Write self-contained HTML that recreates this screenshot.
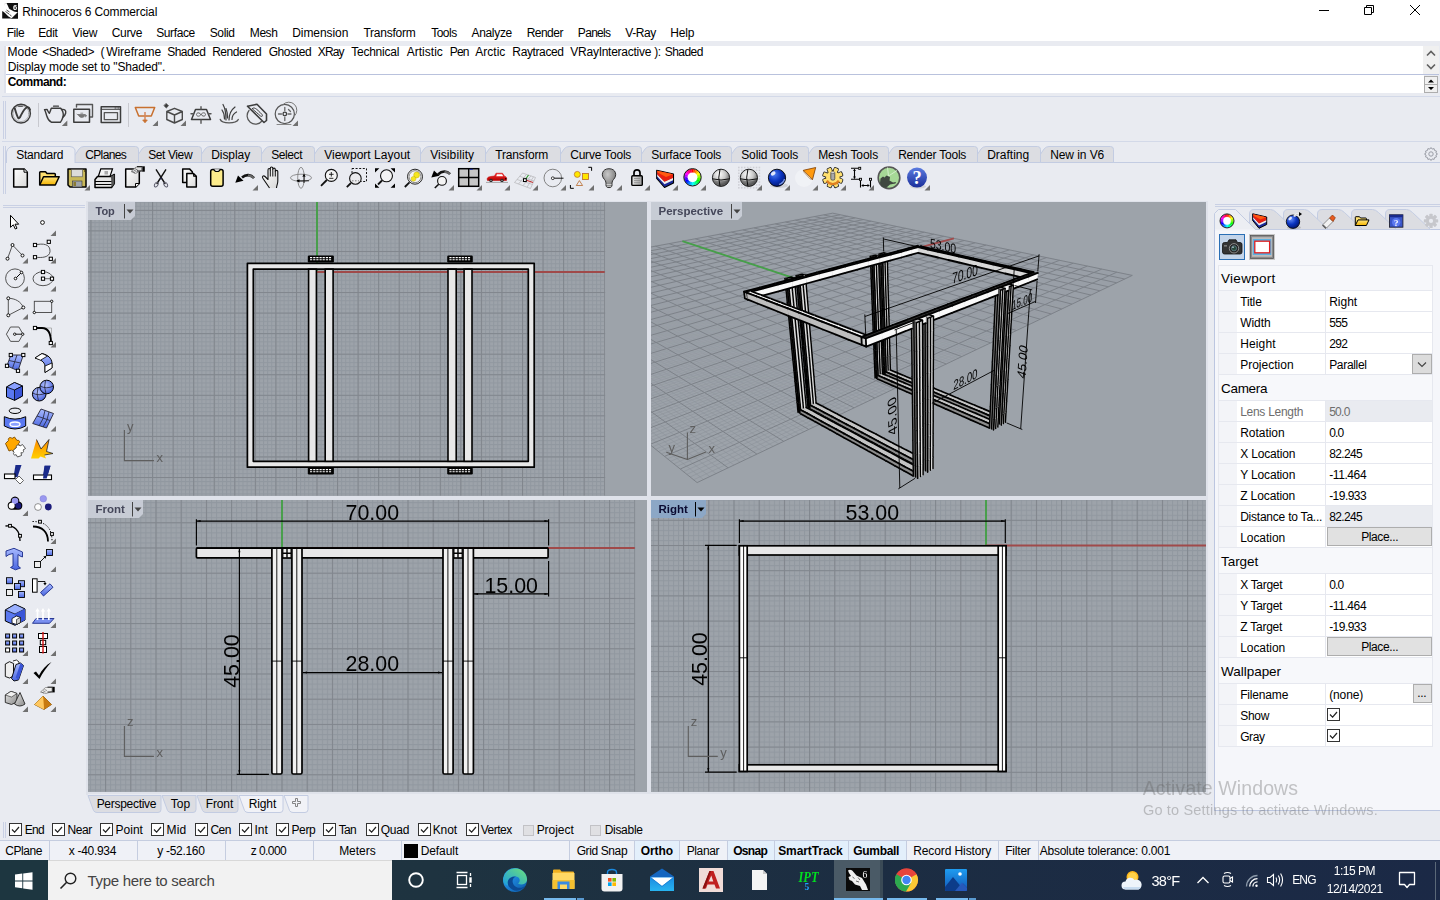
<!DOCTYPE html><html><head><meta charset="utf-8"><title>Rhinoceros 6</title><style>
*{box-sizing:border-box;margin:0;padding:0}
html,body{width:1440px;height:900px;overflow:hidden;background:#e9ebf1;font-family:"Liberation Sans",sans-serif;font-size:12px;color:#000}
.a{position:absolute;white-space:pre}
.t{position:absolute;white-space:pre;line-height:14px;height:14px}
svg{position:absolute;overflow:visible}
</style></head><body>
<div class="a" style="left:0;top:0;width:1440px;height:41px;background:#fff"></div>
<div class="a" style="left:22.16px;top:5.09px;font-size:12px;line-height:15px;height:15px;letter-spacing:-0.132px;">Rhinoceros 6 Commercial</div>
<div class="a" style="left:6.66px;top:26.09px;font-size:12px;line-height:15px;height:15px;letter-spacing:-0.459px;">File</div>
<div class="a" style="left:38.16px;top:26.09px;font-size:12px;line-height:15px;height:15px;letter-spacing:-0.294px;">Edit</div>
<div class="a" style="left:72.16px;top:26.09px;font-size:12px;line-height:15px;height:15px;letter-spacing:-0.198px;">View</div>
<div class="a" style="left:111.66px;top:26.09px;font-size:12px;line-height:15px;height:15px;letter-spacing:-0.302px;">Curve</div>
<div class="a" style="left:156.16px;top:26.09px;font-size:12px;line-height:15px;height:15px;letter-spacing:-0.379px;">Surface</div>
<div class="a" style="left:209.66px;top:26.09px;font-size:12px;line-height:15px;height:15px;letter-spacing:-0.337px;">Solid</div>
<div class="a" style="left:249.86px;top:26.09px;font-size:12px;line-height:15px;height:15px;letter-spacing:-0.460px;">Mesh</div>
<div class="a" style="left:292.16px;top:26.09px;font-size:12px;line-height:15px;height:15px;letter-spacing:-0.054px;">Dimension</div>
<div class="a" style="left:363.46px;top:26.09px;font-size:12px;line-height:15px;height:15px;letter-spacing:-0.247px;">Transform</div>
<div class="a" style="left:431.16px;top:26.09px;font-size:12px;line-height:15px;height:15px;letter-spacing:-0.502px;">Tools</div>
<div class="a" style="left:471.46px;top:26.09px;font-size:12px;line-height:15px;height:15px;letter-spacing:-0.313px;">Analyze</div>
<div class="a" style="left:526.66px;top:26.09px;font-size:12px;line-height:15px;height:15px;letter-spacing:-0.526px;">Render</div>
<div class="a" style="left:577.86px;top:26.09px;font-size:12px;line-height:15px;height:15px;letter-spacing:-0.698px;">Panels</div>
<div class="a" style="left:625.36px;top:26.09px;font-size:12px;line-height:15px;height:15px;letter-spacing:-0.436px;">V-Ray</div>
<div class="a" style="left:670.36px;top:26.09px;font-size:12px;line-height:15px;height:15px;letter-spacing:-0.220px;">Help</div>
<svg style="left:1300px;top:0" width="140" height="22"><g stroke="#000" stroke-width="1" fill="none"><path d="M19 10.5h10"/><path d="M64.5 7.5h7v7h-7z"/><path d="M66.5 7.5v-2h7v7h-2"/><path d="M110 5l10 10M120 5l-10 10"/></g></svg>
<div class="a" style="left:4px;top:46px;width:1419px;height:28px;background:#fff"></div>
<div class="a" style="left:4px;top:74px;width:1435px;height:1px;background:#b9c2dd"></div>
<div class="a" style="left:4px;top:75px;width:1420px;height:18px;background:#fff"></div>
<div class="a" style="left:4px;top:46px;width:2px;height:47px;background:#dfe2ec"></div>
<div class="a" style="left:1423px;top:46px;width:16px;height:28px;background:#f0f0f0"></div>
<div class="a" style="left:7.41px;top:44.79px;font-size:12px;line-height:15px;height:15px;letter-spacing:0.121px;">Mode</div>
<div class="a" style="left:42.16px;top:44.79px;font-size:12px;line-height:15px;height:15px;letter-spacing:-0.423px;">&lt;Shaded&gt;</div>
<div class="a" style="left:100.41px;top:44.79px;font-size:12px;line-height:15px;height:15px;">(</div>
<div class="a" style="left:106.16px;top:44.79px;font-size:12px;line-height:15px;height:15px;letter-spacing:-0.037px;">Wireframe</div>
<div class="a" style="left:167.16px;top:44.79px;font-size:12px;line-height:15px;height:15px;letter-spacing:-0.528px;">Shaded</div>
<div class="a" style="left:212.16px;top:44.79px;font-size:12px;line-height:15px;height:15px;letter-spacing:-0.463px;">Rendered</div>
<div class="a" style="left:268.66px;top:44.79px;font-size:12px;line-height:15px;height:15px;letter-spacing:-0.409px;">Ghosted</div>
<div class="a" style="left:317.86px;top:44.79px;font-size:12px;line-height:15px;height:15px;letter-spacing:-0.911px;">XRay</div>
<div class="a" style="left:351.16px;top:44.79px;font-size:12px;line-height:15px;height:15px;letter-spacing:-0.225px;">Technical</div>
<div class="a" style="left:406.66px;top:44.79px;font-size:12px;line-height:15px;height:15px;letter-spacing:0.025px;">Artistic</div>
<div class="a" style="left:449.66px;top:44.79px;font-size:12px;line-height:15px;height:15px;letter-spacing:-0.784px;">Pen</div>
<div class="a" style="left:475.36px;top:44.79px;font-size:12px;line-height:15px;height:15px;letter-spacing:0.000px;">Arctic</div>
<div class="a" style="left:512.36px;top:44.79px;font-size:12px;line-height:15px;height:15px;letter-spacing:-0.388px;">Raytraced</div>
<div class="a" style="left:570.36px;top:44.79px;font-size:12px;line-height:15px;height:15px;letter-spacing:-0.267px;">VRayInteractive</div>
<div class="a" style="left:654.16px;top:44.79px;font-size:12px;line-height:15px;height:15px;letter-spacing:-0.315px;">):</div>
<div class="a" style="left:664.66px;top:44.79px;font-size:12px;line-height:15px;height:15px;letter-spacing:-0.528px;">Shaded</div>
<div class="a" style="left:7.66px;top:59.79px;font-size:12px;line-height:15px;height:15px;letter-spacing:-0.153px;">Display mode set to "Shaded".</div>
<div class="a" style="left:7.66px;top:75.29px;font-size:12px;line-height:15px;height:15px;font-weight:bold;letter-spacing:-0.521px;">Command:</div>
<svg style="left:1423px;top:46px" width="17" height="48"><g fill="none" stroke="#606060" stroke-width="1.6"><path d="M4 9.5l4-4 4 4"/><path d="M4 18.5l4 4 4-4"/></g><rect x="1.5" y="30.5" width="13" height="8" fill="#f0f0f0" stroke="#adadad"/><rect x="1.5" y="38.5" width="13" height="8" fill="#f0f0f0" stroke="#adadad"/><path d="M5 36.5l3-3 3 3zM5 41l3 3 3-3z" fill="#000"/></svg>
<div class="a" style="left:2px;top:96px;width:1438px;height:1px;background:#d3d9e8"></div>
<div class="a" style="left:2px;top:141px;width:1438px;height:1px;background:#d3d9e8"></div>
<div class="a" style="left:3px;top:101px;width:1px;height:38px;background:#c9d0e4"></div>
<div class="a" style="left:5px;top:101px;width:1px;height:38px;background:#c9d0e4"></div>
<div class="a" style="left:3px;top:146px;width:1px;height:48px;background:#c9d0e4"></div>
<div class="a" style="left:5px;top:146px;width:1px;height:48px;background:#c9d0e4"></div>
<div class="a" style="left:38px;top:103px;width:1px;height:24px;background:#c8c9cf"></div>
<div class="a" style="left:128px;top:103px;width:1px;height:24px;background:#c8c9cf"></div>
<svg style="left:0;top:140px" width="1440" height="30"><path d="M6 22.5H1440" stroke="#c3cce2" fill="none"/><path d="M1035 22.5 L1044 9 Q1046 6.5 1049 6.5 H1110.5 Q1113.5 6.5 1113.5 9.5 V22.5Z" fill="#dcdde2" stroke="#c3cce2"/><path d="M972 22.5 L981 9 Q983 6.5 986 6.5 H1037.5 Q1040.5 6.5 1040.5 9.5 V22.5Z" fill="#dcdde2" stroke="#c3cce2"/><path d="M883 22.5 L892 9 Q894 6.5 897 6.5 H974.5 Q977.5 6.5 977.5 9.5 V22.5Z" fill="#dcdde2" stroke="#c3cce2"/><path d="M803 22.5 L812 9 Q814 6.5 817 6.5 H885.5 Q888.5 6.5 888.5 9.5 V22.5Z" fill="#dcdde2" stroke="#c3cce2"/><path d="M726 22.5 L735 9 Q737 6.5 740 6.5 H805.5 Q808.5 6.5 808.5 9.5 V22.5Z" fill="#dcdde2" stroke="#c3cce2"/><path d="M636 22.5 L645 9 Q647 6.5 650 6.5 H728.5 Q731.5 6.5 731.5 9.5 V22.5Z" fill="#dcdde2" stroke="#c3cce2"/><path d="M555 22.5 L564 9 Q566 6.5 569 6.5 H638.5 Q641.5 6.5 641.5 9.5 V22.5Z" fill="#dcdde2" stroke="#c3cce2"/><path d="M480 22.5 L489 9 Q491 6.5 494 6.5 H557.5 Q560.5 6.5 560.5 9.5 V22.5Z" fill="#dcdde2" stroke="#c3cce2"/><path d="M415 22.5 L424 9 Q426 6.5 429 6.5 H482.5 Q485.5 6.5 485.5 9.5 V22.5Z" fill="#dcdde2" stroke="#c3cce2"/><path d="M309 22.5 L318 9 Q320 6.5 323 6.5 H417.5 Q420.5 6.5 420.5 9.5 V22.5Z" fill="#dcdde2" stroke="#c3cce2"/><path d="M256 22.5 L265 9 Q267 6.5 270 6.5 H311.5 Q314.5 6.5 314.5 9.5 V22.5Z" fill="#dcdde2" stroke="#c3cce2"/><path d="M196 22.5 L205 9 Q207 6.5 210 6.5 H258.5 Q261.5 6.5 261.5 9.5 V22.5Z" fill="#dcdde2" stroke="#c3cce2"/><path d="M133 22.5 L142 9 Q144 6.5 147 6.5 H198.5 Q201.5 6.5 201.5 9.5 V22.5Z" fill="#dcdde2" stroke="#c3cce2"/><path d="M70 22.5 L79 9 Q81 6.5 84 6.5 H135.5 Q138.5 6.5 138.5 9.5 V22.5Z" fill="#dcdde2" stroke="#c3cce2"/><path d="M6.5 23 V12 Q8 6.5 13 6.5 H70 Q74 6.5 75 10 V22.5 H6.5" fill="#e9ebf1" stroke="#c3cce2"/><path d="M7 22.5H74.5" stroke="#e9ebf1" stroke-width="1.6"/></svg>
<div class="a" style="left:16.16px;top:147.59px;font-size:12px;line-height:15px;height:15px;letter-spacing:-0.212px;">Standard</div>
<div class="a" style="left:85.16px;top:147.59px;font-size:12px;line-height:15px;height:15px;letter-spacing:-0.622px;">CPlanes</div>
<div class="a" style="left:148.16px;top:147.59px;font-size:12px;line-height:15px;height:15px;letter-spacing:-0.392px;">Set View</div>
<div class="a" style="left:211.16px;top:147.59px;font-size:12px;line-height:15px;height:15px;letter-spacing:-0.049px;">Display</div>
<div class="a" style="left:271.16px;top:147.59px;font-size:12px;line-height:15px;height:15px;letter-spacing:-0.392px;">Select</div>
<div class="a" style="left:324.16px;top:147.59px;font-size:12px;line-height:15px;height:15px;letter-spacing:0.011px;">Viewport Layout</div>
<div class="a" style="left:430.16px;top:147.59px;font-size:12px;line-height:15px;height:15px;letter-spacing:0.087px;">Visibility</div>
<div class="a" style="left:495.16px;top:147.59px;font-size:12px;line-height:15px;height:15px;letter-spacing:-0.136px;">Transform</div>
<div class="a" style="left:570.16px;top:147.59px;font-size:12px;line-height:15px;height:15px;letter-spacing:-0.194px;">Curve Tools</div>
<div class="a" style="left:651.16px;top:147.59px;font-size:12px;line-height:15px;height:15px;letter-spacing:-0.191px;">Surface Tools</div>
<div class="a" style="left:741.16px;top:147.59px;font-size:12px;line-height:15px;height:15px;letter-spacing:-0.074px;">Solid Tools</div>
<div class="a" style="left:818.16px;top:147.59px;font-size:12px;line-height:15px;height:15px;letter-spacing:-0.047px;">Mesh Tools</div>
<div class="a" style="left:898.16px;top:147.59px;font-size:12px;line-height:15px;height:15px;letter-spacing:-0.207px;">Render Tools</div>
<div class="a" style="left:987.16px;top:147.59px;font-size:12px;line-height:15px;height:15px;letter-spacing:-0.002px;">Drafting</div>
<div class="a" style="left:1050.16px;top:147.59px;font-size:12px;line-height:15px;height:15px;letter-spacing:-0.077px;">New in V6</div>
<svg style="left:1423px;top:146px" width="16" height="16" viewBox="0 0 16 16"><g fill="none" stroke="#9a9da6" stroke-width="1"><circle cx="8" cy="8" r="2.2"/><path d="M8 1.5l1.2 1.6 1.9-.5.5 1.9 1.9.6-.6 1.8L14.5 8l-1.6 1.1.6 1.8-1.9.6-.5 1.9-1.9-.5L8 14.5l-1.2-1.6-1.9.5-.5-1.9-1.9-.6.6-1.8L1.500 8l1.600-1.100-.600-1.800 1.900-.6.500-1.900 1.900.5z"/></g></svg>
<div class="a" style="left:3px;top:205px;width:82px;height:1px;background:#c9d0e4"></div>
<div class="a" style="left:3px;top:207px;width:82px;height:1px;background:#c9d0e4"></div>
<div class="a" style="left:86px;top:201px;width:2px;height:594px;background:#dfe2ea"></div>
<div class="a" style="left:88px;top:201px;width:1120px;height:593px;background:#dfe2ea"></div>
<svg style="left:88px;top:202px;overflow:hidden;opacity:0.999;will-change:transform" width="559" height="294" viewBox="0 0 559 294"><defs><pattern id="gtm" width="4.11" height="4.11" patternUnits="userSpaceOnUse" x="229" y="70"><path d="M0 0.5H4.11M0.5 0V4.11" stroke="#9198a0" stroke-width="1" fill="none"/></pattern><pattern id="gtM" width="20.55" height="20.55" patternUnits="userSpaceOnUse" x="229" y="70"><path d="M0 0.5H20.55M0.5 0V20.55" stroke="#81868d" stroke-width="1.1" fill="none"/></pattern></defs><rect width="559" height="294" fill="#9da3aa"/><rect x="0" y="0" width="516.7" height="294" fill="url(#gtm)" transform="translate(-0.5,-0.5)"/><rect x="0" y="0" width="517.7" height="294" fill="url(#gtM)" transform="translate(-0.5,-0.5)"/><path d="M229 0V70" stroke="#46a049" stroke-width="1.9"/><path d="M229 70H516.7" stroke="#a04a4a" stroke-width="1.9"/><rect x="219.8" y="53.6" width="26.1" height="6.8" rx="1.2" fill="#000"/><path d="M222.0 55.6h2.2M225.2 55.6h2.2M228.3 55.6h2.2M231.5 55.6h2.2M234.6 55.6h2.2M237.8 55.6h2.2M240.9 55.6h2.2M222.0 57.8h2.2M225.2 57.8h2.2M228.3 57.8h2.2M231.5 57.8h2.2M234.6 57.8h2.2M237.8 57.8h2.2M240.9 57.8h2.2" stroke="#fff" stroke-width="1.1"/><rect x="219.8" y="265.6" width="26.1" height="6.8" rx="1.2" fill="#000"/><path d="M222.0 267.6h2.2M225.2 267.6h2.2M228.3 267.6h2.2M231.5 267.6h2.2M234.6 267.6h2.2M237.8 267.6h2.2M240.9 267.6h2.2M222.0 269.8h2.2M225.2 269.8h2.2M228.3 269.8h2.2M231.5 269.8h2.2M234.6 269.8h2.2M237.8 269.8h2.2M240.9 269.8h2.2" stroke="#fff" stroke-width="1.1"/><rect x="359.2" y="53.6" width="25.6" height="6.8" rx="1.2" fill="#000"/><path d="M361.4 55.6h2.2M364.5 55.6h2.2M367.6 55.6h2.2M370.7 55.6h2.2M373.7 55.6h2.2M376.8 55.6h2.2M379.9 55.6h2.2M361.4 57.8h2.2M364.5 57.8h2.2M367.6 57.8h2.2M370.7 57.8h2.2M373.7 57.8h2.2M376.8 57.8h2.2M379.9 57.8h2.2" stroke="#fff" stroke-width="1.1"/><rect x="359.2" y="265.6" width="25.6" height="6.8" rx="1.2" fill="#000"/><path d="M361.4 267.6h2.2M364.5 267.6h2.2M367.6 267.6h2.2M370.7 267.6h2.2M373.7 267.6h2.2M376.8 267.6h2.2M379.9 267.6h2.2M361.4 269.8h2.2M364.5 269.8h2.2M367.6 269.8h2.2M370.7 269.8h2.2M373.7 269.8h2.2M376.8 269.8h2.2M379.9 269.8h2.2" stroke="#fff" stroke-width="1.1"/><path fill-rule="evenodd" d="M159.4 61.30000000000001H446.20000000000005V265.2H159.4ZM165.3 67.20000000000002V259.3H440.30000000000007V67.20000000000002Z" fill="#e8e8e8" stroke="#000" stroke-width="1.7" stroke-linejoin="round"/><rect x="220.6" y="67.2" width="7.8" height="192.1" fill="#e8e8e8" stroke="#000" stroke-width="1.6"/><rect x="237.2" y="67.2" width="7.9" height="192.1" fill="#e8e8e8" stroke="#000" stroke-width="1.6"/><rect x="360.0" y="67.2" width="8.2" height="192.1" fill="#e8e8e8" stroke="#000" stroke-width="1.6"/><rect x="376.1" y="67.2" width="7.9" height="192.1" fill="#e8e8e8" stroke="#000" stroke-width="1.6"/><path d="M36.400000000000006 228.10000000000002V258.6H65.9" stroke="#5e5e5e" stroke-width="1.1" fill="none"/><text x="38.900000000000006" y="228.60000000000002" font-family="Liberation Sans" font-size="13" fill="#5e5e5e">y</text><text x="68.4" y="259.6" font-family="Liberation Sans" font-size="13" fill="#5e5e5e">x</text><path d="M0 0H47V14L43 18H0Z" fill="#c9cdd6" opacity="0.96"/><text x="7.5" y="13" font-family="Liberation Sans" font-weight="bold" font-size="11" fill="#45475a">Top</text><path d="M36.5 2V16.5" stroke="#444" stroke-width="1"/><path d="M38.5 7.5h7l-3.5 4z" fill="#444"/></svg>
<svg style="left:88px;top:500px;overflow:hidden;opacity:0.999;will-change:transform" width="559" height="292" viewBox="0 0 559 292"><defs><pattern id="gfm" width="5.04" height="5.04" patternUnits="userSpaceOnUse" x="194" y="48"><path d="M0 0.5H5.04M0.5 0V5.04" stroke="#9198a0" stroke-width="1" fill="none"/></pattern><pattern id="gfM" width="25.2" height="25.2" patternUnits="userSpaceOnUse" x="194" y="48"><path d="M0 0.5H25.2M0.5 0V25.2" stroke="#81868d" stroke-width="1.1" fill="none"/></pattern></defs><rect width="559" height="292" fill="#9da3aa"/><rect x="0" y="0" width="546.8" height="292" fill="url(#gfm)" transform="translate(-0.5,-0.5)"/><rect x="0" y="0" width="547.8" height="292" fill="url(#gfM)" transform="translate(-0.5,-0.5)"/><path d="M194 0V48" stroke="#46a049" stroke-width="1.9"/><path d="M194 48H546.8" stroke="#a04a4a" stroke-width="1.9"/><rect x="108.4" y="48.1" width="351.7" height="9.7" rx="1" fill="#e8e8e8" stroke="#000" stroke-width="1.7"/><path d="M183.9 48.1V272.5Q183.9 274.0 185.4 274.0H192.5Q194.0 274.0 194.0 272.5V48.1" fill="#f2f2f2" stroke="#000" stroke-width="1.7"/><path d="M188.8 48.1V274.0" stroke="#000" stroke-width="0.9"/><path d="M183.9 161.1H194.0" stroke="#000" stroke-width="0.9"/><path d="M203.9 48.1V272.5Q203.9 274.0 205.4 274.0H212.5Q214.0 274.0 214.0 272.5V48.1" fill="#f2f2f2" stroke="#000" stroke-width="1.7"/><path d="M208.8 48.1V274.0" stroke="#000" stroke-width="0.9"/><path d="M203.9 161.1H214.0" stroke="#000" stroke-width="0.9"/><path d="M355.0 48.1V272.5Q355.0 274.0 356.5 274.0H363.6Q365.1 274.0 365.1 272.5V48.1" fill="#f2f2f2" stroke="#000" stroke-width="1.7"/><path d="M359.9 48.1V274.0" stroke="#000" stroke-width="0.9"/><path d="M355.0 161.1H365.1" stroke="#000" stroke-width="0.9"/><path d="M375.0 48.1V272.5Q375.0 274.0 376.5 274.0H383.9Q385.4 274.0 385.4 272.5V48.1" fill="#f2f2f2" stroke="#000" stroke-width="1.7"/><path d="M380.0 48.1V274.0" stroke="#000" stroke-width="0.9"/><path d="M375.0 161.1H385.4" stroke="#000" stroke-width="0.9"/><rect x="194.8" y="48.1" width="8.3" height="9.7" fill="#f2f2f2" stroke="#000" stroke-width="1.2"/><path d="M199.0 48.1V57.8M194.8 53.3H203.1" stroke="#000" stroke-width="1.4"/><rect x="365.9" y="48.1" width="8.3" height="9.7" fill="#f2f2f2" stroke="#000" stroke-width="1.2"/><path d="M370.0 48.1V57.8M365.9 53.3H374.2" stroke="#000" stroke-width="1.4"/><path d="M108.4 48.1H460.1" stroke="#000" stroke-width="1.7"/><path d="M108.4 21.100000000000023H460.6M108.4 19.200000000000045V45.60000000000002M460.6 19.200000000000045V45.60000000000002" stroke="#000" stroke-width="1.15" fill="none"/><path d="M108.4 21.100000000000023L112.6 20.1L112.6 22.1Z" fill="#000"/><path d="M460.6 21.100000000000023L456.4 22.1L456.4 20.1Z" fill="#000"/><text x="284.3" y="20.200000000000045" font-family="Liberation Sans" font-size="21.4" text-anchor="middle" fill="#000">70.00</text><path d="M385.9 93.89999999999998H460.6M460.6 60.89999999999998V96.39999999999998" stroke="#000" stroke-width="1.15" fill="none"/><path d="M385.9 93.89999999999998L390.1 92.9L390.1 94.9Z" fill="#000"/><path d="M460.6 93.89999999999998L456.4 94.9L456.4 92.9Z" fill="#000"/><text x="423.2" y="92.60000000000002" font-family="Liberation Sans" font-size="21.4" text-anchor="middle" fill="#000">15.00</text><path d="M214.8 172.60000000000002H354.2" stroke="#000" stroke-width="1.15" fill="none"/><path d="M214.8 172.60000000000002L219.0 171.6L219.0 173.6Z" fill="#000"/><path d="M354.2 172.60000000000002L350.0 173.6L350.0 171.6Z" fill="#000"/><text x="284.3" y="171.39999999999998" font-family="Liberation Sans" font-size="21.4" text-anchor="middle" fill="#000">28.00</text><path d="M151.4 48V274.4M148.7 274.4H180.89999999999998" stroke="#000" stroke-width="1.15" fill="none"/><path d="M151.4 48L152.4 52.2L150.4 52.2Z" fill="#000"/><path d="M151.4 274.4L150.4 270.2L152.4 270.2Z" fill="#000"/><text x="150.6" y="161" font-family="Liberation Sans" font-size="21.4" text-anchor="middle" fill="#000" transform="rotate(-90 150.6 161)">45.00</text><path d="M36.400000000000006 225.89999999999998V256.4H65.9" stroke="#5e5e5e" stroke-width="1.1" fill="none"/><text x="38.900000000000006" y="226.39999999999998" font-family="Liberation Sans" font-size="13" fill="#5e5e5e">z</text><text x="68.4" y="257.4" font-family="Liberation Sans" font-size="13" fill="#5e5e5e">x</text><path d="M0 0H55V14L51 18H0Z" fill="#c9cdd6" opacity="0.96"/><text x="7.5" y="13" font-family="Liberation Sans" font-weight="bold" font-size="11.5" fill="#45475a">Front</text><path d="M44.5 2V16.5" stroke="#444" stroke-width="1"/><path d="M46.5 7.5h7l-3.5 4z" fill="#444"/></svg>
<svg style="left:651px;top:500px;overflow:hidden;opacity:0.999;will-change:transform" width="555" height="292" viewBox="0 0 555 292"><defs><pattern id="grm" width="5.04" height="5.04" patternUnits="userSpaceOnUse" x="335" y="45.5"><path d="M0 0.5H5.04M0.5 0V5.04" stroke="#9198a0" stroke-width="1" fill="none"/></pattern><pattern id="grM" width="25.2" height="25.2" patternUnits="userSpaceOnUse" x="335" y="45.5"><path d="M0 0.5H25.2M0.5 0V25.2" stroke="#81868d" stroke-width="1.1" fill="none"/></pattern></defs><rect width="555" height="292" fill="#9da3aa"/><rect x="0" y="0" width="555" height="292" fill="url(#grm)" transform="translate(-0.5,-0.5)"/><rect x="0" y="0" width="556" height="292" fill="url(#grM)" transform="translate(-0.5,-0.5)"/><path d="M335 0V45.5" stroke="#46a049" stroke-width="1.9"/><path d="M335 45.5H555" stroke="#a04a4a" stroke-width="1.9"/><rect x="88.4" y="45.8" width="266.6" height="9.2" fill="#e8e8e8" stroke="#000" stroke-width="1.7"/><rect x="88.4" y="264.8" width="266.6" height="6.6" fill="#e8e8e8" stroke="#000" stroke-width="1.7"/><rect x="88.4" y="45.8" width="7.8" height="225.6" fill="#fff" stroke="#000" stroke-width="1.7"/><path d="M92.6 45.8V271.4" stroke="#000" stroke-width="0.9"/><path d="M88.4 157.8h7.8" stroke="#000" stroke-width="0.9"/><rect x="347.2" y="45.8" width="7.8" height="225.6" fill="#fff" stroke="#000" stroke-width="1.7"/><path d="M351.4 45.8V271.4" stroke="#000" stroke-width="0.9"/><path d="M347.2 157.8h7.8" stroke="#000" stroke-width="0.9"/><path d="M88.39999999999998 21.100000000000023H354.29999999999995M88.39999999999998 19.200000000000045V43M354.29999999999995 19.200000000000045V43" stroke="#000" stroke-width="1.15" fill="none"/><path d="M88.39999999999998 21.100000000000023L92.6 20.1L92.6 22.1Z" fill="#000"/><path d="M354.29999999999995 21.100000000000023L350.1 22.1L350.1 20.1Z" fill="#000"/><text x="221.29999999999995" y="20.200000000000045" font-family="Liberation Sans" font-size="21.4" text-anchor="middle" fill="#000">53.00</text><path d="M57.299999999999955 45.299999999999955V272.1M54 45.299999999999955H85.70000000000005M54 272.1H85.70000000000005" stroke="#000" stroke-width="1.15" fill="none"/><path d="M57.299999999999955 45.299999999999955L58.3 49.5L56.3 49.5Z" fill="#000"/><path d="M57.299999999999955 272.1L56.3 267.9L58.3 267.9Z" fill="#000"/><text x="56.39999999999998" y="159" font-family="Liberation Sans" font-size="21.4" text-anchor="middle" fill="#000" transform="rotate(-90 56.39999999999998 159)">45.00</text><path d="M37.299999999999955 225.89999999999998V256.4H66.79999999999995" stroke="#5e5e5e" stroke-width="1.1" fill="none"/><text x="39.799999999999955" y="226.39999999999998" font-family="Liberation Sans" font-size="13" fill="#5e5e5e">z</text><text x="69.29999999999995" y="257.4" font-family="Liberation Sans" font-size="13" fill="#5e5e5e">y</text><path d="M0 0H55V14L51 18H0Z" fill="#8ba8c7" opacity="0.96"/><text x="7.5" y="13" font-family="Liberation Sans" font-weight="bold" font-size="11.5" fill="#0a0a30">Right</text><path d="M44.5 2V16.5" stroke="#000" stroke-width="1"/><path d="M46.5 7.5h7l-3.5 4z" fill="#000"/></svg>
<svg style="left:651px;top:202px;overflow:hidden;opacity:0.999;will-change:transform" width="555" height="294" viewBox="0 0 555 294"><rect width="555" height="294" fill="#9da3aa"/><defs><linearGradient id="pgA" gradientUnits="userSpaceOnUse" x1="0" y1="95" x2="0" y2="215"><stop offset="0" stop-color="#000"/><stop offset="1" stop-color="#fff"/></linearGradient><linearGradient id="pgB" gradientUnits="userSpaceOnUse" x1="0" y1="95" x2="0" y2="215"><stop offset="0" stop-color="#fff"/><stop offset="1" stop-color="#000"/></linearGradient><mask id="pmA" maskUnits="userSpaceOnUse" x="0" y="0" width="555" height="294"><rect width="555" height="294" fill="url(#pgA)"/></mask><mask id="pmB" maskUnits="userSpaceOnUse" x="0" y="0" width="555" height="294"><rect width="555" height="294" fill="url(#pgB)"/></mask></defs><g mask="url(#pmB)"><path d="M52.5 277.5L-196.0 81.5M42.6 277.8L478.2 72.8M58.8 274.5L-191.9 80.8M39.2 275.0L475.1 72.1M65.0 271.6L-187.8 80.0M35.9 272.3L472.0 71.5M71.1 268.7L-183.7 79.2M32.5 269.7L468.9 70.8M83.0 263.0L-175.6 77.7M26.0 264.4L462.8 69.6M88.9 260.2L-171.6 77.0M22.9 261.9L459.8 68.9M94.6 257.5L-167.6 76.2M19.7 259.3L456.8 68.3M100.3 254.8L-163.7 75.5M16.6 256.8L453.8 67.7M111.4 249.5L-155.9 74.1M10.5 251.9L447.9 66.5M116.8 246.9L-152.0 73.3M7.5 249.5L445.0 65.9M122.2 244.3L-148.2 72.6M4.6 247.2L442.1 65.3M127.5 241.8L-144.4 71.9M1.7 244.8L439.2 64.7M137.8 236.9L-136.9 70.5M-4.0 240.2L433.5 63.5M142.9 234.5L-133.2 69.8M-6.8 238.0L430.6 62.9M147.9 232.1L-129.5 69.1M-9.6 235.8L427.8 62.3M152.9 229.7L-125.8 68.5M-12.3 233.6L425.0 61.7M162.5 225.1L-118.6 67.1M-17.7 229.2L419.5 60.6M167.3 222.9L-115.0 66.4M-20.3 227.1L416.8 60.0M172.0 220.7L-111.4 65.8M-22.9 225.0L414.1 59.4M176.6 218.4L-107.9 65.1M-25.5 223.0L411.3 58.9M185.7 214.1L-100.9 63.8M-30.5 218.9L406.0 57.8M190.1 212.0L-97.5 63.2M-33.0 216.9L403.3 57.2M194.5 209.9L-94.0 62.5M-35.4 214.9L400.7 56.7M198.9 207.9L-90.6 61.9M-37.9 213.0L398.1 56.1M207.4 203.8L-83.9 60.7M-42.6 209.2L392.9 55.1M211.6 201.8L-80.5 60.0M-45.0 207.3L390.3 54.5M215.7 199.8L-77.2 59.4M-47.3 205.4L387.7 54.0M219.8 197.9L-73.9 58.8M-49.5 203.6L385.2 53.5M227.8 194.1L-67.4 57.6M-54.0 200.0L380.1 52.4M231.7 192.2L-64.2 57.0M-56.3 198.2L377.6 51.9M235.6 190.4L-60.9 56.4M-58.4 196.4L375.2 51.4M239.4 188.5L-57.8 55.8M-60.6 194.7L372.7 50.9M247.0 184.9L-51.5 54.6M-64.9 191.3L367.8 49.9M250.7 183.2L-48.3 54.0M-66.9 189.6L365.4 49.3M254.4 181.4L-45.2 53.5M-69.0 187.9L363.0 48.8M258.0 179.7L-42.1 52.9M-71.1 186.3L360.6 48.4M265.1 176.3L-36.0 51.8M-75.1 183.0L355.8 47.4M268.6 174.7L-33.0 51.2M-77.1 181.4L353.5 46.9M272.1 173.0L-30.0 50.6M-79.0 179.8L351.1 46.4M275.5 171.4L-27.0 50.1M-81.0 178.3L348.8 45.9M282.2 168.2L-21.1 49.0M-84.8 175.2L344.2 45.0M285.6 166.6L-18.2 48.4M-86.7 173.7L341.9 44.5M288.8 165.0L-15.3 47.9M-88.5 172.2L339.6 44.0M292.1 163.5L-12.4 47.4M-90.4 170.7L337.4 43.5M298.5 160.4L-6.7 46.3M-94.0 167.8L332.9 42.6M301.6 159.0L-3.9 45.8M-95.8 166.3L330.7 42.1M304.7 157.5L-1.1 45.2M-97.6 164.9L328.4 41.7M307.8 156.0L1.7 44.7M-99.3 163.5L326.2 41.2M313.8 153.1L7.3 43.7M-102.8 160.7L321.9 40.3M316.8 151.7L10.0 43.2M-104.5 159.4L319.7 39.9M319.7 150.3L12.8 42.7M-106.2 158.0L317.6 39.4M322.7 148.9L15.5 42.2M-107.8 156.7L315.4 39.0M328.4 146.2L20.8 41.2M-111.1 154.0L311.2 38.1M331.2 144.8L23.5 40.7M-112.8 152.7L309.1 37.7M334.0 143.5L26.1 40.2M-114.4 151.4L307.0 37.2M336.8 142.2L28.8 39.7M-116.0 150.1L304.9 36.8M342.3 139.6L34.0 38.7M-119.1 147.6L300.8 36.0M345.0 138.3L36.6 38.2M-120.6 146.4L298.8 35.5M347.6 137.0L39.1 37.8M-122.2 145.1L296.7 35.1M350.3 135.8L41.7 37.3M-123.7 143.9L294.7 34.7M355.5 133.3L46.7 36.4M-126.7 141.5L290.7 33.9M358.0 132.1L49.2 35.9M-128.2 140.3L288.7 33.4M360.6 130.9L51.7 35.4M-129.6 139.1L286.7 33.0M363.1 129.7L54.2 35.0M-131.1 137.9L284.8 32.6M368.0 127.3L59.1 34.1M-133.9 135.6L280.8 31.8M370.5 126.2L61.5 33.6M-135.4 134.5L278.9 31.4M372.9 125.0L64.0 33.1M-136.8 133.4L277.0 31.0M375.3 123.9L66.4 32.7M-138.2 132.3L275.1 30.6M380.0 121.6L71.1 31.8M-140.9 130.1L271.3 29.8M382.4 120.5L73.5 31.4M-142.2 129.0L269.4 29.4M384.7 119.4L75.8 30.9M-143.6 127.9L267.5 29.0M387.0 118.3L78.2 30.5M-144.9 126.8L265.6 28.6M391.5 116.2L82.8 29.6M-147.5 124.7L261.9 27.9M393.7 115.1L85.1 29.2M-148.8 123.7L260.1 27.5M395.9 114.1L87.4 28.8M-150.1 122.6L258.2 27.1M398.1 113.0L89.6 28.4M-151.4 121.6L256.4 26.7M402.4 111.0L94.1 27.5M-153.9 119.6L252.8 26.0M404.6 109.9L96.4 27.1M-155.1 118.6L251.0 25.6M406.7 108.9L98.6 26.7M-156.4 117.6L249.2 25.2M408.8 107.9L100.8 26.3M-157.6 116.6L247.5 24.9M412.9 106.0L105.2 25.5M-160.0 114.7L243.9 24.2M414.9 105.0L107.3 25.1M-161.2 113.7L242.2 23.8M417.0 104.0L109.5 24.7M-162.4 112.8L240.4 23.4M419.0 103.1L111.6 24.3M-163.5 111.8L238.7 23.1M422.9 101.2L115.9 23.5M-165.9 110.0L235.3 22.4M424.9 100.3L118.0 23.1M-167.0 109.0L233.6 22.0M426.8 99.3L120.1 22.7M-168.1 108.1L231.9 21.6M428.8 98.4L122.2 22.3M-169.3 107.2L230.2 21.3M432.6 96.6L126.3 21.5M-171.5 105.4L226.8 20.6M434.4 95.7L128.4 21.2M-172.6 104.5L225.2 20.3M436.3 94.8L130.4 20.8M-173.7 103.7L223.5 19.9M438.1 94.0L132.5 20.4M-174.8 102.8L221.9 19.6M441.8 92.2L136.5 19.7M-176.9 101.1L218.6 18.9M443.6 91.4L138.5 19.3M-178.0 100.2L217.0 18.6M445.4 90.5L140.5 18.9M-179.0 99.4L215.4 18.2M447.1 89.7L142.5 18.5M-180.1 98.5L213.8 17.9M450.6 88.0L146.4 17.8M-182.1 96.9L210.6 17.2M452.4 87.2L148.3 17.4M-183.1 96.1L209.0 16.9M454.1 86.4L150.3 17.1M-184.1 95.2L207.4 16.6M455.8 85.6L152.2 16.7M-185.1 94.4L205.8 16.2M459.2 84.0L156.0 16.0M-187.1 92.8L202.7 15.6M460.8 83.2L157.9 15.7M-188.1 92.1L201.2 15.3M462.5 82.4L159.8 15.3M-189.1 91.3L199.6 15.0M464.1 81.6L161.7 15.0M-190.0 90.5L198.1 14.6M467.3 80.1L165.4 14.3M-192.0 89.0L195.1 14.0M468.9 79.3L167.2 13.9M-192.9 88.2L193.5 13.7M470.5 78.5L169.1 13.6M-193.8 87.4L192.0 13.4M472.1 77.8L170.9 13.2M-194.8 86.7L190.5 13.1M475.2 76.3L174.5 12.6M-196.6 85.2L187.6 12.5M476.8 75.6L176.3 12.2M-197.5 84.5L186.1 12.1M478.3 74.8L178.1 11.9M-198.4 83.7L184.6 11.8M479.8 74.1L179.9 11.6M-199.3 83.0L183.2 11.5" stroke="#8b9199" stroke-width="2.4" fill="none" opacity="0.2"/></g><g mask="url(#pmA)"><path d="M52.5 277.5L-196.0 81.5M42.6 277.8L478.2 72.8M58.8 274.5L-191.9 80.8M39.2 275.0L475.1 72.1M65.0 271.6L-187.8 80.0M35.9 272.3L472.0 71.5M71.1 268.7L-183.7 79.2M32.5 269.7L468.9 70.8M83.0 263.0L-175.6 77.7M26.0 264.4L462.8 69.6M88.9 260.2L-171.6 77.0M22.9 261.9L459.8 68.9M94.6 257.5L-167.6 76.2M19.7 259.3L456.8 68.3M100.3 254.8L-163.7 75.5M16.6 256.8L453.8 67.7M111.4 249.5L-155.9 74.1M10.5 251.9L447.9 66.5M116.8 246.9L-152.0 73.3M7.5 249.5L445.0 65.9M122.2 244.3L-148.2 72.6M4.6 247.2L442.1 65.3M127.5 241.8L-144.4 71.9M1.7 244.8L439.2 64.7M137.8 236.9L-136.9 70.5M-4.0 240.2L433.5 63.5M142.9 234.5L-133.2 69.8M-6.8 238.0L430.6 62.9M147.9 232.1L-129.5 69.1M-9.6 235.8L427.8 62.3M152.9 229.7L-125.8 68.5M-12.3 233.6L425.0 61.7M162.5 225.1L-118.6 67.1M-17.7 229.2L419.5 60.6M167.3 222.9L-115.0 66.4M-20.3 227.1L416.8 60.0M172.0 220.7L-111.4 65.8M-22.9 225.0L414.1 59.4M176.6 218.4L-107.9 65.1M-25.5 223.0L411.3 58.9M185.7 214.1L-100.9 63.8M-30.5 218.9L406.0 57.8M190.1 212.0L-97.5 63.2M-33.0 216.9L403.3 57.2M194.5 209.9L-94.0 62.5M-35.4 214.9L400.7 56.7M198.9 207.9L-90.6 61.9M-37.9 213.0L398.1 56.1M207.4 203.8L-83.9 60.7M-42.6 209.2L392.9 55.1M211.6 201.8L-80.5 60.0M-45.0 207.3L390.3 54.5M215.7 199.8L-77.2 59.4M-47.3 205.4L387.7 54.0M219.8 197.9L-73.9 58.8M-49.5 203.6L385.2 53.5M227.8 194.1L-67.4 57.6M-54.0 200.0L380.1 52.4M231.7 192.2L-64.2 57.0M-56.3 198.2L377.6 51.9M235.6 190.4L-60.9 56.4M-58.4 196.4L375.2 51.4M239.4 188.5L-57.8 55.8M-60.6 194.7L372.7 50.9M247.0 184.9L-51.5 54.6M-64.9 191.3L367.8 49.9M250.7 183.2L-48.3 54.0M-66.9 189.6L365.4 49.3M254.4 181.4L-45.2 53.5M-69.0 187.9L363.0 48.8M258.0 179.7L-42.1 52.9M-71.1 186.3L360.6 48.4M265.1 176.3L-36.0 51.8M-75.1 183.0L355.8 47.4M268.6 174.7L-33.0 51.2M-77.1 181.4L353.5 46.9M272.1 173.0L-30.0 50.6M-79.0 179.8L351.1 46.4M275.5 171.4L-27.0 50.1M-81.0 178.3L348.8 45.9M282.2 168.2L-21.1 49.0M-84.8 175.2L344.2 45.0M285.6 166.6L-18.2 48.4M-86.7 173.7L341.9 44.5M288.8 165.0L-15.3 47.9M-88.5 172.2L339.6 44.0M292.1 163.5L-12.4 47.4M-90.4 170.7L337.4 43.5M298.5 160.4L-6.7 46.3M-94.0 167.8L332.9 42.6M301.6 159.0L-3.9 45.8M-95.8 166.3L330.7 42.1M304.7 157.5L-1.1 45.2M-97.6 164.9L328.4 41.7M307.8 156.0L1.7 44.7M-99.3 163.5L326.2 41.2M313.8 153.1L7.3 43.7M-102.8 160.7L321.9 40.3M316.8 151.7L10.0 43.2M-104.5 159.4L319.7 39.9M319.7 150.3L12.8 42.7M-106.2 158.0L317.6 39.4M322.7 148.9L15.5 42.2M-107.8 156.7L315.4 39.0M328.4 146.2L20.8 41.2M-111.1 154.0L311.2 38.1M331.2 144.8L23.5 40.7M-112.8 152.7L309.1 37.7M334.0 143.5L26.1 40.2M-114.4 151.4L307.0 37.2M336.8 142.2L28.8 39.7M-116.0 150.1L304.9 36.8M342.3 139.6L34.0 38.7M-119.1 147.6L300.8 36.0M345.0 138.3L36.6 38.2M-120.6 146.4L298.8 35.5M347.6 137.0L39.1 37.8M-122.2 145.1L296.7 35.1M350.3 135.8L41.7 37.3M-123.7 143.9L294.7 34.7M355.5 133.3L46.7 36.4M-126.7 141.5L290.7 33.9M358.0 132.1L49.2 35.9M-128.2 140.3L288.7 33.4M360.6 130.9L51.7 35.4M-129.6 139.1L286.7 33.0M363.1 129.7L54.2 35.0M-131.1 137.9L284.8 32.6M368.0 127.3L59.1 34.1M-133.9 135.6L280.8 31.8M370.5 126.2L61.5 33.6M-135.4 134.5L278.9 31.4M372.9 125.0L64.0 33.1M-136.8 133.4L277.0 31.0M375.3 123.9L66.4 32.7M-138.2 132.3L275.1 30.6M380.0 121.6L71.1 31.8M-140.9 130.1L271.3 29.8M382.4 120.5L73.5 31.4M-142.2 129.0L269.4 29.4M384.7 119.4L75.8 30.9M-143.6 127.9L267.5 29.0M387.0 118.3L78.2 30.5M-144.9 126.8L265.6 28.6M391.5 116.2L82.8 29.6M-147.5 124.7L261.9 27.9M393.7 115.1L85.1 29.2M-148.8 123.7L260.1 27.5M395.9 114.1L87.4 28.8M-150.1 122.6L258.2 27.1M398.1 113.0L89.6 28.4M-151.4 121.6L256.4 26.7M402.4 111.0L94.1 27.5M-153.9 119.6L252.8 26.0M404.6 109.9L96.4 27.1M-155.1 118.6L251.0 25.6M406.7 108.9L98.6 26.7M-156.4 117.6L249.2 25.2M408.8 107.9L100.8 26.3M-157.6 116.6L247.5 24.9M412.9 106.0L105.2 25.5M-160.0 114.7L243.9 24.2M414.9 105.0L107.3 25.1M-161.2 113.7L242.2 23.8M417.0 104.0L109.5 24.7M-162.4 112.8L240.4 23.4M419.0 103.1L111.6 24.3M-163.5 111.8L238.7 23.1M422.9 101.2L115.9 23.5M-165.9 110.0L235.3 22.4M424.9 100.3L118.0 23.1M-167.0 109.0L233.6 22.0M426.8 99.3L120.1 22.7M-168.1 108.1L231.9 21.6M428.8 98.4L122.2 22.3M-169.3 107.2L230.2 21.3M432.6 96.6L126.3 21.5M-171.5 105.4L226.8 20.6M434.4 95.7L128.4 21.2M-172.6 104.5L225.2 20.3M436.3 94.8L130.4 20.8M-173.7 103.7L223.5 19.9M438.1 94.0L132.5 20.4M-174.8 102.8L221.9 19.6M441.8 92.2L136.5 19.7M-176.9 101.1L218.6 18.9M443.6 91.4L138.5 19.3M-178.0 100.2L217.0 18.6M445.4 90.5L140.5 18.9M-179.0 99.4L215.4 18.2M447.1 89.7L142.5 18.5M-180.1 98.5L213.8 17.9M450.6 88.0L146.4 17.8M-182.1 96.9L210.6 17.2M452.4 87.2L148.3 17.4M-183.1 96.1L209.0 16.9M454.1 86.4L150.3 17.1M-184.1 95.2L207.4 16.6M455.8 85.6L152.2 16.7M-185.1 94.4L205.8 16.2M459.2 84.0L156.0 16.0M-187.1 92.8L202.7 15.6M460.8 83.2L157.9 15.7M-188.1 92.1L201.2 15.3M462.5 82.4L159.8 15.3M-189.1 91.3L199.6 15.0M464.1 81.6L161.7 15.0M-190.0 90.5L198.1 14.6M467.3 80.1L165.4 14.3M-192.0 89.0L195.1 14.0M468.9 79.3L167.2 13.9M-192.9 88.2L193.5 13.7M470.5 78.5L169.1 13.6M-193.8 87.4L192.0 13.4M472.1 77.8L170.9 13.2M-194.8 86.7L190.5 13.1M475.2 76.3L174.5 12.6M-196.6 85.2L187.6 12.5M476.8 75.6L176.3 12.2M-197.5 84.5L186.1 12.1M478.3 74.8L178.1 11.9M-198.4 83.7L184.6 11.8M479.8 74.1L179.9 11.6M-199.3 83.0L183.2 11.5" stroke="#8b9199" stroke-width="0.6" fill="none" opacity="0.85"/></g><path d="M46.1 280.6L-200.2 82.3M46.1 280.6L481.3 73.4M77.1 265.8L-179.6 78.5M29.3 267.0L465.8 70.2M105.9 252.1L-159.7 74.8M13.6 254.4L450.8 67.1M132.7 239.3L-140.6 71.2M-1.2 242.5L436.3 64.1M157.7 227.4L-122.2 67.8M-15.0 231.4L422.3 61.2M181.2 216.3L-104.4 64.5M-28.0 220.9L408.7 58.3M203.1 205.8L-87.2 61.3M-40.2 211.1L395.5 55.6M223.8 196.0L-70.6 58.2M-51.8 201.8L382.7 52.9M243.2 186.7L-54.6 55.2M-62.7 193.0L370.2 50.4M261.6 178.0L-39.1 52.3M-73.1 184.6L358.2 47.9M278.9 169.8L-24.1 49.5M-82.9 176.7L346.5 45.4M295.3 162.0L-9.6 46.8M-92.2 169.2L335.1 43.1M310.8 154.6L4.5 44.2M-101.1 162.1L324.1 40.8M325.6 147.6L18.2 41.7M-109.5 155.3L313.3 38.5M339.6 140.9L31.4 39.2M-117.5 148.9L302.9 36.4M352.9 134.5L44.2 36.8M-125.2 142.7L292.7 34.3M365.6 128.5L56.7 34.5M-132.5 136.8L282.8 32.2M377.7 122.7L68.7 32.3M-139.5 131.2L273.2 30.2M389.2 117.2L80.5 30.1M-146.2 125.8L263.8 28.3M400.3 112.0L91.9 27.9M-152.6 120.6L254.6 26.4M410.8 107.0L103.0 25.9M-158.8 115.6L245.7 24.5M421.0 102.1L113.8 23.9M-164.7 110.9L237.0 22.7M430.7 97.5L124.3 21.9M-170.4 106.3L228.5 21.0M440.0 93.1L134.5 20.0M-175.8 101.9L220.2 19.2M448.9 88.8L144.4 18.2M-181.1 97.7L212.2 17.6M457.5 84.8L154.1 16.4M-186.1 93.6L204.3 15.9M465.7 80.8L163.5 14.6M-191.0 89.7L196.6 14.3M473.7 77.0L172.7 12.9M-195.7 85.9L189.1 12.8M481.3 73.4L181.7 11.2M-200.2 82.3L181.7 11.2" stroke="#7d8289" stroke-width="1" fill="none"/><path d="M148.2 77.8L302.9 36.4" stroke="#a04a4a" stroke-width="1.8" fill="none"/><path d="M148.2 77.8L31.4 39.2" stroke="#46a049" stroke-width="1.8" fill="none"/><polygon points="235.1,173.7 239.5,171.7 239.2,162.5 234.9,164.4" fill="#dedede" stroke="#dedede" stroke-width="0.4"/><path d="M239.5 171.7L239.2 162.5M234.9 164.4L235.1 173.7M237.3 172.7L237.0 163.4" stroke="#000" stroke-width="1.45" fill="none" stroke-linecap="round" stroke-linejoin="round"/><polygon points="235.1,173.7 232.1,172.4 231.8,163.1 234.9,164.4" fill="#8c8c8c" stroke="#8c8c8c" stroke-width="0.4"/><path d="M232.1 172.4L231.8 163.1M234.9 164.4L235.1 173.7M233.6 173.0L233.3 163.7" stroke="#000" stroke-width="1.45" fill="none" stroke-linecap="round" stroke-linejoin="round"/><polygon points="241.9,172.9 246.3,170.9 239.4,168.0 235.0,170.0" fill="#c4c4c4" stroke="#c4c4c4" stroke-width="0.4"/><path d="M246.3 170.9L239.4 168.0M235.0 170.0L241.9 172.9" stroke="#000" stroke-width="1.7" fill="none" stroke-linecap="round" stroke-linejoin="round"/><polygon points="242.0,176.6 235.1,173.7 235.0,170.0 241.9,172.9" fill="#8c8c8c" stroke="#8c8c8c" stroke-width="0.4"/><path d="M242.0 176.6L235.1 173.7M235.0 170.0L241.9 172.9" stroke="#000" stroke-width="1.7" fill="none" stroke-linecap="round" stroke-linejoin="round"/><polygon points="234.9,164.4 239.2,162.5 239.0,153.1 234.6,154.9" fill="#dedede" stroke="#dedede" stroke-width="0.4"/><path d="M239.2 162.5L239.0 153.1M234.6 154.9L234.9 164.4M237.0 163.4L236.8 154.0" stroke="#000" stroke-width="1.45" fill="none" stroke-linecap="round" stroke-linejoin="round"/><polygon points="234.9,164.4 231.8,163.1 231.5,153.7 234.6,154.9" fill="#8c8c8c" stroke="#8c8c8c" stroke-width="0.4"/><path d="M231.8 163.1L231.5 153.7M234.6 154.9L234.9 164.4M233.3 163.7L233.0 154.3" stroke="#000" stroke-width="1.45" fill="none" stroke-linecap="round" stroke-linejoin="round"/><polygon points="227.1,177.3 231.6,175.3 231.2,165.9 226.8,167.9" fill="#dedede" stroke="#dedede" stroke-width="0.4"/><path d="M231.6 175.3L231.2 165.9M226.8 167.9L227.1 177.3M229.4 176.3L229.0 166.9" stroke="#000" stroke-width="1.45" fill="none" stroke-linecap="round" stroke-linejoin="round"/><polygon points="227.1,177.3 224.1,175.9 223.7,166.6 226.8,167.9" fill="#8c8c8c" stroke="#8c8c8c" stroke-width="0.4"/><path d="M224.1 175.9L223.7 166.6M226.8 167.9L227.1 177.3M225.6 176.6L225.2 167.2" stroke="#000" stroke-width="1.45" fill="none" stroke-linecap="round" stroke-linejoin="round"/><polygon points="234.6,154.9 239.0,153.1 238.7,143.5 234.3,145.3" fill="#dedede" stroke="#dedede" stroke-width="0.4"/><path d="M239.0 153.1L238.7 143.5M234.3 145.3L234.6 154.9M236.8 154.0L236.5 144.4" stroke="#000" stroke-width="1.45" fill="none" stroke-linecap="round" stroke-linejoin="round"/><polygon points="234.6,154.9 231.5,153.7 231.2,144.1 234.3,145.3" fill="#8c8c8c" stroke="#8c8c8c" stroke-width="0.4"/><path d="M231.5 153.7L231.2 144.1M234.3 145.3L234.6 154.9M233.0 154.3L232.7 144.7" stroke="#000" stroke-width="1.45" fill="none" stroke-linecap="round" stroke-linejoin="round"/><polygon points="249.0,175.9 253.3,173.8 246.3,170.9 241.9,172.9" fill="#c4c4c4" stroke="#c4c4c4" stroke-width="0.4"/><path d="M253.3 173.8L246.3 170.9M241.9 172.9L249.0 175.9" stroke="#000" stroke-width="1.7" fill="none" stroke-linecap="round" stroke-linejoin="round"/><polygon points="233.9,176.5 238.3,174.5 231.4,171.6 227.0,173.5" fill="#c4c4c4" stroke="#c4c4c4" stroke-width="0.4"/><path d="M238.3 174.5L231.4 171.6M227.0 173.5L233.9 176.5" stroke="#000" stroke-width="1.7" fill="none" stroke-linecap="round" stroke-linejoin="round"/><polygon points="249.1,179.6 242.0,176.6 241.9,172.9 249.0,175.9" fill="#8c8c8c" stroke="#8c8c8c" stroke-width="0.4"/><path d="M249.1 179.6L242.0 176.6M241.9 172.9L249.0 175.9" stroke="#000" stroke-width="1.7" fill="none" stroke-linecap="round" stroke-linejoin="round"/><polygon points="234.0,180.3 227.1,177.3 227.0,173.5 233.9,176.5" fill="#8c8c8c" stroke="#8c8c8c" stroke-width="0.4"/><path d="M234.0 180.3L227.1 177.3M227.0 173.5L233.9 176.5" stroke="#000" stroke-width="1.7" fill="none" stroke-linecap="round" stroke-linejoin="round"/><polygon points="226.8,167.9 231.2,165.9 230.9,156.4 226.4,158.3" fill="#dedede" stroke="#dedede" stroke-width="0.4"/><path d="M231.2 165.9L230.9 156.4M226.4 158.3L226.8 167.9M229.0 166.9L228.7 157.4" stroke="#000" stroke-width="1.45" fill="none" stroke-linecap="round" stroke-linejoin="round"/><polygon points="226.8,167.9 223.7,166.6 223.3,157.1 226.4,158.3" fill="#8c8c8c" stroke="#8c8c8c" stroke-width="0.4"/><path d="M223.7 166.6L223.3 157.1M226.4 158.3L226.8 167.9M225.2 167.2L224.9 157.7" stroke="#000" stroke-width="1.45" fill="none" stroke-linecap="round" stroke-linejoin="round"/><polygon points="234.3,145.3 238.7,143.5 238.4,133.9 234.0,135.6" fill="#dedede" stroke="#dedede" stroke-width="0.4"/><path d="M238.7 143.5L238.4 133.9M234.0 135.6L234.3 145.3M236.5 144.4L236.2 134.8" stroke="#000" stroke-width="1.45" fill="none" stroke-linecap="round" stroke-linejoin="round"/><polygon points="234.3,145.3 231.2,144.1 230.9,134.5 234.0,135.6" fill="#8c8c8c" stroke="#8c8c8c" stroke-width="0.4"/><path d="M231.2 144.1L230.9 134.5M234.0 135.6L234.3 145.3M232.7 144.7L232.4 135.1" stroke="#000" stroke-width="1.45" fill="none" stroke-linecap="round" stroke-linejoin="round"/><polygon points="256.2,178.9 260.5,176.8 253.3,173.8 249.0,175.9" fill="#c4c4c4" stroke="#c4c4c4" stroke-width="0.4"/><path d="M260.5 176.8L253.3 173.8M249.0 175.9L256.2 178.9" stroke="#000" stroke-width="1.7" fill="none" stroke-linecap="round" stroke-linejoin="round"/><polygon points="226.4,158.3 230.9,156.4 230.6,146.8 226.1,148.7" fill="#dedede" stroke="#dedede" stroke-width="0.4"/><path d="M230.9 156.4L230.6 146.8M226.1 148.7L226.4 158.3M228.7 157.4L228.3 147.7" stroke="#000" stroke-width="1.45" fill="none" stroke-linecap="round" stroke-linejoin="round"/><polygon points="226.4,158.3 223.3,157.1 223.0,147.4 226.1,148.7" fill="#8c8c8c" stroke="#8c8c8c" stroke-width="0.4"/><path d="M223.3 157.1L223.0 147.4M226.1 148.7L226.4 158.3M224.9 157.7L224.5 148.1" stroke="#000" stroke-width="1.45" fill="none" stroke-linecap="round" stroke-linejoin="round"/><polygon points="241.0,179.6 245.4,177.5 238.3,174.5 233.9,176.5" fill="#c4c4c4" stroke="#c4c4c4" stroke-width="0.4"/><path d="M245.4 177.5L238.3 174.5M233.9 176.5L241.0 179.6" stroke="#000" stroke-width="1.7" fill="none" stroke-linecap="round" stroke-linejoin="round"/><polygon points="256.2,182.7 249.1,179.6 249.0,175.9 256.2,178.9" fill="#8c8c8c" stroke="#8c8c8c" stroke-width="0.4"/><path d="M256.2 182.7L249.1 179.6M249.0 175.9L256.2 178.9" stroke="#000" stroke-width="1.7" fill="none" stroke-linecap="round" stroke-linejoin="round"/><polygon points="234.0,135.6 238.4,133.9 238.2,124.1 233.7,125.8" fill="#dedede" stroke="#dedede" stroke-width="0.4"/><path d="M238.4 133.9L238.2 124.1M233.7 125.8L234.0 135.6M236.2 134.8L235.9 125.0" stroke="#000" stroke-width="1.45" fill="none" stroke-linecap="round" stroke-linejoin="round"/><polygon points="241.1,183.4 234.0,180.3 233.9,176.5 241.0,179.6" fill="#8c8c8c" stroke="#8c8c8c" stroke-width="0.4"/><path d="M241.1 183.4L234.0 180.3M233.9 176.5L241.0 179.6" stroke="#000" stroke-width="1.7" fill="none" stroke-linecap="round" stroke-linejoin="round"/><polygon points="234.0,135.6 230.9,134.5 230.5,124.7 233.7,125.8" fill="#8c8c8c" stroke="#8c8c8c" stroke-width="0.4"/><path d="M230.9 134.5L230.5 124.7M233.7 125.8L234.0 135.6M232.4 135.1L232.1 125.2" stroke="#000" stroke-width="1.45" fill="none" stroke-linecap="round" stroke-linejoin="round"/><polygon points="260.3,47.0 270.1,44.4 267.0,43.7 257.2,46.3" fill="#1a1a1a" stroke="#1a1a1a" stroke-width="0.4"/><path d="M260.3 47.0L270.1 44.4M267.0 43.7L257.2 46.3" stroke="#000" stroke-width="1.8" fill="none" stroke-linecap="round" stroke-linejoin="round"/><polygon points="260.3,52.7 270.1,50.0 270.1,44.4 260.3,47.0" fill="#fafafa" stroke="#fafafa" stroke-width="0.4"/><path d="M260.3 52.7L270.1 50.0M270.1 44.4L260.3 47.0" stroke="#000" stroke-width="1.8" fill="none" stroke-linecap="round" stroke-linejoin="round"/><polygon points="226.1,148.7 230.6,146.8 230.3,137.1 225.7,138.9" fill="#dedede" stroke="#dedede" stroke-width="0.4"/><path d="M230.6 146.8L230.3 137.1M225.7 138.9L226.1 148.7M228.3 147.7L228.0 138.0" stroke="#000" stroke-width="1.45" fill="none" stroke-linecap="round" stroke-linejoin="round"/><polygon points="277.1,47.5 280.0,46.7 270.1,44.4 267.2,45.2" fill="#1a1a1a" stroke="#1a1a1a" stroke-width="0.4"/><path d="M280.0 46.7L270.1 44.4M267.2 45.2L277.1 47.5" stroke="#000" stroke-width="1.8" fill="none" stroke-linecap="round" stroke-linejoin="round"/><polygon points="226.1,148.7 223.0,147.4 222.6,137.7 225.7,138.9" fill="#8c8c8c" stroke="#8c8c8c" stroke-width="0.4"/><path d="M223.0 147.4L222.6 137.7M225.7 138.9L226.1 148.7M224.5 148.1L224.1 138.3" stroke="#000" stroke-width="1.45" fill="none" stroke-linecap="round" stroke-linejoin="round"/><polygon points="233.7,125.8 238.2,124.1 237.9,114.2 233.4,115.8" fill="#dedede" stroke="#dedede" stroke-width="0.4"/><path d="M238.2 124.1L237.9 114.2M233.4 115.8L233.7 125.8M235.9 125.0L235.6 115.0" stroke="#000" stroke-width="1.45" fill="none" stroke-linecap="round" stroke-linejoin="round"/><polygon points="277.1,53.1 267.2,50.8 267.2,45.2 277.1,47.5" fill="#d8d8d8" stroke="#d8d8d8" stroke-width="0.4"/><path d="M277.1 53.1L267.2 50.8M267.2 45.2L277.1 47.5" stroke="#000" stroke-width="1.8" fill="none" stroke-linecap="round" stroke-linejoin="round"/><polygon points="233.7,125.8 230.5,124.7 230.2,114.7 233.4,115.8" fill="#8c8c8c" stroke="#8c8c8c" stroke-width="0.4"/><path d="M230.5 124.7L230.2 114.7M233.4 115.8L233.7 125.8M232.1 125.2L231.8 115.3" stroke="#000" stroke-width="1.45" fill="none" stroke-linecap="round" stroke-linejoin="round"/><polygon points="263.5,182.0 267.9,179.9 260.5,176.8 256.2,178.9" fill="#c4c4c4" stroke="#c4c4c4" stroke-width="0.4"/><path d="M267.9 179.9L260.5 176.8M256.2 178.9L263.5 182.0" stroke="#000" stroke-width="1.7" fill="none" stroke-linecap="round" stroke-linejoin="round"/><polygon points="248.2,182.7 252.6,180.6 245.4,177.5 241.0,179.6" fill="#c4c4c4" stroke="#c4c4c4" stroke-width="0.4"/><path d="M252.6 180.6L245.4 177.5M241.0 179.6L248.2 182.7" stroke="#000" stroke-width="1.7" fill="none" stroke-linecap="round" stroke-linejoin="round"/><polygon points="263.6,185.8 256.2,182.7 256.2,178.9 263.5,182.0" fill="#8c8c8c" stroke="#8c8c8c" stroke-width="0.4"/><path d="M263.6 185.8L256.2 182.7M256.2 178.9L263.5 182.0" stroke="#000" stroke-width="1.7" fill="none" stroke-linecap="round" stroke-linejoin="round"/><polygon points="248.2,186.5 241.1,183.4 241.0,179.6 248.2,182.7" fill="#8c8c8c" stroke="#8c8c8c" stroke-width="0.4"/><path d="M248.2 186.5L241.1 183.4M241.0 179.6L248.2 182.7" stroke="#000" stroke-width="1.7" fill="none" stroke-linecap="round" stroke-linejoin="round"/><polygon points="225.7,138.9 230.3,137.1 229.9,127.2 225.3,128.9" fill="#dedede" stroke="#dedede" stroke-width="0.4"/><path d="M230.3 137.1L229.9 127.2M225.3 128.9L225.7 138.9M228.0 138.0L227.7 128.1" stroke="#000" stroke-width="1.45" fill="none" stroke-linecap="round" stroke-linejoin="round"/><polygon points="225.7,138.9 222.6,137.7 222.2,127.8 225.3,128.9" fill="#8c8c8c" stroke="#8c8c8c" stroke-width="0.4"/><path d="M222.6 137.7L222.2 127.8M225.3 128.9L225.7 138.9M224.1 138.3L223.8 128.4" stroke="#000" stroke-width="1.45" fill="none" stroke-linecap="round" stroke-linejoin="round"/><polygon points="233.4,115.8 237.9,114.2 237.6,104.1 233.0,105.7" fill="#dedede" stroke="#dedede" stroke-width="0.4"/><path d="M237.9 114.2L237.6 104.1M233.0 105.7L233.4 115.8M235.6 115.0L235.3 104.9" stroke="#000" stroke-width="1.45" fill="none" stroke-linecap="round" stroke-linejoin="round"/><polygon points="233.4,115.8 230.2,114.7 229.9,104.7 233.0,105.7" fill="#8c8c8c" stroke="#8c8c8c" stroke-width="0.4"/><path d="M230.2 114.7L229.9 104.7M233.0 105.7L233.4 115.8M231.8 115.3L231.5 105.2" stroke="#000" stroke-width="1.45" fill="none" stroke-linecap="round" stroke-linejoin="round"/><polygon points="250.1,49.8 260.3,47.0 257.2,46.3 247.0,49.0" fill="#1a1a1a" stroke="#1a1a1a" stroke-width="0.4"/><path d="M250.1 49.8L260.3 47.0M257.2 46.3L247.0 49.0" stroke="#000" stroke-width="1.8" fill="none" stroke-linecap="round" stroke-linejoin="round"/><polygon points="225.3,128.9 229.9,127.2 229.6,117.2 225.0,118.8" fill="#dedede" stroke="#dedede" stroke-width="0.4"/><path d="M229.9 127.2L229.6 117.2M225.0 118.8L225.3 128.9M227.7 128.1L227.3 118.0" stroke="#000" stroke-width="1.45" fill="none" stroke-linecap="round" stroke-linejoin="round"/><polygon points="233.0,105.7 237.6,104.1 237.3,93.9 232.7,95.4" fill="#dedede" stroke="#dedede" stroke-width="0.4"/><path d="M237.6 104.1L237.3 93.9M232.7 95.4L233.0 105.7M235.3 104.9L235.0 94.7" stroke="#000" stroke-width="1.45" fill="none" stroke-linecap="round" stroke-linejoin="round"/><polygon points="250.2,55.5 260.3,52.7 260.3,47.0 250.1,49.8" fill="#fafafa" stroke="#fafafa" stroke-width="0.4"/><path d="M250.2 55.5L260.3 52.7M260.3 47.0L250.1 49.8" stroke="#000" stroke-width="1.8" fill="none" stroke-linecap="round" stroke-linejoin="round"/><polygon points="271.0,185.2 275.4,183.0 267.9,179.9 263.5,182.0" fill="#c4c4c4" stroke="#c4c4c4" stroke-width="0.4"/><path d="M275.4 183.0L267.9 179.9M263.5 182.0L271.0 185.2" stroke="#000" stroke-width="1.7" fill="none" stroke-linecap="round" stroke-linejoin="round"/><polygon points="225.3,128.9 222.2,127.8 221.8,117.7 225.0,118.8" fill="#8c8c8c" stroke="#8c8c8c" stroke-width="0.4"/><path d="M222.2 127.8L221.8 117.7M225.0 118.8L225.3 128.9M223.8 128.4L223.4 118.3" stroke="#000" stroke-width="1.45" fill="none" stroke-linecap="round" stroke-linejoin="round"/><polygon points="233.0,105.7 229.9,104.7 229.5,94.4 232.7,95.4" fill="#8c8c8c" stroke="#8c8c8c" stroke-width="0.4"/><path d="M229.9 104.7L229.5 94.4M232.7 95.4L233.0 105.7M231.5 105.2L231.1 94.9" stroke="#000" stroke-width="1.45" fill="none" stroke-linecap="round" stroke-linejoin="round"/><polygon points="287.2,49.8 290.1,49.0 280.0,46.7 277.1,47.5" fill="#1a1a1a" stroke="#1a1a1a" stroke-width="0.4"/><path d="M290.1 49.0L280.0 46.7M277.1 47.5L287.2 49.8" stroke="#000" stroke-width="1.8" fill="none" stroke-linecap="round" stroke-linejoin="round"/><polygon points="255.5,185.9 260.0,183.7 252.6,180.6 248.2,182.7" fill="#c4c4c4" stroke="#c4c4c4" stroke-width="0.4"/><path d="M260.0 183.7L252.6 180.6M248.2 182.7L255.5 185.9" stroke="#000" stroke-width="1.7" fill="none" stroke-linecap="round" stroke-linejoin="round"/><polygon points="271.1,189.0 263.6,185.8 263.5,182.0 271.0,185.2" fill="#8c8c8c" stroke="#8c8c8c" stroke-width="0.4"/><path d="M271.1 189.0L263.6 185.8M263.5 182.0L271.0 185.2" stroke="#000" stroke-width="1.7" fill="none" stroke-linecap="round" stroke-linejoin="round"/><polygon points="287.2,55.5 277.1,53.1 277.1,47.5 287.2,49.8" fill="#d8d8d8" stroke="#d8d8d8" stroke-width="0.4"/><path d="M287.2 55.5L277.1 53.1M277.1 47.5L287.2 49.8" stroke="#000" stroke-width="1.8" fill="none" stroke-linecap="round" stroke-linejoin="round"/><polygon points="255.6,189.7 248.2,186.5 248.2,182.7 255.5,185.9" fill="#8c8c8c" stroke="#8c8c8c" stroke-width="0.4"/><path d="M255.6 189.7L248.2 186.5M248.2 182.7L255.5 185.9" stroke="#000" stroke-width="1.7" fill="none" stroke-linecap="round" stroke-linejoin="round"/><polygon points="232.7,95.4 237.3,93.9 237.0,83.6 232.4,85.0" fill="#dedede" stroke="#dedede" stroke-width="0.4"/><path d="M237.3 93.9L237.0 83.6M232.4 85.0L232.7 95.4M235.0 94.7L234.7 84.3" stroke="#000" stroke-width="1.45" fill="none" stroke-linecap="round" stroke-linejoin="round"/><polygon points="225.0,118.8 229.6,117.2 229.3,107.0 224.6,108.6" fill="#dedede" stroke="#dedede" stroke-width="0.4"/><path d="M229.6 117.2L229.3 107.0M224.6 108.6L225.0 118.8M227.3 118.0L226.9 107.8" stroke="#000" stroke-width="1.45" fill="none" stroke-linecap="round" stroke-linejoin="round"/><polygon points="232.7,95.4 229.5,94.4 229.2,84.1 232.4,85.0" fill="#8c8c8c" stroke="#8c8c8c" stroke-width="0.4"/><path d="M229.5 94.4L229.2 84.1M232.4 85.0L232.7 95.4M231.1 94.9L230.8 84.6" stroke="#000" stroke-width="1.45" fill="none" stroke-linecap="round" stroke-linejoin="round"/><polygon points="225.0,118.8 221.8,117.7 221.4,107.5 224.6,108.6" fill="#8c8c8c" stroke="#8c8c8c" stroke-width="0.4"/><path d="M221.8 117.7L221.4 107.5M224.6 108.6L225.0 118.8M223.4 118.3L223.0 108.1" stroke="#000" stroke-width="1.45" fill="none" stroke-linecap="round" stroke-linejoin="round"/><polygon points="278.7,188.4 283.0,186.2 275.4,183.0 271.0,185.2" fill="#c4c4c4" stroke="#c4c4c4" stroke-width="0.4"/><path d="M283.0 186.2L275.4 183.0M271.0 185.2L278.7 188.4" stroke="#000" stroke-width="1.7" fill="none" stroke-linecap="round" stroke-linejoin="round"/><polygon points="232.4,85.0 237.0,83.6 236.7,73.1 232.1,74.5" fill="#dedede" stroke="#dedede" stroke-width="0.4"/><path d="M237.0 83.6L236.7 73.1M232.1 74.5L232.4 85.0M234.7 84.3L234.4 73.8" stroke="#000" stroke-width="1.45" fill="none" stroke-linecap="round" stroke-linejoin="round"/><polygon points="232.4,85.0 229.2,84.1 228.8,73.6 232.1,74.5" fill="#8c8c8c" stroke="#8c8c8c" stroke-width="0.4"/><path d="M229.2 84.1L228.8 73.6M232.1 74.5L232.4 85.0M230.8 84.6L230.5 74.0" stroke="#000" stroke-width="1.45" fill="none" stroke-linecap="round" stroke-linejoin="round"/><polygon points="224.6,108.6 229.3,107.0 228.9,96.7 224.2,98.2" fill="#dedede" stroke="#dedede" stroke-width="0.4"/><path d="M229.3 107.0L228.9 96.7M224.2 98.2L224.6 108.6M226.9 107.8L226.6 97.5" stroke="#000" stroke-width="1.45" fill="none" stroke-linecap="round" stroke-linejoin="round"/><polygon points="278.7,192.3 271.1,189.0 271.0,185.2 278.7,188.4" fill="#8c8c8c" stroke="#8c8c8c" stroke-width="0.4"/><path d="M278.7 192.3L271.1 189.0M271.0 185.2L278.7 188.4" stroke="#000" stroke-width="1.7" fill="none" stroke-linecap="round" stroke-linejoin="round"/><polygon points="263.0,189.1 267.5,186.9 260.0,183.7 255.5,185.9" fill="#c4c4c4" stroke="#c4c4c4" stroke-width="0.4"/><path d="M267.5 186.9L260.0 183.7M255.5 185.9L263.0 189.1" stroke="#000" stroke-width="1.7" fill="none" stroke-linecap="round" stroke-linejoin="round"/><polygon points="224.6,108.6 221.4,107.5 221.0,97.2 224.2,98.2" fill="#8c8c8c" stroke="#8c8c8c" stroke-width="0.4"/><path d="M221.4 107.5L221.0 97.2M224.2 98.2L224.6 108.6M223.0 108.1L222.6 97.7" stroke="#000" stroke-width="1.45" fill="none" stroke-linecap="round" stroke-linejoin="round"/><polygon points="263.1,193.0 255.6,189.7 255.5,185.9 263.0,189.1" fill="#8c8c8c" stroke="#8c8c8c" stroke-width="0.4"/><path d="M263.1 193.0L255.6 189.7M255.5 185.9L263.0 189.1" stroke="#000" stroke-width="1.7" fill="none" stroke-linecap="round" stroke-linejoin="round"/><polygon points="239.6,52.6 250.1,49.8 247.0,49.0 236.5,51.8" fill="#1a1a1a" stroke="#1a1a1a" stroke-width="0.4"/><path d="M239.6 52.6L250.1 49.8M247.0 49.0L236.5 51.8" stroke="#000" stroke-width="1.8" fill="none" stroke-linecap="round" stroke-linejoin="round"/><polygon points="297.6,52.2 300.5,51.4 290.1,49.0 287.2,49.8" fill="#1a1a1a" stroke="#1a1a1a" stroke-width="0.4"/><path d="M300.5 51.4L290.1 49.0M287.2 49.8L297.6 52.2" stroke="#000" stroke-width="1.8" fill="none" stroke-linecap="round" stroke-linejoin="round"/><polygon points="232.1,74.5 236.7,73.1 236.5,62.4 231.8,63.8" fill="#dedede" stroke="#dedede" stroke-width="0.4"/><path d="M236.7 73.1L236.5 62.4M231.8 63.8L232.1 74.5M234.4 73.8L234.1 63.1" stroke="#000" stroke-width="1.45" fill="none" stroke-linecap="round" stroke-linejoin="round"/><polygon points="239.7,58.4 250.2,55.5 250.1,49.8 239.6,52.6" fill="#fafafa" stroke="#fafafa" stroke-width="0.4"/><path d="M239.7 58.4L250.2 55.5M250.1 49.8L239.6 52.6" stroke="#000" stroke-width="1.8" fill="none" stroke-linecap="round" stroke-linejoin="round"/><polygon points="297.5,58.0 287.2,55.5 287.2,49.8 297.6,52.2" fill="#d8d8d8" stroke="#d8d8d8" stroke-width="0.4"/><path d="M297.5 58.0L287.2 55.5M287.2 49.8L297.6 52.2" stroke="#000" stroke-width="1.8" fill="none" stroke-linecap="round" stroke-linejoin="round"/><polygon points="232.1,74.5 228.8,73.6 228.5,62.9 231.8,63.8" fill="#8c8c8c" stroke="#8c8c8c" stroke-width="0.4"/><path d="M228.8 73.6L228.5 62.9M231.8 63.8L232.1 74.5M230.5 74.0L230.1 63.3" stroke="#000" stroke-width="1.45" fill="none" stroke-linecap="round" stroke-linejoin="round"/><polygon points="224.2,98.2 228.9,96.7 228.6,86.2 223.8,87.7" fill="#dedede" stroke="#dedede" stroke-width="0.4"/><path d="M228.9 96.7L228.6 86.2M223.8 87.7L224.2 98.2M226.6 97.5L226.2 87.0" stroke="#000" stroke-width="1.45" fill="none" stroke-linecap="round" stroke-linejoin="round"/><polygon points="224.2,98.2 221.0,97.2 220.6,86.7 223.8,87.7" fill="#8c8c8c" stroke="#8c8c8c" stroke-width="0.4"/><path d="M221.0 97.2L220.6 86.7M223.8 87.7L224.2 98.2M222.6 97.7L222.2 87.2" stroke="#000" stroke-width="1.45" fill="none" stroke-linecap="round" stroke-linejoin="round"/><polygon points="286.5,191.7 290.8,189.5 283.0,186.2 278.7,188.4" fill="#c4c4c4" stroke="#c4c4c4" stroke-width="0.4"/><path d="M290.8 189.5L283.0 186.2M278.7 188.4L286.5 191.7" stroke="#000" stroke-width="1.7" fill="none" stroke-linecap="round" stroke-linejoin="round"/><polygon points="231.4,52.9 236.2,51.6 232.9,50.8 228.1,52.1" fill="#c4c4c4" stroke="#c4c4c4" stroke-width="0.4"/><path d="M231.4 52.9L236.2 51.6L232.9 50.8L228.1 52.1Z" stroke="#000" stroke-width="1.45" fill="none" stroke-linecap="round" stroke-linejoin="round"/><polygon points="231.8,63.8 236.5,62.4 236.2,51.6 231.4,52.9" fill="#dedede" stroke="#dedede" stroke-width="0.4"/><path d="M236.5 62.4L236.2 51.6M231.4 52.9L231.8 63.8M234.1 63.1L233.8 52.3" stroke="#000" stroke-width="1.45" fill="none" stroke-linecap="round" stroke-linejoin="round"/><polygon points="231.8,63.8 228.5,62.9 228.1,52.1 231.4,52.9" fill="#8c8c8c" stroke="#8c8c8c" stroke-width="0.4"/><path d="M228.5 62.9L228.1 52.1M231.4 52.9L231.8 63.8M230.1 63.3L229.8 52.5" stroke="#000" stroke-width="1.45" fill="none" stroke-linecap="round" stroke-linejoin="round"/><polygon points="286.5,195.6 278.7,192.3 278.7,188.4 286.5,191.7" fill="#8c8c8c" stroke="#8c8c8c" stroke-width="0.4"/><path d="M286.5 195.6L278.7 192.3M278.7 188.4L286.5 191.7" stroke="#000" stroke-width="1.7" fill="none" stroke-linecap="round" stroke-linejoin="round"/><polygon points="270.7,192.4 275.1,190.2 267.5,186.9 263.0,189.1" fill="#c4c4c4" stroke="#c4c4c4" stroke-width="0.4"/><path d="M275.1 190.2L267.5 186.9M263.0 189.1L270.7 192.4" stroke="#000" stroke-width="1.7" fill="none" stroke-linecap="round" stroke-linejoin="round"/><polygon points="223.8,87.7 228.6,86.2 228.2,75.6 223.4,77.0" fill="#dedede" stroke="#dedede" stroke-width="0.4"/><path d="M228.6 86.2L228.2 75.6M223.4 77.0L223.8 87.7M226.2 87.0L225.8 76.3" stroke="#000" stroke-width="1.45" fill="none" stroke-linecap="round" stroke-linejoin="round"/><polygon points="223.8,87.7 220.6,86.7 220.2,76.1 223.4,77.0" fill="#8c8c8c" stroke="#8c8c8c" stroke-width="0.4"/><path d="M220.6 86.7L220.2 76.1M223.4 77.0L223.8 87.7M222.2 87.2L221.8 76.6" stroke="#000" stroke-width="1.45" fill="none" stroke-linecap="round" stroke-linejoin="round"/><polygon points="270.7,196.4 263.1,193.0 263.0,189.1 270.7,192.4" fill="#8c8c8c" stroke="#8c8c8c" stroke-width="0.4"/><path d="M270.7 196.4L263.1 193.0M263.0 189.1L270.7 192.4" stroke="#000" stroke-width="1.7" fill="none" stroke-linecap="round" stroke-linejoin="round"/><polygon points="223.4,77.0 228.2,75.6 227.9,64.9 223.0,66.2" fill="#dedede" stroke="#dedede" stroke-width="0.4"/><path d="M228.2 75.6L227.9 64.9M223.0 66.2L223.4 77.0M225.8 76.3L225.5 65.5" stroke="#000" stroke-width="1.45" fill="none" stroke-linecap="round" stroke-linejoin="round"/><polygon points="308.3,54.7 311.2,53.8 300.5,51.4 297.6,52.2" fill="#1a1a1a" stroke="#1a1a1a" stroke-width="0.4"/><path d="M311.2 53.8L300.5 51.4M297.6 52.2L308.3 54.7" stroke="#000" stroke-width="1.8" fill="none" stroke-linecap="round" stroke-linejoin="round"/><polygon points="223.4,77.0 220.2,76.1 219.8,65.3 223.0,66.2" fill="#8c8c8c" stroke="#8c8c8c" stroke-width="0.4"/><path d="M220.2 76.1L219.8 65.3M223.0 66.2L223.4 77.0M221.8 76.6L221.4 65.8" stroke="#000" stroke-width="1.45" fill="none" stroke-linecap="round" stroke-linejoin="round"/><polygon points="294.5,195.1 298.8,192.8 290.8,189.5 286.5,191.7" fill="#c4c4c4" stroke="#c4c4c4" stroke-width="0.4"/><path d="M298.8 192.8L290.8 189.5M286.5 191.7L294.5 195.1" stroke="#000" stroke-width="1.7" fill="none" stroke-linecap="round" stroke-linejoin="round"/><polygon points="308.2,60.5 297.5,58.0 297.6,52.2 308.3,54.7" fill="#d8d8d8" stroke="#d8d8d8" stroke-width="0.4"/><path d="M308.2 60.5L297.5 58.0M297.6 52.2L308.3 54.7" stroke="#000" stroke-width="1.8" fill="none" stroke-linecap="round" stroke-linejoin="round"/><polygon points="228.7,55.4 239.6,52.6 236.5,51.8 225.6,54.6" fill="#1a1a1a" stroke="#1a1a1a" stroke-width="0.4"/><path d="M228.7 55.4L239.6 52.6M236.5 51.8L225.6 54.6" stroke="#000" stroke-width="1.8" fill="none" stroke-linecap="round" stroke-linejoin="round"/><polygon points="228.9,61.3 239.7,58.4 239.6,52.6 228.7,55.4" fill="#fafafa" stroke="#fafafa" stroke-width="0.4"/><path d="M228.9 61.3L239.7 58.4M239.6 52.6L228.7 55.4" stroke="#000" stroke-width="1.8" fill="none" stroke-linecap="round" stroke-linejoin="round"/><polygon points="294.5,199.0 286.5,195.6 286.5,191.7 294.5,195.1" fill="#8c8c8c" stroke="#8c8c8c" stroke-width="0.4"/><path d="M294.5 199.0L286.5 195.6M286.5 191.7L294.5 195.1" stroke="#000" stroke-width="1.7" fill="none" stroke-linecap="round" stroke-linejoin="round"/><polygon points="278.5,195.8 283.0,193.6 275.1,190.2 270.7,192.4" fill="#c4c4c4" stroke="#c4c4c4" stroke-width="0.4"/><path d="M283.0 193.6L275.1 190.2M270.7 192.4L278.5 195.8" stroke="#000" stroke-width="1.7" fill="none" stroke-linecap="round" stroke-linejoin="round"/><polygon points="222.6,55.2 227.5,53.9 224.2,53.1 219.3,54.4" fill="#c4c4c4" stroke="#c4c4c4" stroke-width="0.4"/><path d="M222.6 55.2L227.5 53.9L224.2 53.1L219.3 54.4Z" stroke="#000" stroke-width="1.45" fill="none" stroke-linecap="round" stroke-linejoin="round"/><polygon points="223.0,66.2 227.9,64.9 227.5,53.9 222.6,55.2" fill="#dedede" stroke="#dedede" stroke-width="0.4"/><path d="M227.9 64.9L227.5 53.9M222.6 55.2L223.0 66.2M225.5 65.5L225.1 54.6" stroke="#000" stroke-width="1.45" fill="none" stroke-linecap="round" stroke-linejoin="round"/><polygon points="223.0,66.2 219.8,65.3 219.3,54.4 222.6,55.2" fill="#8c8c8c" stroke="#8c8c8c" stroke-width="0.4"/><path d="M219.8 65.3L219.3 54.4M222.6 55.2L223.0 66.2M221.4 65.8L221.0 54.8" stroke="#000" stroke-width="1.45" fill="none" stroke-linecap="round" stroke-linejoin="round"/><polygon points="278.5,199.8 270.7,196.4 270.7,192.4 278.5,195.8" fill="#8c8c8c" stroke="#8c8c8c" stroke-width="0.4"/><path d="M278.5 199.8L270.7 196.4M270.7 192.4L278.5 195.8" stroke="#000" stroke-width="1.7" fill="none" stroke-linecap="round" stroke-linejoin="round"/><polygon points="302.7,198.5 306.9,196.2 298.8,192.8 294.5,195.1" fill="#c4c4c4" stroke="#c4c4c4" stroke-width="0.4"/><path d="M306.9 196.2L298.8 192.8M294.5 195.1L302.7 198.5" stroke="#000" stroke-width="1.7" fill="none" stroke-linecap="round" stroke-linejoin="round"/><polygon points="302.6,202.5 294.5,199.0 294.5,195.1 302.7,198.5" fill="#8c8c8c" stroke="#8c8c8c" stroke-width="0.4"/><path d="M302.6 202.5L294.5 199.0M294.5 195.1L302.7 198.5" stroke="#000" stroke-width="1.7" fill="none" stroke-linecap="round" stroke-linejoin="round"/><polygon points="319.4,57.2 322.3,56.3 311.2,53.8 308.3,54.7" fill="#1a1a1a" stroke="#1a1a1a" stroke-width="0.4"/><path d="M322.3 56.3L311.2 53.8M308.3 54.7L319.4 57.2" stroke="#000" stroke-width="1.8" fill="none" stroke-linecap="round" stroke-linejoin="round"/><polygon points="286.6,199.3 291.0,197.0 283.0,193.6 278.5,195.8" fill="#c4c4c4" stroke="#c4c4c4" stroke-width="0.4"/><path d="M291.0 197.0L283.0 193.6M278.5 195.8L286.6 199.3" stroke="#000" stroke-width="1.7" fill="none" stroke-linecap="round" stroke-linejoin="round"/><polygon points="160.0,207.5 157.0,205.9 156.1,195.8 159.2,197.3" fill="#8c8c8c" stroke="#8c8c8c" stroke-width="0.4"/><path d="M157.0 205.9L156.1 195.8M159.2 197.3L160.0 207.5M158.5 206.7L157.6 196.5" stroke="#000" stroke-width="1.45" fill="none" stroke-linecap="round" stroke-linejoin="round"/><polygon points="160.0,207.5 165.4,205.0 164.6,195.0 159.2,197.3" fill="#dedede" stroke="#dedede" stroke-width="0.4"/><path d="M165.4 205.0L164.6 195.0M159.2 197.3L160.0 207.5M162.7 206.3L161.9 196.1" stroke="#000" stroke-width="1.45" fill="none" stroke-linecap="round" stroke-linejoin="round"/><polygon points="319.2,63.1 308.2,60.5 308.3,54.7 319.4,57.2" fill="#d8d8d8" stroke="#d8d8d8" stroke-width="0.4"/><path d="M319.2 63.1L308.2 60.5M308.3 54.7L319.4 57.2" stroke="#000" stroke-width="1.8" fill="none" stroke-linecap="round" stroke-linejoin="round"/><polygon points="286.5,203.3 278.5,199.8 278.5,195.8 286.6,199.3" fill="#8c8c8c" stroke="#8c8c8c" stroke-width="0.4"/><path d="M286.5 203.3L278.5 199.8M278.5 195.8L286.6 199.3" stroke="#000" stroke-width="1.7" fill="none" stroke-linecap="round" stroke-linejoin="round"/><polygon points="217.5,58.4 228.7,55.4 225.6,54.6 214.4,57.6" fill="#1a1a1a" stroke="#1a1a1a" stroke-width="0.4"/><path d="M217.5 58.4L228.7 55.4M225.6 54.6L214.4 57.6" stroke="#000" stroke-width="1.8" fill="none" stroke-linecap="round" stroke-linejoin="round"/><polygon points="217.7,64.4 228.9,61.3 228.7,55.4 217.5,58.4" fill="#fafafa" stroke="#fafafa" stroke-width="0.4"/><path d="M217.7 64.4L228.9 61.3M228.7 55.4L217.5 58.4" stroke="#000" stroke-width="1.8" fill="none" stroke-linecap="round" stroke-linejoin="round"/><polygon points="166.6,207.1 172.0,204.6 165.1,201.0 159.7,203.4" fill="#c4c4c4" stroke="#c4c4c4" stroke-width="0.4"/><path d="M172.0 204.6L165.1 201.0M159.7 203.4L166.6 207.1" stroke="#000" stroke-width="1.7" fill="none" stroke-linecap="round" stroke-linejoin="round"/><polygon points="311.0,202.1 315.3,199.7 306.9,196.2 302.7,198.5" fill="#c4c4c4" stroke="#c4c4c4" stroke-width="0.4"/><path d="M315.3 199.7L306.9 196.2M302.7 198.5L311.0 202.1" stroke="#000" stroke-width="1.7" fill="none" stroke-linecap="round" stroke-linejoin="round"/><polygon points="166.9,211.1 160.0,207.5 159.7,203.4 166.6,207.1" fill="#8c8c8c" stroke="#8c8c8c" stroke-width="0.4"/><path d="M166.9 211.1L160.0 207.5M159.7 203.4L166.6 207.1" stroke="#000" stroke-width="1.7" fill="none" stroke-linecap="round" stroke-linejoin="round"/><polygon points="310.9,206.1 302.6,202.5 302.7,198.5 311.0,202.1" fill="#8c8c8c" stroke="#8c8c8c" stroke-width="0.4"/><path d="M310.9 206.1L302.6 202.5M302.7 198.5L311.0 202.1" stroke="#000" stroke-width="1.7" fill="none" stroke-linecap="round" stroke-linejoin="round"/><polygon points="159.2,197.3 156.1,195.8 155.2,185.5 158.2,187.0" fill="#8c8c8c" stroke="#8c8c8c" stroke-width="0.4"/><path d="M156.1 195.8L155.2 185.5M158.2 187.0L159.2 197.3M157.6 196.5L156.7 186.3" stroke="#000" stroke-width="1.45" fill="none" stroke-linecap="round" stroke-linejoin="round"/><polygon points="159.2,197.3 164.6,195.0 163.7,184.7 158.2,187.0" fill="#dedede" stroke="#dedede" stroke-width="0.4"/><path d="M164.6 195.0L163.7 184.7M158.2 187.0L159.2 197.3M161.9 196.1L161.0 185.9" stroke="#000" stroke-width="1.45" fill="none" stroke-linecap="round" stroke-linejoin="round"/><polygon points="294.7,202.8 299.1,200.5 291.0,197.0 286.6,199.3" fill="#c4c4c4" stroke="#c4c4c4" stroke-width="0.4"/><path d="M299.1 200.5L291.0 197.0M286.6 199.3L294.7 202.8" stroke="#000" stroke-width="1.7" fill="none" stroke-linecap="round" stroke-linejoin="round"/><polygon points="150.1,212.0 147.0,210.3 146.1,200.1 149.1,201.7" fill="#8c8c8c" stroke="#8c8c8c" stroke-width="0.4"/><path d="M147.0 210.3L146.1 200.1M149.1 201.7L150.1 212.0M148.5 211.1L147.6 200.9" stroke="#000" stroke-width="1.45" fill="none" stroke-linecap="round" stroke-linejoin="round"/><polygon points="150.1,212.0 155.6,209.5 154.7,199.3 149.1,201.7" fill="#dedede" stroke="#dedede" stroke-width="0.4"/><path d="M155.6 209.5L154.7 199.3M149.1 201.7L150.1 212.0M152.8 210.7L151.9 200.5" stroke="#000" stroke-width="1.45" fill="none" stroke-linecap="round" stroke-linejoin="round"/><polygon points="294.7,206.9 286.5,203.3 286.6,199.3 294.7,202.8" fill="#8c8c8c" stroke="#8c8c8c" stroke-width="0.4"/><path d="M294.7 206.9L286.5 203.3M286.6 199.3L294.7 202.8" stroke="#000" stroke-width="1.7" fill="none" stroke-linecap="round" stroke-linejoin="round"/><polygon points="330.7,59.8 333.6,58.9 322.3,56.3 319.4,57.2" fill="#1a1a1a" stroke="#1a1a1a" stroke-width="0.4"/><path d="M333.6 58.9L322.3 56.3M319.4 57.2L330.7 59.8" stroke="#000" stroke-width="1.8" fill="none" stroke-linecap="round" stroke-linejoin="round"/><polygon points="330.5,65.8 319.2,63.1 319.4,57.2 330.7,59.8" fill="#d8d8d8" stroke="#d8d8d8" stroke-width="0.4"/><path d="M330.5 65.8L319.2 63.1M319.4 57.2L330.7 59.8" stroke="#000" stroke-width="1.8" fill="none" stroke-linecap="round" stroke-linejoin="round"/><polygon points="156.5,211.6 162.1,209.1 155.2,205.4 149.7,207.9" fill="#c4c4c4" stroke="#c4c4c4" stroke-width="0.4"/><path d="M162.1 209.1L155.2 205.4M149.7 207.9L156.5 211.6" stroke="#000" stroke-width="1.7" fill="none" stroke-linecap="round" stroke-linejoin="round"/><polygon points="319.6,205.7 323.8,203.2 315.3,199.7 311.0,202.1" fill="#c4c4c4" stroke="#c4c4c4" stroke-width="0.4"/><path d="M323.8 203.2L315.3 199.7M311.0 202.1L319.6 205.7" stroke="#000" stroke-width="1.7" fill="none" stroke-linecap="round" stroke-linejoin="round"/><polygon points="156.9,215.7 150.1,212.0 149.7,207.9 156.5,211.6" fill="#8c8c8c" stroke="#8c8c8c" stroke-width="0.4"/><path d="M156.9 215.7L150.1 212.0M149.7 207.9L156.5 211.6" stroke="#000" stroke-width="1.7" fill="none" stroke-linecap="round" stroke-linejoin="round"/><polygon points="158.2,187.0 155.2,185.5 154.3,175.1 157.3,176.6" fill="#8c8c8c" stroke="#8c8c8c" stroke-width="0.4"/><path d="M155.2 185.5L154.3 175.1M157.3 176.6L158.2 187.0M156.7 186.3L155.8 175.8" stroke="#000" stroke-width="1.45" fill="none" stroke-linecap="round" stroke-linejoin="round"/><polygon points="158.2,187.0 163.7,184.7 162.9,174.3 157.3,176.6" fill="#dedede" stroke="#dedede" stroke-width="0.4"/><path d="M163.7 184.7L162.9 174.3M157.3 176.6L158.2 187.0M161.0 185.9L160.1 175.5" stroke="#000" stroke-width="1.45" fill="none" stroke-linecap="round" stroke-linejoin="round"/><polygon points="319.4,209.7 310.9,206.1 311.0,202.1 319.6,205.7" fill="#8c8c8c" stroke="#8c8c8c" stroke-width="0.4"/><path d="M319.4 209.7L310.9 206.1M311.0 202.1L319.6 205.7" stroke="#000" stroke-width="1.7" fill="none" stroke-linecap="round" stroke-linejoin="round"/><polygon points="173.6,210.8 179.0,208.3 172.0,204.6 166.6,207.1" fill="#c4c4c4" stroke="#c4c4c4" stroke-width="0.4"/><path d="M179.0 208.3L172.0 204.6M166.6 207.1L173.6 210.8" stroke="#000" stroke-width="1.7" fill="none" stroke-linecap="round" stroke-linejoin="round"/><polygon points="205.9,61.5 217.5,58.4 214.4,57.6 202.7,60.7" fill="#1a1a1a" stroke="#1a1a1a" stroke-width="0.4"/><path d="M205.9 61.5L217.5 58.4M214.4 57.6L202.7 60.7" stroke="#000" stroke-width="1.8" fill="none" stroke-linecap="round" stroke-linejoin="round"/><polygon points="149.1,201.7 146.1,200.1 145.0,189.7 148.1,191.3" fill="#8c8c8c" stroke="#8c8c8c" stroke-width="0.4"/><path d="M146.1 200.1L145.0 189.7M148.1 191.3L149.1 201.7M147.6 200.9L146.6 190.5" stroke="#000" stroke-width="1.45" fill="none" stroke-linecap="round" stroke-linejoin="round"/><polygon points="149.1,201.7 154.7,199.3 153.7,189.0 148.1,191.3" fill="#dedede" stroke="#dedede" stroke-width="0.4"/><path d="M154.7 199.3L153.7 189.0M148.1 191.3L149.1 201.7M151.9 200.5L150.9 190.1" stroke="#000" stroke-width="1.45" fill="none" stroke-linecap="round" stroke-linejoin="round"/><polygon points="173.9,214.9 166.9,211.1 166.6,207.1 173.6,210.8" fill="#8c8c8c" stroke="#8c8c8c" stroke-width="0.4"/><path d="M173.9 214.9L166.9 211.1M166.6 207.1L173.6 210.8" stroke="#000" stroke-width="1.7" fill="none" stroke-linecap="round" stroke-linejoin="round"/><polygon points="303.1,206.5 307.5,204.0 299.1,200.5 294.7,202.8" fill="#c4c4c4" stroke="#c4c4c4" stroke-width="0.4"/><path d="M307.5 204.0L299.1 200.5M294.7 202.8L303.1 206.5" stroke="#000" stroke-width="1.7" fill="none" stroke-linecap="round" stroke-linejoin="round"/><polygon points="206.2,67.6 217.7,64.4 217.5,58.4 205.9,61.5" fill="#fafafa" stroke="#fafafa" stroke-width="0.4"/><path d="M206.2 67.6L217.7 64.4M217.5 58.4L205.9 61.5" stroke="#000" stroke-width="1.8" fill="none" stroke-linecap="round" stroke-linejoin="round"/><polygon points="303.0,210.5 294.7,206.9 294.7,202.8 303.1,206.5" fill="#8c8c8c" stroke="#8c8c8c" stroke-width="0.4"/><path d="M303.0 210.5L294.7 206.9M294.7 202.8L303.1 206.5" stroke="#000" stroke-width="1.7" fill="none" stroke-linecap="round" stroke-linejoin="round"/><polygon points="157.3,176.6 154.3,175.1 153.3,164.5 156.4,166.0" fill="#8c8c8c" stroke="#8c8c8c" stroke-width="0.4"/><path d="M154.3 175.1L153.3 164.5M156.4 166.0L157.3 176.6M155.8 175.8L154.9 165.2" stroke="#000" stroke-width="1.45" fill="none" stroke-linecap="round" stroke-linejoin="round"/><polygon points="157.3,176.6 162.9,174.3 162.0,163.8 156.4,166.0" fill="#dedede" stroke="#dedede" stroke-width="0.4"/><path d="M162.9 174.3L162.0 163.8M156.4 166.0L157.3 176.6M160.1 175.5L159.2 164.9" stroke="#000" stroke-width="1.45" fill="none" stroke-linecap="round" stroke-linejoin="round"/><polygon points="328.3,209.3 332.5,206.9 323.8,203.2 319.6,205.7" fill="#c4c4c4" stroke="#c4c4c4" stroke-width="0.4"/><path d="M332.5 206.9L323.8 203.2M319.6 205.7L328.3 209.3" stroke="#000" stroke-width="1.7" fill="none" stroke-linecap="round" stroke-linejoin="round"/><polygon points="342.4,62.5 345.3,61.6 333.6,58.9 330.7,59.8" fill="#1a1a1a" stroke="#1a1a1a" stroke-width="0.4"/><path d="M345.3 61.6L333.6 58.9M330.7 59.8L342.4 62.5" stroke="#000" stroke-width="1.8" fill="none" stroke-linecap="round" stroke-linejoin="round"/><polygon points="148.1,191.3 145.0,189.7 144.0,179.2 147.1,180.8" fill="#8c8c8c" stroke="#8c8c8c" stroke-width="0.4"/><path d="M145.0 189.7L144.0 179.2M147.1 180.8L148.1 191.3M146.6 190.5L145.5 180.0" stroke="#000" stroke-width="1.45" fill="none" stroke-linecap="round" stroke-linejoin="round"/><polygon points="328.1,213.4 319.4,209.7 319.6,205.7 328.3,209.3" fill="#8c8c8c" stroke="#8c8c8c" stroke-width="0.4"/><path d="M328.1 213.4L319.4 209.7M319.6 205.7L328.3 209.3" stroke="#000" stroke-width="1.7" fill="none" stroke-linecap="round" stroke-linejoin="round"/><polygon points="148.1,191.3 153.7,189.0 152.8,178.5 147.1,180.8" fill="#dedede" stroke="#dedede" stroke-width="0.4"/><path d="M153.7 189.0L152.8 178.5M147.1 180.8L148.1 191.3M150.9 190.1L149.9 179.6" stroke="#000" stroke-width="1.45" fill="none" stroke-linecap="round" stroke-linejoin="round"/><polygon points="342.2,68.6 330.5,65.8 330.7,59.8 342.4,62.5" fill="#d8d8d8" stroke="#d8d8d8" stroke-width="0.4"/><path d="M342.2 68.6L330.5 65.8M330.7 59.8L342.4 62.5" stroke="#000" stroke-width="1.8" fill="none" stroke-linecap="round" stroke-linejoin="round"/><polygon points="163.5,215.4 169.1,212.9 162.1,209.1 156.5,211.6" fill="#c4c4c4" stroke="#c4c4c4" stroke-width="0.4"/><path d="M169.1 212.9L162.1 209.1M156.5 211.6L163.5 215.4" stroke="#000" stroke-width="1.7" fill="none" stroke-linecap="round" stroke-linejoin="round"/><polygon points="311.7,210.2 316.0,207.7 307.5,204.0 303.1,206.5" fill="#c4c4c4" stroke="#c4c4c4" stroke-width="0.4"/><path d="M316.0 207.7L307.5 204.0M303.1 206.5L311.7 210.2" stroke="#000" stroke-width="1.7" fill="none" stroke-linecap="round" stroke-linejoin="round"/><polygon points="163.9,219.6 156.9,215.7 156.5,211.6 163.5,215.4" fill="#8c8c8c" stroke="#8c8c8c" stroke-width="0.4"/><path d="M163.9 219.6L156.9 215.7M156.5 211.6L163.5 215.4" stroke="#000" stroke-width="1.7" fill="none" stroke-linecap="round" stroke-linejoin="round"/><polygon points="180.8,214.6 186.2,212.0 179.0,208.3 173.6,210.8" fill="#c4c4c4" stroke="#c4c4c4" stroke-width="0.4"/><path d="M186.2 212.0L179.0 208.3M173.6 210.8L180.8 214.6" stroke="#000" stroke-width="1.7" fill="none" stroke-linecap="round" stroke-linejoin="round"/><polygon points="311.6,214.3 303.0,210.5 303.1,206.5 311.7,210.2" fill="#8c8c8c" stroke="#8c8c8c" stroke-width="0.4"/><path d="M311.6 214.3L303.0 210.5M303.1 206.5L311.7 210.2" stroke="#000" stroke-width="1.7" fill="none" stroke-linecap="round" stroke-linejoin="round"/><polygon points="181.1,218.7 173.9,214.9 173.6,210.8 180.8,214.6" fill="#8c8c8c" stroke="#8c8c8c" stroke-width="0.4"/><path d="M181.1 218.7L173.9 214.9M173.6 210.8L180.8 214.6" stroke="#000" stroke-width="1.7" fill="none" stroke-linecap="round" stroke-linejoin="round"/><polygon points="156.4,166.0 153.3,164.5 152.3,153.8 155.5,155.2" fill="#8c8c8c" stroke="#8c8c8c" stroke-width="0.4"/><path d="M153.3 164.5L152.3 153.8M155.5 155.2L156.4 166.0M154.9 165.2L153.9 154.5" stroke="#000" stroke-width="1.45" fill="none" stroke-linecap="round" stroke-linejoin="round"/><polygon points="156.4,166.0 162.0,163.8 161.1,153.1 155.5,155.2" fill="#dedede" stroke="#dedede" stroke-width="0.4"/><path d="M162.0 163.8L161.1 153.1M155.5 155.2L156.4 166.0M159.2 164.9L158.3 154.1" stroke="#000" stroke-width="1.45" fill="none" stroke-linecap="round" stroke-linejoin="round"/><polygon points="193.8,64.7 205.9,61.5 202.7,60.7 190.7,63.8" fill="#1a1a1a" stroke="#1a1a1a" stroke-width="0.4"/><path d="M193.8 64.7L205.9 61.5M202.7 60.7L190.7 63.8" stroke="#000" stroke-width="1.8" fill="none" stroke-linecap="round" stroke-linejoin="round"/><polygon points="337.2,213.1 341.4,210.6 332.5,206.9 328.3,209.3" fill="#c4c4c4" stroke="#c4c4c4" stroke-width="0.4"/><path d="M341.4 210.6L332.5 206.9M328.3 209.3L337.2 213.1" stroke="#000" stroke-width="1.7" fill="none" stroke-linecap="round" stroke-linejoin="round"/><polygon points="147.1,180.8 144.0,179.2 143.0,168.5 146.0,170.0" fill="#8c8c8c" stroke="#8c8c8c" stroke-width="0.4"/><path d="M144.0 179.2L143.0 168.5M146.0 170.0L147.1 180.8M145.5 180.0L144.5 169.3" stroke="#000" stroke-width="1.45" fill="none" stroke-linecap="round" stroke-linejoin="round"/><polygon points="194.2,70.9 206.2,67.6 205.9,61.5 193.8,64.7" fill="#fafafa" stroke="#fafafa" stroke-width="0.4"/><path d="M194.2 70.9L206.2 67.6M205.9 61.5L193.8 64.7" stroke="#000" stroke-width="1.8" fill="none" stroke-linecap="round" stroke-linejoin="round"/><polygon points="147.1,180.8 152.8,178.5 151.8,167.8 146.0,170.0" fill="#dedede" stroke="#dedede" stroke-width="0.4"/><path d="M152.8 178.5L151.8 167.8M146.0 170.0L147.1 180.8M149.9 179.6L148.9 168.9" stroke="#000" stroke-width="1.45" fill="none" stroke-linecap="round" stroke-linejoin="round"/><polygon points="337.0,217.2 328.1,213.4 328.3,209.3 337.2,213.1" fill="#8c8c8c" stroke="#8c8c8c" stroke-width="0.4"/><path d="M337.0 217.2L328.1 213.4M328.3 209.3L337.2 213.1" stroke="#000" stroke-width="1.7" fill="none" stroke-linecap="round" stroke-linejoin="round"/><polygon points="320.4,214.0 324.8,211.4 316.0,207.7 311.7,210.2" fill="#c4c4c4" stroke="#c4c4c4" stroke-width="0.4"/><path d="M324.8 211.4L316.0 207.7M311.7 210.2L320.4 214.0" stroke="#000" stroke-width="1.7" fill="none" stroke-linecap="round" stroke-linejoin="round"/><polygon points="354.5,65.3 357.3,64.3 345.3,61.6 342.4,62.5" fill="#1a1a1a" stroke="#1a1a1a" stroke-width="0.4"/><path d="M357.3 64.3L345.3 61.6M342.4 62.5L354.5 65.3" stroke="#000" stroke-width="1.8" fill="none" stroke-linecap="round" stroke-linejoin="round"/><polygon points="155.5,155.2 152.3,153.8 151.4,142.9 154.5,144.3" fill="#8c8c8c" stroke="#8c8c8c" stroke-width="0.4"/><path d="M152.3 153.8L151.4 142.9M154.5 144.3L155.5 155.2M153.9 154.5L152.9 143.6" stroke="#000" stroke-width="1.45" fill="none" stroke-linecap="round" stroke-linejoin="round"/><polygon points="155.5,155.2 161.1,153.1 160.2,142.2 154.5,144.3" fill="#dedede" stroke="#dedede" stroke-width="0.4"/><path d="M161.1 153.1L160.2 142.2M154.5 144.3L155.5 155.2M158.3 154.1L157.3 143.2" stroke="#000" stroke-width="1.45" fill="none" stroke-linecap="round" stroke-linejoin="round"/><polygon points="320.3,218.1 311.6,214.3 311.7,210.2 320.4,214.0" fill="#8c8c8c" stroke="#8c8c8c" stroke-width="0.4"/><path d="M320.3 218.1L311.6 214.3M311.7 210.2L320.4 214.0" stroke="#000" stroke-width="1.7" fill="none" stroke-linecap="round" stroke-linejoin="round"/><polygon points="354.2,71.5 342.2,68.6 342.4,62.5 354.5,65.3" fill="#d8d8d8" stroke="#d8d8d8" stroke-width="0.4"/><path d="M354.2 71.5L342.2 68.6M342.4 62.5L354.5 65.3" stroke="#000" stroke-width="1.8" fill="none" stroke-linecap="round" stroke-linejoin="round"/><polygon points="170.7,219.4 176.3,216.7 169.1,212.9 163.5,215.4" fill="#c4c4c4" stroke="#c4c4c4" stroke-width="0.4"/><path d="M176.3 216.7L169.1 212.9M163.5 215.4L170.7 219.4" stroke="#000" stroke-width="1.7" fill="none" stroke-linecap="round" stroke-linejoin="round"/><polygon points="171.0,223.5 163.9,219.6 163.5,215.4 170.7,219.4" fill="#8c8c8c" stroke="#8c8c8c" stroke-width="0.4"/><path d="M171.0 223.5L163.9 219.6M163.5 215.4L170.7 219.4" stroke="#000" stroke-width="1.7" fill="none" stroke-linecap="round" stroke-linejoin="round"/><polygon points="188.1,218.5 193.6,215.9 186.2,212.0 180.8,214.6" fill="#c4c4c4" stroke="#c4c4c4" stroke-width="0.4"/><path d="M193.6 215.9L186.2 212.0M180.8 214.6L188.1 218.5" stroke="#000" stroke-width="1.7" fill="none" stroke-linecap="round" stroke-linejoin="round"/><polygon points="146.0,170.0 143.0,168.5 141.9,157.7 145.0,159.1" fill="#8c8c8c" stroke="#8c8c8c" stroke-width="0.4"/><path d="M143.0 168.5L141.9 157.7M145.0 159.1L146.0 170.0M144.5 169.3L143.5 158.4" stroke="#000" stroke-width="1.45" fill="none" stroke-linecap="round" stroke-linejoin="round"/><polygon points="146.0,170.0 151.8,167.8 150.8,157.0 145.0,159.1" fill="#dedede" stroke="#dedede" stroke-width="0.4"/><path d="M151.8 167.8L150.8 157.0M145.0 159.1L146.0 170.0M148.9 168.9L147.9 158.0" stroke="#000" stroke-width="1.45" fill="none" stroke-linecap="round" stroke-linejoin="round"/><polygon points="346.3,217.0 350.5,214.4 341.4,210.6 337.2,213.1" fill="#c4c4c4" stroke="#c4c4c4" stroke-width="0.4"/><path d="M350.5 214.4L341.4 210.6M337.2 213.1L346.3 217.0" stroke="#000" stroke-width="1.7" fill="none" stroke-linecap="round" stroke-linejoin="round"/><polygon points="188.4,222.7 181.1,218.7 180.8,214.6 188.1,218.5" fill="#8c8c8c" stroke="#8c8c8c" stroke-width="0.4"/><path d="M188.4 222.7L181.1 218.7M180.8 214.6L188.1 218.5" stroke="#000" stroke-width="1.7" fill="none" stroke-linecap="round" stroke-linejoin="round"/><polygon points="346.1,221.1 337.0,217.2 337.2,213.1 346.3,217.0" fill="#8c8c8c" stroke="#8c8c8c" stroke-width="0.4"/><path d="M346.1 221.1L337.0 217.2M337.2 213.1L346.3 217.0" stroke="#000" stroke-width="1.7" fill="none" stroke-linecap="round" stroke-linejoin="round"/><polygon points="154.5,144.3 151.4,142.9 150.4,131.8 153.5,133.1" fill="#8c8c8c" stroke="#8c8c8c" stroke-width="0.4"/><path d="M151.4 142.9L150.4 131.8M153.5 133.1L154.5 144.3M152.9 143.6L151.9 132.5" stroke="#000" stroke-width="1.45" fill="none" stroke-linecap="round" stroke-linejoin="round"/><polygon points="154.5,144.3 160.2,142.2 159.2,131.2 153.5,133.1" fill="#dedede" stroke="#dedede" stroke-width="0.4"/><path d="M160.2 142.2L159.2 131.2M153.5 133.1L154.5 144.3M157.3 143.2L156.4 132.1" stroke="#000" stroke-width="1.45" fill="none" stroke-linecap="round" stroke-linejoin="round"/><polygon points="329.4,217.8 333.7,215.2 324.8,211.4 320.4,214.0" fill="#c4c4c4" stroke="#c4c4c4" stroke-width="0.4"/><path d="M333.7 215.2L324.8 211.4M320.4 214.0L329.4 217.8" stroke="#000" stroke-width="1.7" fill="none" stroke-linecap="round" stroke-linejoin="round"/><polygon points="181.4,68.1 193.8,64.7 190.7,63.8 178.3,67.1" fill="#1a1a1a" stroke="#1a1a1a" stroke-width="0.4"/><path d="M181.4 68.1L193.8 64.7M190.7 63.8L178.3 67.1" stroke="#000" stroke-width="1.8" fill="none" stroke-linecap="round" stroke-linejoin="round"/><polygon points="329.2,222.0 320.3,218.1 320.4,214.0 329.4,217.8" fill="#8c8c8c" stroke="#8c8c8c" stroke-width="0.4"/><path d="M329.2 222.0L320.3 218.1M320.4 214.0L329.4 217.8" stroke="#000" stroke-width="1.7" fill="none" stroke-linecap="round" stroke-linejoin="round"/><polygon points="181.8,74.3 194.2,70.9 193.8,64.7 181.4,68.1" fill="#fafafa" stroke="#fafafa" stroke-width="0.4"/><path d="M181.8 74.3L194.2 70.9M193.8 64.7L181.4 68.1" stroke="#000" stroke-width="1.8" fill="none" stroke-linecap="round" stroke-linejoin="round"/><polygon points="145.0,159.1 141.9,157.7 140.8,146.7 144.0,148.1" fill="#8c8c8c" stroke="#8c8c8c" stroke-width="0.4"/><path d="M141.9 157.7L140.8 146.7M144.0 148.1L145.0 159.1M143.5 158.4L142.4 147.4" stroke="#000" stroke-width="1.45" fill="none" stroke-linecap="round" stroke-linejoin="round"/><polygon points="145.0,159.1 150.8,157.0 149.8,146.0 144.0,148.1" fill="#dedede" stroke="#dedede" stroke-width="0.4"/><path d="M150.8 157.0L149.8 146.0M144.0 148.1L145.0 159.1M147.9 158.0L146.9 147.0" stroke="#000" stroke-width="1.45" fill="none" stroke-linecap="round" stroke-linejoin="round"/><polygon points="366.9,68.1 369.7,67.1 357.3,64.3 354.5,65.3" fill="#1a1a1a" stroke="#1a1a1a" stroke-width="0.4"/><path d="M369.7 67.1L357.3 64.3M354.5 65.3L366.9 68.1" stroke="#000" stroke-width="1.8" fill="none" stroke-linecap="round" stroke-linejoin="round"/><polygon points="350.3,222.9 354.4,220.3 355.0,209.8 350.8,212.4" fill="#dedede" stroke="#dedede" stroke-width="0.4"/><path d="M354.4 220.3L355.0 209.8M350.8 212.4L350.3 222.9M352.4 221.6L352.9 211.1" stroke="#000" stroke-width="1.45" fill="none" stroke-linecap="round" stroke-linejoin="round"/><polygon points="178.0,223.4 183.6,220.7 176.3,216.7 170.7,219.4" fill="#c4c4c4" stroke="#c4c4c4" stroke-width="0.4"/><path d="M183.6 220.7L176.3 216.7M170.7 219.4L178.0 223.4" stroke="#000" stroke-width="1.7" fill="none" stroke-linecap="round" stroke-linejoin="round"/><polygon points="366.5,74.4 354.2,71.5 354.5,65.3 366.9,68.1" fill="#d8d8d8" stroke="#d8d8d8" stroke-width="0.4"/><path d="M366.5 74.4L354.2 71.5M354.5 65.3L366.9 68.1" stroke="#000" stroke-width="1.8" fill="none" stroke-linecap="round" stroke-linejoin="round"/><polygon points="178.4,227.6 171.0,223.5 170.7,219.4 178.0,223.4" fill="#8c8c8c" stroke="#8c8c8c" stroke-width="0.4"/><path d="M178.4 227.6L171.0 223.5M170.7 219.4L178.0 223.4" stroke="#000" stroke-width="1.7" fill="none" stroke-linecap="round" stroke-linejoin="round"/><polygon points="153.5,133.1 150.4,131.8 149.4,120.6 152.5,121.8" fill="#8c8c8c" stroke="#8c8c8c" stroke-width="0.4"/><path d="M150.4 131.8L149.4 120.6M152.5 121.8L153.5 133.1M151.9 132.5L150.9 121.2" stroke="#000" stroke-width="1.45" fill="none" stroke-linecap="round" stroke-linejoin="round"/><polygon points="153.5,133.1 159.2,131.2 158.3,119.9 152.5,121.8" fill="#dedede" stroke="#dedede" stroke-width="0.4"/><path d="M159.2 131.2L158.3 119.9M152.5 121.8L153.5 133.1M156.4 132.1L155.4 120.9" stroke="#000" stroke-width="1.45" fill="none" stroke-linecap="round" stroke-linejoin="round"/><polygon points="350.3,222.9 346.1,221.1 346.7,210.7 350.8,212.4" fill="#8c8c8c" stroke="#8c8c8c" stroke-width="0.4"/><path d="M346.1 221.1L346.7 210.7M350.8 212.4L350.3 222.9M348.2 222.0L348.7 211.5" stroke="#000" stroke-width="1.45" fill="none" stroke-linecap="round" stroke-linejoin="round"/><polygon points="195.7,222.5 201.1,219.8 193.6,215.9 188.1,218.5" fill="#c4c4c4" stroke="#c4c4c4" stroke-width="0.4"/><path d="M201.1 219.8L193.6 215.9M188.1 218.5L195.7 222.5" stroke="#000" stroke-width="1.7" fill="none" stroke-linecap="round" stroke-linejoin="round"/><polygon points="195.9,226.7 188.4,222.7 188.1,218.5 195.7,222.5" fill="#8c8c8c" stroke="#8c8c8c" stroke-width="0.4"/><path d="M195.9 226.7L188.4 222.7M188.1 218.5L195.7 222.5" stroke="#000" stroke-width="1.7" fill="none" stroke-linecap="round" stroke-linejoin="round"/><polygon points="338.6,221.8 342.9,219.1 333.7,215.2 329.4,217.8" fill="#c4c4c4" stroke="#c4c4c4" stroke-width="0.4"/><path d="M342.9 219.1L333.7 215.2M329.4 217.8L338.6 221.8" stroke="#000" stroke-width="1.7" fill="none" stroke-linecap="round" stroke-linejoin="round"/><polygon points="144.0,148.1 140.8,146.7 139.7,135.4 142.9,136.8" fill="#8c8c8c" stroke="#8c8c8c" stroke-width="0.4"/><path d="M140.8 146.7L139.7 135.4M142.9 136.8L144.0 148.1M142.4 147.4L141.3 136.1" stroke="#000" stroke-width="1.45" fill="none" stroke-linecap="round" stroke-linejoin="round"/><polygon points="144.0,148.1 149.8,146.0 148.8,134.8 142.9,136.8" fill="#dedede" stroke="#dedede" stroke-width="0.4"/><path d="M149.8 146.0L148.8 134.8M142.9 136.8L144.0 148.1M146.9 147.0L145.8 135.8" stroke="#000" stroke-width="1.45" fill="none" stroke-linecap="round" stroke-linejoin="round"/><polygon points="338.4,226.0 329.2,222.0 329.4,217.8 338.6,221.8" fill="#8c8c8c" stroke="#8c8c8c" stroke-width="0.4"/><path d="M338.4 226.0L329.2 222.0M329.4 217.8L338.6 221.8" stroke="#000" stroke-width="1.7" fill="none" stroke-linecap="round" stroke-linejoin="round"/><polygon points="152.5,121.8 149.4,120.6 148.3,109.1 151.5,110.4" fill="#8c8c8c" stroke="#8c8c8c" stroke-width="0.4"/><path d="M149.4 120.6L148.3 109.1M151.5 110.4L152.5 121.8M150.9 121.2L149.9 109.7" stroke="#000" stroke-width="1.45" fill="none" stroke-linecap="round" stroke-linejoin="round"/><polygon points="152.5,121.8 158.3,119.9 157.4,108.5 151.5,110.4" fill="#dedede" stroke="#dedede" stroke-width="0.4"/><path d="M158.3 119.9L157.4 108.5M151.5 110.4L152.5 121.8M155.4 120.9L154.5 109.4" stroke="#000" stroke-width="1.45" fill="none" stroke-linecap="round" stroke-linejoin="round"/><polygon points="350.8,212.4 355.0,209.8 355.6,199.2 351.4,201.8" fill="#dedede" stroke="#dedede" stroke-width="0.4"/><path d="M355.0 209.8L355.6 199.2M351.4 201.8L350.8 212.4M352.9 211.1L353.5 200.5" stroke="#000" stroke-width="1.45" fill="none" stroke-linecap="round" stroke-linejoin="round"/><polygon points="350.8,212.4 346.7,210.7 347.2,200.1 351.4,201.8" fill="#8c8c8c" stroke="#8c8c8c" stroke-width="0.4"/><path d="M346.7 210.7L347.2 200.1M351.4 201.8L350.8 212.4M348.7 211.5L349.3 200.9" stroke="#000" stroke-width="1.45" fill="none" stroke-linecap="round" stroke-linejoin="round"/><polygon points="168.4,71.5 181.4,68.1 178.3,67.1 165.3,70.5" fill="#1a1a1a" stroke="#1a1a1a" stroke-width="0.4"/><path d="M168.4 71.5L181.4 68.1M178.3 67.1L165.3 70.5" stroke="#000" stroke-width="1.8" fill="none" stroke-linecap="round" stroke-linejoin="round"/><polygon points="379.7,71.1 382.5,70.1 369.7,67.1 366.9,68.1" fill="#1a1a1a" stroke="#1a1a1a" stroke-width="0.4"/><path d="M382.5 70.1L369.7 67.1M366.9 68.1L379.7 71.1" stroke="#000" stroke-width="1.8" fill="none" stroke-linecap="round" stroke-linejoin="round"/><polygon points="142.9,136.8 139.7,135.4 138.6,124.1 141.8,125.4" fill="#8c8c8c" stroke="#8c8c8c" stroke-width="0.4"/><path d="M139.7 135.4L138.6 124.1M141.8 125.4L142.9 136.8M141.3 136.1L140.2 124.7" stroke="#000" stroke-width="1.45" fill="none" stroke-linecap="round" stroke-linejoin="round"/><polygon points="142.9,136.8 148.8,134.8 147.7,123.4 141.8,125.4" fill="#dedede" stroke="#dedede" stroke-width="0.4"/><path d="M148.8 134.8L147.7 123.4M141.8 125.4L142.9 136.8M145.8 135.8L144.8 124.4" stroke="#000" stroke-width="1.45" fill="none" stroke-linecap="round" stroke-linejoin="round"/><polygon points="168.9,77.9 181.8,74.3 181.4,68.1 168.4,71.5" fill="#fafafa" stroke="#fafafa" stroke-width="0.4"/><path d="M168.9 77.9L181.8 74.3M181.4 68.1L168.4 71.5" stroke="#000" stroke-width="1.8" fill="none" stroke-linecap="round" stroke-linejoin="round"/><polygon points="185.6,227.5 191.1,224.7 183.6,220.7 178.0,223.4" fill="#c4c4c4" stroke="#c4c4c4" stroke-width="0.4"/><path d="M191.1 224.7L183.6 220.7M178.0 223.4L185.6 227.5" stroke="#000" stroke-width="1.7" fill="none" stroke-linecap="round" stroke-linejoin="round"/><polygon points="379.3,77.4 366.5,74.4 366.9,68.1 379.7,71.1" fill="#d8d8d8" stroke="#d8d8d8" stroke-width="0.4"/><path d="M379.3 77.4L366.5 74.4M366.9 68.1L379.7 71.1" stroke="#000" stroke-width="1.8" fill="none" stroke-linecap="round" stroke-linejoin="round"/><polygon points="185.9,231.7 178.4,227.6 178.0,223.4 185.6,227.5" fill="#8c8c8c" stroke="#8c8c8c" stroke-width="0.4"/><path d="M185.9 231.7L178.4 227.6M178.0 223.4L185.6 227.5" stroke="#000" stroke-width="1.7" fill="none" stroke-linecap="round" stroke-linejoin="round"/><polygon points="203.4,226.5 208.8,223.8 201.1,219.8 195.7,222.5" fill="#c4c4c4" stroke="#c4c4c4" stroke-width="0.4"/><path d="M208.8 223.8L201.1 219.8M195.7 222.5L203.4 226.5" stroke="#000" stroke-width="1.7" fill="none" stroke-linecap="round" stroke-linejoin="round"/><polygon points="342.5,227.8 346.8,225.1 347.4,214.6 343.1,217.2" fill="#dedede" stroke="#dedede" stroke-width="0.4"/><path d="M346.8 225.1L347.4 214.6M343.1 217.2L342.5 227.8M344.7 226.5L345.2 215.9" stroke="#000" stroke-width="1.45" fill="none" stroke-linecap="round" stroke-linejoin="round"/><polygon points="151.5,110.4 148.3,109.1 147.3,97.5 150.5,98.7" fill="#8c8c8c" stroke="#8c8c8c" stroke-width="0.4"/><path d="M148.3 109.1L147.3 97.5M150.5 98.7L151.5 110.4M149.9 109.7L148.9 98.1" stroke="#000" stroke-width="1.45" fill="none" stroke-linecap="round" stroke-linejoin="round"/><polygon points="151.5,110.4 157.4,108.5 156.4,96.9 150.5,98.7" fill="#dedede" stroke="#dedede" stroke-width="0.4"/><path d="M157.4 108.5L156.4 96.9M150.5 98.7L151.5 110.4M154.5 109.4L153.5 97.8" stroke="#000" stroke-width="1.45" fill="none" stroke-linecap="round" stroke-linejoin="round"/><polygon points="203.6,230.8 195.9,226.7 195.7,222.5 203.4,226.5" fill="#8c8c8c" stroke="#8c8c8c" stroke-width="0.4"/><path d="M203.6 230.8L195.9 226.7M195.7 222.5L203.4 226.5" stroke="#000" stroke-width="1.7" fill="none" stroke-linecap="round" stroke-linejoin="round"/><polygon points="342.5,227.8 338.4,226.0 338.9,215.5 343.1,217.2" fill="#8c8c8c" stroke="#8c8c8c" stroke-width="0.4"/><path d="M338.4 226.0L338.9 215.5M343.1 217.2L342.5 227.8M340.5 226.9L341.0 216.3" stroke="#000" stroke-width="1.45" fill="none" stroke-linecap="round" stroke-linejoin="round"/><polygon points="351.4,201.8 355.6,199.2 356.3,188.5 352.0,190.9" fill="#dedede" stroke="#dedede" stroke-width="0.4"/><path d="M355.6 199.2L356.3 188.5M352.0 190.9L351.4 201.8M353.5 200.5L354.2 189.7" stroke="#000" stroke-width="1.45" fill="none" stroke-linecap="round" stroke-linejoin="round"/><polygon points="141.8,125.4 138.6,124.1 137.5,112.5 140.7,113.8" fill="#8c8c8c" stroke="#8c8c8c" stroke-width="0.4"/><path d="M138.6 124.1L137.5 112.5M140.7 113.8L141.8 125.4M140.2 124.7L139.1 113.1" stroke="#000" stroke-width="1.45" fill="none" stroke-linecap="round" stroke-linejoin="round"/><polygon points="141.8,125.4 147.7,123.4 146.7,111.9 140.7,113.8" fill="#dedede" stroke="#dedede" stroke-width="0.4"/><path d="M147.7 123.4L146.7 111.9M140.7 113.8L141.8 125.4M144.8 124.4L143.7 112.8" stroke="#000" stroke-width="1.45" fill="none" stroke-linecap="round" stroke-linejoin="round"/><polygon points="351.4,201.8 347.2,200.1 347.8,189.3 352.0,190.9" fill="#8c8c8c" stroke="#8c8c8c" stroke-width="0.4"/><path d="M347.2 200.1L347.8 189.3M352.0 190.9L351.4 201.8M349.3 200.9L349.9 190.1" stroke="#000" stroke-width="1.45" fill="none" stroke-linecap="round" stroke-linejoin="round"/><polygon points="150.5,98.7 147.3,97.5 146.2,85.7 149.5,86.8" fill="#8c8c8c" stroke="#8c8c8c" stroke-width="0.4"/><path d="M147.3 97.5L146.2 85.7M149.5 86.8L150.5 98.7M148.9 98.1L147.8 86.3" stroke="#000" stroke-width="1.45" fill="none" stroke-linecap="round" stroke-linejoin="round"/><polygon points="150.5,98.7 156.4,96.9 155.4,85.2 149.5,86.8" fill="#dedede" stroke="#dedede" stroke-width="0.4"/><path d="M156.4 96.9L155.4 85.2M149.5 86.8L150.5 98.7M153.5 97.8L152.4 86.0" stroke="#000" stroke-width="1.45" fill="none" stroke-linecap="round" stroke-linejoin="round"/><polygon points="343.1,217.2 347.4,214.6 347.9,203.9 343.6,206.5" fill="#dedede" stroke="#dedede" stroke-width="0.4"/><path d="M347.4 214.6L347.9 203.9M343.6 206.5L343.1 217.2M345.2 215.9L345.8 205.1" stroke="#000" stroke-width="1.45" fill="none" stroke-linecap="round" stroke-linejoin="round"/><polygon points="193.3,231.7 198.9,228.8 191.1,224.7 185.6,227.5" fill="#c4c4c4" stroke="#c4c4c4" stroke-width="0.4"/><path d="M198.9 228.8L191.1 224.7M185.6 227.5L193.3 231.7" stroke="#000" stroke-width="1.7" fill="none" stroke-linecap="round" stroke-linejoin="round"/><polygon points="140.7,113.8 137.5,112.5 136.3,100.7 139.5,101.9" fill="#8c8c8c" stroke="#8c8c8c" stroke-width="0.4"/><path d="M137.5 112.5L136.3 100.7M139.5 101.9L140.7 113.8M139.1 113.1L137.9 101.3" stroke="#000" stroke-width="1.45" fill="none" stroke-linecap="round" stroke-linejoin="round"/><polygon points="343.1,217.2 338.9,215.5 339.4,204.7 343.6,206.5" fill="#8c8c8c" stroke="#8c8c8c" stroke-width="0.4"/><path d="M338.9 215.5L339.4 204.7M343.6 206.5L343.1 217.2M341.0 216.3L341.5 205.6" stroke="#000" stroke-width="1.45" fill="none" stroke-linecap="round" stroke-linejoin="round"/><polygon points="140.7,113.8 146.7,111.9 145.6,100.1 139.5,101.9" fill="#dedede" stroke="#dedede" stroke-width="0.4"/><path d="M146.7 111.9L145.6 100.1M139.5 101.9L140.7 113.8M143.7 112.8L142.6 101.0" stroke="#000" stroke-width="1.45" fill="none" stroke-linecap="round" stroke-linejoin="round"/><polygon points="155.0,75.1 168.4,71.5 165.3,70.5 152.0,74.1" fill="#1a1a1a" stroke="#1a1a1a" stroke-width="0.4"/><path d="M155.0 75.1L168.4 71.5M165.3 70.5L152.0 74.1" stroke="#000" stroke-width="1.8" fill="none" stroke-linecap="round" stroke-linejoin="round"/><polygon points="193.5,236.0 185.9,231.7 185.6,227.5 193.3,231.7" fill="#8c8c8c" stroke="#8c8c8c" stroke-width="0.4"/><path d="M193.5 236.0L185.9 231.7M185.6 227.5L193.3 231.7" stroke="#000" stroke-width="1.7" fill="none" stroke-linecap="round" stroke-linejoin="round"/><polygon points="211.3,230.7 216.7,227.9 208.8,223.8 203.4,226.5" fill="#c4c4c4" stroke="#c4c4c4" stroke-width="0.4"/><path d="M216.7 227.9L208.8 223.8M203.4 226.5L211.3 230.7" stroke="#000" stroke-width="1.7" fill="none" stroke-linecap="round" stroke-linejoin="round"/><polygon points="148.4,74.8 154.4,73.2 151.1,72.2 145.2,73.7" fill="#c4c4c4" stroke="#c4c4c4" stroke-width="0.4"/><path d="M148.4 74.8L154.4 73.2L151.1 72.2L145.2 73.7Z" stroke="#000" stroke-width="1.45" fill="none" stroke-linecap="round" stroke-linejoin="round"/><polygon points="149.5,86.8 146.2,85.7 145.2,73.7 148.4,74.8" fill="#8c8c8c" stroke="#8c8c8c" stroke-width="0.4"/><path d="M146.2 85.7L145.2 73.7M148.4 74.8L149.5 86.8M147.8 86.3L146.8 74.2" stroke="#000" stroke-width="1.45" fill="none" stroke-linecap="round" stroke-linejoin="round"/><polygon points="149.5,86.8 155.4,85.2 154.4,73.2 148.4,74.8" fill="#dedede" stroke="#dedede" stroke-width="0.4"/><path d="M155.4 85.2L154.4 73.2M148.4 74.8L149.5 86.8M152.4 86.0L151.4 74.0" stroke="#000" stroke-width="1.45" fill="none" stroke-linecap="round" stroke-linejoin="round"/><polygon points="352.0,190.9 356.3,188.5 356.9,177.5 352.6,179.9" fill="#dedede" stroke="#dedede" stroke-width="0.4"/><path d="M356.3 188.5L356.9 177.5M352.6 179.9L352.0 190.9M354.2 189.7L354.8 178.7" stroke="#000" stroke-width="1.45" fill="none" stroke-linecap="round" stroke-linejoin="round"/><polygon points="377.4,74.6 386.7,71.0 382.5,70.1 373.2,73.6" fill="#2a2a2a" stroke="#2a2a2a" stroke-width="0.4"/><path d="M377.4 74.6L386.7 71.0M382.5 70.1L373.2 73.6" stroke="#000" stroke-width="1.8" fill="none" stroke-linecap="round" stroke-linejoin="round"/><polygon points="211.5,235.0 203.6,230.8 203.4,226.5 211.3,230.7" fill="#8c8c8c" stroke="#8c8c8c" stroke-width="0.4"/><path d="M211.5 235.0L203.6 230.8M203.4 226.5L211.3 230.7" stroke="#000" stroke-width="1.7" fill="none" stroke-linecap="round" stroke-linejoin="round"/><polygon points="155.6,81.5 168.9,77.9 168.4,71.5 155.0,75.1" fill="#fafafa" stroke="#fafafa" stroke-width="0.4"/><path d="M155.6 81.5L168.9 77.9M168.4 71.5L155.0 75.1" stroke="#000" stroke-width="1.8" fill="none" stroke-linecap="round" stroke-linejoin="round"/><polygon points="376.9,81.0 386.2,77.3 386.7,71.0 377.4,74.6" fill="#fafafa" stroke="#fafafa" stroke-width="0.4"/><path d="M376.9 81.0L386.2 77.3M386.7 71.0L377.4 74.6" stroke="#000" stroke-width="1.8" fill="none" stroke-linecap="round" stroke-linejoin="round"/><polygon points="352.0,190.9 347.8,189.3 348.3,178.3 352.6,179.9" fill="#8c8c8c" stroke="#8c8c8c" stroke-width="0.4"/><path d="M347.8 189.3L348.3 178.3M352.6 179.9L352.0 190.9M349.9 190.1L350.5 179.1" stroke="#000" stroke-width="1.45" fill="none" stroke-linecap="round" stroke-linejoin="round"/><polygon points="139.5,101.9 136.3,100.7 135.2,88.8 138.4,89.9" fill="#8c8c8c" stroke="#8c8c8c" stroke-width="0.4"/><path d="M136.3 100.7L135.2 88.8M138.4 89.9L139.5 101.9M137.9 101.3L136.8 89.4" stroke="#000" stroke-width="1.45" fill="none" stroke-linecap="round" stroke-linejoin="round"/><polygon points="139.5,101.9 145.6,100.1 144.5,88.2 138.4,89.9" fill="#dedede" stroke="#dedede" stroke-width="0.4"/><path d="M145.6 100.1L144.5 88.2M138.4 89.9L139.5 101.9M142.6 101.0L141.5 89.1" stroke="#000" stroke-width="1.45" fill="none" stroke-linecap="round" stroke-linejoin="round"/><polygon points="343.6,206.5 347.9,203.9 348.5,193.0 344.1,195.5" fill="#dedede" stroke="#dedede" stroke-width="0.4"/><path d="M347.9 203.9L348.5 193.0M344.1 195.5L343.6 206.5M345.8 205.1L346.3 194.2" stroke="#000" stroke-width="1.45" fill="none" stroke-linecap="round" stroke-linejoin="round"/><polygon points="343.6,206.5 339.4,204.7 339.9,193.8 344.1,195.5" fill="#8c8c8c" stroke="#8c8c8c" stroke-width="0.4"/><path d="M339.4 204.7L339.9 193.8M344.1 195.5L343.6 206.5M341.5 205.6L342.0 194.7" stroke="#000" stroke-width="1.45" fill="none" stroke-linecap="round" stroke-linejoin="round"/><polygon points="352.6,179.9 356.9,177.5 357.5,166.4 353.2,168.7" fill="#dedede" stroke="#dedede" stroke-width="0.4"/><path d="M356.9 177.5L357.5 166.4M353.2 168.7L352.6 179.9M354.8 178.7L355.4 167.5" stroke="#000" stroke-width="1.45" fill="none" stroke-linecap="round" stroke-linejoin="round"/><polygon points="201.1,236.0 206.7,233.1 198.9,228.8 193.3,231.7" fill="#c4c4c4" stroke="#c4c4c4" stroke-width="0.4"/><path d="M206.7 233.1L198.9 228.8M193.3 231.7L201.1 236.0" stroke="#000" stroke-width="1.7" fill="none" stroke-linecap="round" stroke-linejoin="round"/><polygon points="137.2,77.7 143.4,76.1 140.2,75.0 134.0,76.6" fill="#c4c4c4" stroke="#c4c4c4" stroke-width="0.4"/><path d="M137.2 77.7L143.4 76.1L140.2 75.0L134.0 76.6Z" stroke="#000" stroke-width="1.45" fill="none" stroke-linecap="round" stroke-linejoin="round"/><polygon points="352.6,179.9 348.3,178.3 348.9,167.2 353.2,168.7" fill="#8c8c8c" stroke="#8c8c8c" stroke-width="0.4"/><path d="M348.3 178.3L348.9 167.2M353.2 168.7L352.6 179.9M350.5 179.1L351.1 167.9" stroke="#000" stroke-width="1.45" fill="none" stroke-linecap="round" stroke-linejoin="round"/><polygon points="138.4,89.9 135.2,88.8 134.0,76.6 137.2,77.7" fill="#8c8c8c" stroke="#8c8c8c" stroke-width="0.4"/><path d="M135.2 88.8L134.0 76.6M137.2 77.7L138.4 89.9M136.8 89.4L135.6 77.2" stroke="#000" stroke-width="1.45" fill="none" stroke-linecap="round" stroke-linejoin="round"/><polygon points="138.4,89.9 144.5,88.2 143.4,76.1 137.2,77.7" fill="#dedede" stroke="#dedede" stroke-width="0.4"/><path d="M144.5 88.2L143.4 76.1M137.2 77.7L138.4 89.9M141.5 89.1L140.3 76.9" stroke="#000" stroke-width="1.45" fill="none" stroke-linecap="round" stroke-linejoin="round"/><polygon points="219.3,235.0 224.8,232.1 216.7,227.9 211.3,230.7" fill="#c4c4c4" stroke="#c4c4c4" stroke-width="0.4"/><path d="M224.8 232.1L216.7 227.9M211.3 230.7L219.3 235.0" stroke="#000" stroke-width="1.7" fill="none" stroke-linecap="round" stroke-linejoin="round"/><polygon points="201.4,240.3 193.5,236.0 193.3,231.7 201.1,236.0" fill="#8c8c8c" stroke="#8c8c8c" stroke-width="0.4"/><path d="M201.4 240.3L193.5 236.0M193.3 231.7L201.1 236.0" stroke="#000" stroke-width="1.7" fill="none" stroke-linecap="round" stroke-linejoin="round"/><polygon points="219.5,239.3 211.5,235.0 211.3,230.7 219.3,235.0" fill="#8c8c8c" stroke="#8c8c8c" stroke-width="0.4"/><path d="M219.5 239.3L211.5 235.0M211.3 230.7L219.3 235.0" stroke="#000" stroke-width="1.7" fill="none" stroke-linecap="round" stroke-linejoin="round"/><polygon points="141.1,78.8 155.0,75.1 152.0,74.1 138.1,77.7" fill="#1a1a1a" stroke="#1a1a1a" stroke-width="0.4"/><path d="M141.1 78.8L155.0 75.1M152.0 74.1L138.1 77.7" stroke="#000" stroke-width="1.8" fill="none" stroke-linecap="round" stroke-linejoin="round"/><polygon points="141.7,85.3 155.6,81.5 155.0,75.1 141.1,78.8" fill="#fafafa" stroke="#fafafa" stroke-width="0.4"/><path d="M141.7 85.3L155.6 81.5M155.0 75.1L141.1 78.8" stroke="#000" stroke-width="1.8" fill="none" stroke-linecap="round" stroke-linejoin="round"/><polygon points="344.1,195.5 348.5,193.0 349.1,181.9 344.7,184.4" fill="#dedede" stroke="#dedede" stroke-width="0.4"/><path d="M348.5 193.0L349.1 181.9M344.7 184.4L344.1 195.5M346.3 194.2L346.9 183.1" stroke="#000" stroke-width="1.45" fill="none" stroke-linecap="round" stroke-linejoin="round"/><polygon points="353.2,168.7 357.5,166.4 358.2,155.1 353.9,157.3" fill="#dedede" stroke="#dedede" stroke-width="0.4"/><path d="M357.5 166.4L358.2 155.1M353.9 157.3L353.2 168.7M355.4 167.5L356.0 156.2" stroke="#000" stroke-width="1.45" fill="none" stroke-linecap="round" stroke-linejoin="round"/><polygon points="344.1,195.5 339.9,193.8 340.4,182.7 344.7,184.4" fill="#8c8c8c" stroke="#8c8c8c" stroke-width="0.4"/><path d="M339.9 193.8L340.4 182.7M344.7 184.4L344.1 195.5M342.0 194.7L342.5 183.5" stroke="#000" stroke-width="1.45" fill="none" stroke-linecap="round" stroke-linejoin="round"/><polygon points="353.2,168.7 348.9,167.2 349.5,155.8 353.9,157.3" fill="#8c8c8c" stroke="#8c8c8c" stroke-width="0.4"/><path d="M348.9 167.2L349.5 155.8M353.9 157.3L353.2 168.7M351.1 167.9L351.7 156.6" stroke="#000" stroke-width="1.45" fill="none" stroke-linecap="round" stroke-linejoin="round"/><polygon points="367.7,78.2 377.4,74.6 373.2,73.6 363.5,77.2" fill="#2a2a2a" stroke="#2a2a2a" stroke-width="0.4"/><path d="M367.7 78.2L377.4 74.6M373.2 73.6L363.5 77.2" stroke="#000" stroke-width="1.8" fill="none" stroke-linecap="round" stroke-linejoin="round"/><polygon points="367.3,84.8 376.9,81.0 377.4,74.6 367.7,78.2" fill="#fafafa" stroke="#fafafa" stroke-width="0.4"/><path d="M367.3 84.8L376.9 81.0M377.4 74.6L367.7 78.2" stroke="#000" stroke-width="1.8" fill="none" stroke-linecap="round" stroke-linejoin="round"/><polygon points="209.2,240.4 214.8,237.4 206.7,233.1 201.1,236.0" fill="#c4c4c4" stroke="#c4c4c4" stroke-width="0.4"/><path d="M214.8 237.4L206.7 233.1M201.1 236.0L209.2 240.4" stroke="#000" stroke-width="1.7" fill="none" stroke-linecap="round" stroke-linejoin="round"/><polygon points="227.6,239.4 233.1,236.4 224.8,232.1 219.3,235.0" fill="#c4c4c4" stroke="#c4c4c4" stroke-width="0.4"/><path d="M233.1 236.4L224.8 232.1M219.3 235.0L227.6 239.4" stroke="#000" stroke-width="1.7" fill="none" stroke-linecap="round" stroke-linejoin="round"/><polygon points="209.5,244.7 201.4,240.3 201.1,236.0 209.2,240.4" fill="#8c8c8c" stroke="#8c8c8c" stroke-width="0.4"/><path d="M209.5 244.7L201.4 240.3M201.1 236.0L209.2 240.4" stroke="#000" stroke-width="1.7" fill="none" stroke-linecap="round" stroke-linejoin="round"/><polygon points="344.7,184.4 349.1,181.9 349.7,170.6 345.2,173.0" fill="#dedede" stroke="#dedede" stroke-width="0.4"/><path d="M349.1 181.9L349.7 170.6M345.2 173.0L344.7 184.4M346.9 183.1L347.5 171.8" stroke="#000" stroke-width="1.45" fill="none" stroke-linecap="round" stroke-linejoin="round"/><polygon points="227.8,243.8 219.5,239.3 219.3,235.0 227.6,239.4" fill="#8c8c8c" stroke="#8c8c8c" stroke-width="0.4"/><path d="M227.8 243.8L219.5 239.3M219.3 235.0L227.6 239.4" stroke="#000" stroke-width="1.7" fill="none" stroke-linecap="round" stroke-linejoin="round"/><polygon points="353.9,157.3 358.2,155.1 358.9,143.6 354.5,145.8" fill="#dedede" stroke="#dedede" stroke-width="0.4"/><path d="M358.2 155.1L358.9 143.6M354.5 145.8L353.9 157.3M356.0 156.2L356.7 144.7" stroke="#000" stroke-width="1.45" fill="none" stroke-linecap="round" stroke-linejoin="round"/><polygon points="344.7,184.4 340.4,182.7 340.9,171.4 345.2,173.0" fill="#8c8c8c" stroke="#8c8c8c" stroke-width="0.4"/><path d="M340.4 182.7L340.9 171.4M345.2 173.0L344.7 184.4M342.5 183.5L343.1 172.2" stroke="#000" stroke-width="1.45" fill="none" stroke-linecap="round" stroke-linejoin="round"/><polygon points="353.9,157.3 349.5,155.8 350.1,144.3 354.5,145.8" fill="#8c8c8c" stroke="#8c8c8c" stroke-width="0.4"/><path d="M349.5 155.8L350.1 144.3M354.5 145.8L353.9 157.3M351.7 156.6L352.3 145.0" stroke="#000" stroke-width="1.45" fill="none" stroke-linecap="round" stroke-linejoin="round"/><polygon points="126.7,82.6 141.1,78.8 138.1,77.7 123.6,81.6" fill="#1a1a1a" stroke="#1a1a1a" stroke-width="0.4"/><path d="M126.7 82.6L141.1 78.8M138.1 77.7L123.6 81.6" stroke="#000" stroke-width="1.8" fill="none" stroke-linecap="round" stroke-linejoin="round"/><polygon points="127.4,89.3 141.7,85.3 141.1,78.8 126.7,82.6" fill="#fafafa" stroke="#fafafa" stroke-width="0.4"/><path d="M127.4 89.3L141.7 85.3M141.1 78.8L126.7 82.6" stroke="#000" stroke-width="1.8" fill="none" stroke-linecap="round" stroke-linejoin="round"/><polygon points="345.2,173.0 349.7,170.6 350.3,159.2 345.8,161.5" fill="#dedede" stroke="#dedede" stroke-width="0.4"/><path d="M349.7 170.6L350.3 159.2M345.8 161.5L345.2 173.0M347.5 171.8L348.0 160.4" stroke="#000" stroke-width="1.45" fill="none" stroke-linecap="round" stroke-linejoin="round"/><polygon points="354.5,145.8 358.9,143.6 359.5,131.9 355.2,134.0" fill="#dedede" stroke="#dedede" stroke-width="0.4"/><path d="M358.9 143.6L359.5 131.9M355.2 134.0L354.5 145.8M356.7 144.7L357.4 133.0" stroke="#000" stroke-width="1.45" fill="none" stroke-linecap="round" stroke-linejoin="round"/><polygon points="345.2,173.0 340.9,171.4 341.4,160.0 345.8,161.5" fill="#8c8c8c" stroke="#8c8c8c" stroke-width="0.4"/><path d="M340.9 171.4L341.4 160.0M345.8 161.5L345.2 173.0M343.1 172.2L343.6 160.8" stroke="#000" stroke-width="1.45" fill="none" stroke-linecap="round" stroke-linejoin="round"/><polygon points="236.1,243.9 241.6,240.9 233.1,236.4 227.6,239.4" fill="#c4c4c4" stroke="#c4c4c4" stroke-width="0.4"/><path d="M241.6 240.9L233.1 236.4M227.6 239.4L236.1 243.9" stroke="#000" stroke-width="1.7" fill="none" stroke-linecap="round" stroke-linejoin="round"/><polygon points="217.5,244.9 223.1,241.8 214.8,237.4 209.2,240.4" fill="#c4c4c4" stroke="#c4c4c4" stroke-width="0.4"/><path d="M223.1 241.8L214.8 237.4M209.2 240.4L217.5 244.9" stroke="#000" stroke-width="1.7" fill="none" stroke-linecap="round" stroke-linejoin="round"/><polygon points="354.5,145.8 350.1,144.3 350.7,132.6 355.2,134.0" fill="#8c8c8c" stroke="#8c8c8c" stroke-width="0.4"/><path d="M350.1 144.3L350.7 132.6M355.2 134.0L354.5 145.8M352.3 145.0L352.9 133.3" stroke="#000" stroke-width="1.45" fill="none" stroke-linecap="round" stroke-linejoin="round"/><polygon points="217.7,249.3 209.5,244.7 209.2,240.4 217.5,244.9" fill="#8c8c8c" stroke="#8c8c8c" stroke-width="0.4"/><path d="M217.7 249.3L209.5 244.7M209.2 240.4L217.5 244.9" stroke="#000" stroke-width="1.7" fill="none" stroke-linecap="round" stroke-linejoin="round"/><polygon points="236.3,248.3 227.8,243.8 227.6,239.4 236.1,243.9" fill="#8c8c8c" stroke="#8c8c8c" stroke-width="0.4"/><path d="M236.3 248.3L227.8 243.8M227.6 239.4L236.1 243.9" stroke="#000" stroke-width="1.7" fill="none" stroke-linecap="round" stroke-linejoin="round"/><polygon points="355.2,134.0 359.5,131.9 360.2,120.0 355.8,122.1" fill="#dedede" stroke="#dedede" stroke-width="0.4"/><path d="M359.5 131.9L360.2 120.0M355.8 122.1L355.2 134.0M357.4 133.0L358.0 121.0" stroke="#000" stroke-width="1.45" fill="none" stroke-linecap="round" stroke-linejoin="round"/><polygon points="345.8,161.5 350.3,159.2 350.9,147.6 346.4,149.8" fill="#dedede" stroke="#dedede" stroke-width="0.4"/><path d="M350.3 159.2L350.9 147.6M346.4 149.8L345.8 161.5M348.0 160.4L348.6 148.7" stroke="#000" stroke-width="1.45" fill="none" stroke-linecap="round" stroke-linejoin="round"/><polygon points="111.7,86.6 126.7,82.6 123.6,81.6 108.6,85.5" fill="#1a1a1a" stroke="#1a1a1a" stroke-width="0.4"/><path d="M111.7 86.6L126.7 82.6M123.6 81.6L108.6 85.5" stroke="#000" stroke-width="1.8" fill="none" stroke-linecap="round" stroke-linejoin="round"/><polygon points="357.7,82.1 367.7,78.2 363.5,77.2 353.4,81.0" fill="#2a2a2a" stroke="#2a2a2a" stroke-width="0.4"/><path d="M357.7 82.1L367.7 78.2M363.5 77.2L353.4 81.0" stroke="#000" stroke-width="1.8" fill="none" stroke-linecap="round" stroke-linejoin="round"/><polygon points="355.2,134.0 350.7,132.6 351.3,120.7 355.8,122.1" fill="#8c8c8c" stroke="#8c8c8c" stroke-width="0.4"/><path d="M350.7 132.6L351.3 120.7M355.8 122.1L355.2 134.0M352.9 133.3L353.6 121.4" stroke="#000" stroke-width="1.45" fill="none" stroke-linecap="round" stroke-linejoin="round"/><polygon points="357.3,88.7 367.3,84.8 367.7,78.2 357.7,82.1" fill="#fafafa" stroke="#fafafa" stroke-width="0.4"/><path d="M357.3 88.7L367.3 84.8M367.7 78.2L357.7 82.1" stroke="#000" stroke-width="1.8" fill="none" stroke-linecap="round" stroke-linejoin="round"/><polygon points="112.4,93.4 127.4,89.3 126.7,82.6 111.7,86.6" fill="#fafafa" stroke="#fafafa" stroke-width="0.4"/><path d="M112.4 93.4L127.4 89.3M126.7 82.6L111.7 86.6" stroke="#000" stroke-width="1.8" fill="none" stroke-linecap="round" stroke-linejoin="round"/><polygon points="345.8,161.5 341.4,160.0 342.0,148.3 346.4,149.8" fill="#8c8c8c" stroke="#8c8c8c" stroke-width="0.4"/><path d="M341.4 160.0L342.0 148.3M346.4 149.8L345.8 161.5M343.6 160.8L344.2 149.1" stroke="#000" stroke-width="1.45" fill="none" stroke-linecap="round" stroke-linejoin="round"/><polygon points="244.8,248.5 250.3,245.4 241.6,240.9 236.1,243.9" fill="#c4c4c4" stroke="#c4c4c4" stroke-width="0.4"/><path d="M250.3 245.4L241.6 240.9M236.1 243.9L244.8 248.5" stroke="#000" stroke-width="1.7" fill="none" stroke-linecap="round" stroke-linejoin="round"/><polygon points="226.0,249.5 231.6,246.4 223.1,241.8 217.5,244.9" fill="#c4c4c4" stroke="#c4c4c4" stroke-width="0.4"/><path d="M231.6 246.4L223.1 241.8M217.5 244.9L226.0 249.5" stroke="#000" stroke-width="1.7" fill="none" stroke-linecap="round" stroke-linejoin="round"/><polygon points="355.8,122.1 360.2,120.0 360.9,108.0 356.5,109.9" fill="#dedede" stroke="#dedede" stroke-width="0.4"/><path d="M360.2 120.0L360.9 108.0M356.5 109.9L355.8 122.1M358.0 121.0L358.7 108.9" stroke="#000" stroke-width="1.45" fill="none" stroke-linecap="round" stroke-linejoin="round"/><polygon points="244.9,252.9 236.3,248.3 236.1,243.9 244.8,248.5" fill="#8c8c8c" stroke="#8c8c8c" stroke-width="0.4"/><path d="M244.9 252.9L236.3 248.3M236.1 243.9L244.8 248.5" stroke="#000" stroke-width="1.7" fill="none" stroke-linecap="round" stroke-linejoin="round"/><polygon points="226.2,254.0 217.7,249.3 217.5,244.9 226.0,249.5" fill="#8c8c8c" stroke="#8c8c8c" stroke-width="0.4"/><path d="M226.2 254.0L217.7 249.3M217.5 244.9L226.0 249.5" stroke="#000" stroke-width="1.7" fill="none" stroke-linecap="round" stroke-linejoin="round"/><polygon points="346.4,149.8 350.9,147.6 351.5,135.8 347.0,137.9" fill="#dedede" stroke="#dedede" stroke-width="0.4"/><path d="M350.9 147.6L351.5 135.8M347.0 137.9L346.4 149.8M348.6 148.7L349.2 136.8" stroke="#000" stroke-width="1.45" fill="none" stroke-linecap="round" stroke-linejoin="round"/><polygon points="355.8,122.1 351.3,120.7 352.0,108.6 356.5,109.9" fill="#8c8c8c" stroke="#8c8c8c" stroke-width="0.4"/><path d="M351.3 120.7L352.0 108.6M356.5 109.9L355.8 122.1M353.6 121.4L354.2 109.2" stroke="#000" stroke-width="1.45" fill="none" stroke-linecap="round" stroke-linejoin="round"/><polygon points="346.4,149.8 342.0,148.3 342.5,136.5 347.0,137.9" fill="#8c8c8c" stroke="#8c8c8c" stroke-width="0.4"/><path d="M342.0 148.3L342.5 136.5M347.0 137.9L346.4 149.8M344.2 149.1L344.7 137.2" stroke="#000" stroke-width="1.45" fill="none" stroke-linecap="round" stroke-linejoin="round"/><polygon points="356.5,109.9 360.9,108.0 361.7,95.7 357.2,97.5" fill="#dedede" stroke="#dedede" stroke-width="0.4"/><path d="M360.9 108.0L361.7 95.7M357.2 97.5L356.5 109.9M358.7 108.9L359.4 96.6" stroke="#000" stroke-width="1.45" fill="none" stroke-linecap="round" stroke-linejoin="round"/><polygon points="96.1,90.8 111.7,86.6 108.6,85.5 93.0,89.6" fill="#1a1a1a" stroke="#1a1a1a" stroke-width="0.4"/><path d="M96.1 90.8L111.7 86.6M108.6 85.5L93.0 89.6" stroke="#000" stroke-width="1.8" fill="none" stroke-linecap="round" stroke-linejoin="round"/><polygon points="96.9,97.7 112.4,93.4 111.7,86.6 96.1,90.8" fill="#fafafa" stroke="#fafafa" stroke-width="0.4"/><path d="M96.9 97.7L112.4 93.4M111.7 86.6L96.1 90.8" stroke="#000" stroke-width="1.8" fill="none" stroke-linecap="round" stroke-linejoin="round"/><polygon points="356.5,109.9 352.0,108.6 352.6,96.3 357.2,97.5" fill="#8c8c8c" stroke="#8c8c8c" stroke-width="0.4"/><path d="M352.0 108.6L352.6 96.3M357.2 97.5L356.5 109.9M354.2 109.2L354.9 96.9" stroke="#000" stroke-width="1.45" fill="none" stroke-linecap="round" stroke-linejoin="round"/><polygon points="347.0,137.9 351.5,135.8 352.1,123.7 347.6,125.8" fill="#dedede" stroke="#dedede" stroke-width="0.4"/><path d="M351.5 135.8L352.1 123.7M347.6 125.8L347.0 137.9M349.2 136.8L349.9 124.8" stroke="#000" stroke-width="1.45" fill="none" stroke-linecap="round" stroke-linejoin="round"/><polygon points="253.8,253.2 259.2,250.0 250.3,245.4 244.8,248.5" fill="#c4c4c4" stroke="#c4c4c4" stroke-width="0.4"/><path d="M259.2 250.0L250.3 245.4M244.8 248.5L253.8 253.2" stroke="#000" stroke-width="1.7" fill="none" stroke-linecap="round" stroke-linejoin="round"/><polygon points="347.0,137.9 342.5,136.5 343.1,124.4 347.6,125.8" fill="#8c8c8c" stroke="#8c8c8c" stroke-width="0.4"/><path d="M342.5 136.5L343.1 124.4M347.6 125.8L347.0 137.9M344.7 137.2L345.3 125.1" stroke="#000" stroke-width="1.45" fill="none" stroke-linecap="round" stroke-linejoin="round"/><polygon points="234.7,254.3 240.3,251.1 231.6,246.4 226.0,249.5" fill="#c4c4c4" stroke="#c4c4c4" stroke-width="0.4"/><path d="M240.3 251.1L231.6 246.4M226.0 249.5L234.7 254.3" stroke="#000" stroke-width="1.7" fill="none" stroke-linecap="round" stroke-linejoin="round"/><polygon points="96.9,97.7 93.9,96.5 93.0,89.6 96.1,90.8" fill="#d0d0d0" stroke="#d0d0d0" stroke-width="0.4"/><path d="M96.9 97.7L93.9 96.5L93.0 89.6L96.1 90.8Z" stroke="#000" stroke-width="1.8" fill="none" stroke-linecap="round" stroke-linejoin="round"/><polygon points="253.8,257.7 244.9,252.9 244.8,248.5 253.8,253.2" fill="#8c8c8c" stroke="#8c8c8c" stroke-width="0.4"/><path d="M253.8 257.7L244.9 252.9M244.8 248.5L253.8 253.2" stroke="#000" stroke-width="1.7" fill="none" stroke-linecap="round" stroke-linejoin="round"/><polygon points="234.9,258.8 226.2,254.0 226.0,249.5 234.7,254.3" fill="#8c8c8c" stroke="#8c8c8c" stroke-width="0.4"/><path d="M234.9 258.8L226.2 254.0M226.0 249.5L234.7 254.3" stroke="#000" stroke-width="1.7" fill="none" stroke-linecap="round" stroke-linejoin="round"/><polygon points="357.2,97.5 361.7,95.7 362.4,83.2 357.9,84.9" fill="#dedede" stroke="#dedede" stroke-width="0.4"/><path d="M361.7 95.7L362.4 83.2M357.9 84.9L357.2 97.5M359.4 96.6L360.1 84.0" stroke="#000" stroke-width="1.45" fill="none" stroke-linecap="round" stroke-linejoin="round"/><polygon points="357.9,84.9 362.4,83.2 357.8,82.0 353.2,83.8" fill="#c4c4c4" stroke="#c4c4c4" stroke-width="0.4"/><path d="M357.9 84.9L362.4 83.2L357.8 82.0L353.2 83.8Z" stroke="#000" stroke-width="1.45" fill="none" stroke-linecap="round" stroke-linejoin="round"/><polygon points="347.2,86.0 357.7,82.1 353.4,81.0 343.0,84.9" fill="#2a2a2a" stroke="#2a2a2a" stroke-width="0.4"/><path d="M347.2 86.0L357.7 82.1M353.4 81.0L343.0 84.9" stroke="#000" stroke-width="1.8" fill="none" stroke-linecap="round" stroke-linejoin="round"/><polygon points="357.2,97.5 352.6,96.3 353.2,83.8 357.9,84.9" fill="#8c8c8c" stroke="#8c8c8c" stroke-width="0.4"/><path d="M352.6 96.3L353.2 83.8M357.9 84.9L357.2 97.5M354.9 96.9L355.5 84.3" stroke="#000" stroke-width="1.45" fill="none" stroke-linecap="round" stroke-linejoin="round"/><polygon points="346.9,92.8 357.3,88.7 357.7,82.1 347.2,86.0" fill="#fafafa" stroke="#fafafa" stroke-width="0.4"/><path d="M346.9 92.8L357.3 88.7M357.7 82.1L347.2 86.0" stroke="#000" stroke-width="1.8" fill="none" stroke-linecap="round" stroke-linejoin="round"/><polygon points="347.6,125.8 352.1,123.7 352.8,111.5 348.2,113.5" fill="#dedede" stroke="#dedede" stroke-width="0.4"/><path d="M352.1 123.7L352.8 111.5M348.2 113.5L347.6 125.8M349.9 124.8L350.5 112.5" stroke="#000" stroke-width="1.45" fill="none" stroke-linecap="round" stroke-linejoin="round"/><polygon points="347.6,125.8 343.1,124.4 343.6,112.2 348.2,113.5" fill="#8c8c8c" stroke="#8c8c8c" stroke-width="0.4"/><path d="M343.1 124.4L343.6 112.2M348.2 113.5L347.6 125.8M345.3 125.1L345.9 112.8" stroke="#000" stroke-width="1.45" fill="none" stroke-linecap="round" stroke-linejoin="round"/><polygon points="262.9,258.1 268.3,254.8 259.2,250.0 253.8,253.2" fill="#c4c4c4" stroke="#c4c4c4" stroke-width="0.4"/><path d="M268.3 254.8L259.2 250.0M253.8 253.2L262.9 258.1" stroke="#000" stroke-width="1.7" fill="none" stroke-linecap="round" stroke-linejoin="round"/><polygon points="243.7,259.2 249.3,255.9 240.3,251.1 234.7,254.3" fill="#c4c4c4" stroke="#c4c4c4" stroke-width="0.4"/><path d="M249.3 255.9L240.3 251.1M234.7 254.3L243.7 259.2" stroke="#000" stroke-width="1.7" fill="none" stroke-linecap="round" stroke-linejoin="round"/><polygon points="263.0,262.6 253.8,257.7 253.8,253.2 262.9,258.1" fill="#8c8c8c" stroke="#8c8c8c" stroke-width="0.4"/><path d="M263.0 262.6L253.8 257.7M253.8 253.2L262.9 258.1" stroke="#000" stroke-width="1.7" fill="none" stroke-linecap="round" stroke-linejoin="round"/><polygon points="348.2,113.5 352.8,111.5 353.4,99.0 348.8,100.9" fill="#dedede" stroke="#dedede" stroke-width="0.4"/><path d="M352.8 111.5L353.4 99.0M348.8 100.9L348.2 113.5M350.5 112.5L351.1 100.0" stroke="#000" stroke-width="1.45" fill="none" stroke-linecap="round" stroke-linejoin="round"/><polygon points="243.8,263.7 234.9,258.8 234.7,254.3 243.7,259.2" fill="#8c8c8c" stroke="#8c8c8c" stroke-width="0.4"/><path d="M243.8 263.7L234.9 258.8M234.7 254.3L243.7 259.2" stroke="#000" stroke-width="1.7" fill="none" stroke-linecap="round" stroke-linejoin="round"/><polygon points="105.7,94.5 110.5,93.2 100.8,89.5 96.1,90.8" fill="#f4f4f4" stroke="#f4f4f4" stroke-width="0.4"/><path d="M110.5 93.2L100.8 89.5M96.1 90.8L105.7 94.5" stroke="#000" stroke-width="1.8" fill="none" stroke-linecap="round" stroke-linejoin="round"/><polygon points="348.2,113.5 343.6,112.2 344.2,99.7 348.8,100.9" fill="#8c8c8c" stroke="#8c8c8c" stroke-width="0.4"/><path d="M343.6 112.2L344.2 99.7M348.8 100.9L348.2 113.5M345.9 112.8L346.5 100.3" stroke="#000" stroke-width="1.45" fill="none" stroke-linecap="round" stroke-linejoin="round"/><polygon points="106.5,101.5 96.9,97.7 96.1,90.8 105.7,94.5" fill="#bebebe" stroke="#bebebe" stroke-width="0.4"/><path d="M106.5 101.5L96.9 97.7M96.1 90.8L105.7 94.5" stroke="#000" stroke-width="1.8" fill="none" stroke-linecap="round" stroke-linejoin="round"/><polygon points="348.8,100.9 353.4,99.0 354.1,86.4 349.4,88.2" fill="#dedede" stroke="#dedede" stroke-width="0.4"/><path d="M353.4 99.0L354.1 86.4M349.4 88.2L348.8 100.9M351.1 100.0L351.8 87.3" stroke="#000" stroke-width="1.45" fill="none" stroke-linecap="round" stroke-linejoin="round"/><polygon points="349.4,88.2 354.1,86.4 349.5,85.2 344.8,87.0" fill="#c4c4c4" stroke="#c4c4c4" stroke-width="0.4"/><path d="M349.4 88.2L354.1 86.4L349.5 85.2L344.8 87.0Z" stroke="#000" stroke-width="1.45" fill="none" stroke-linecap="round" stroke-linejoin="round"/><polygon points="348.8,100.9 344.2,99.7 344.8,87.0 349.4,88.2" fill="#8c8c8c" stroke="#8c8c8c" stroke-width="0.4"/><path d="M344.2 99.7L344.8 87.0M349.4 88.2L348.8 100.9M346.5 100.3L347.1 87.6" stroke="#000" stroke-width="1.45" fill="none" stroke-linecap="round" stroke-linejoin="round"/><polygon points="272.3,263.0 277.7,259.7 268.3,254.8 262.9,258.1" fill="#c4c4c4" stroke="#c4c4c4" stroke-width="0.4"/><path d="M277.7 259.7L268.3 254.8M262.9 258.1L272.3 263.0" stroke="#000" stroke-width="1.7" fill="none" stroke-linecap="round" stroke-linejoin="round"/><polygon points="272.3,267.6 263.0,262.6 262.9,258.1 272.3,263.0" fill="#8c8c8c" stroke="#8c8c8c" stroke-width="0.4"/><path d="M272.3 267.6L263.0 262.6M262.9 258.1L272.3 263.0" stroke="#000" stroke-width="1.7" fill="none" stroke-linecap="round" stroke-linejoin="round"/><polygon points="252.8,264.2 258.4,260.8 249.3,255.9 243.7,259.2" fill="#c4c4c4" stroke="#c4c4c4" stroke-width="0.4"/><path d="M258.4 260.8L249.3 255.9M243.7 259.2L252.8 264.2" stroke="#000" stroke-width="1.7" fill="none" stroke-linecap="round" stroke-linejoin="round"/><polygon points="252.9,268.7 243.8,263.7 243.7,259.2 252.8,264.2" fill="#8c8c8c" stroke="#8c8c8c" stroke-width="0.4"/><path d="M252.9 268.7L243.8 263.7M243.7 259.2L252.8 264.2" stroke="#000" stroke-width="1.7" fill="none" stroke-linecap="round" stroke-linejoin="round"/><polygon points="336.4,90.2 347.2,86.0 343.0,84.9 332.1,89.0" fill="#2a2a2a" stroke="#2a2a2a" stroke-width="0.4"/><path d="M336.4 90.2L347.2 86.0M343.0 84.9L332.1 89.0" stroke="#000" stroke-width="1.8" fill="none" stroke-linecap="round" stroke-linejoin="round"/><polygon points="336.1,97.1 346.9,92.8 347.2,86.0 336.4,90.2" fill="#fafafa" stroke="#fafafa" stroke-width="0.4"/><path d="M336.1 97.1L346.9 92.8M347.2 86.0L336.4 90.2" stroke="#000" stroke-width="1.8" fill="none" stroke-linecap="round" stroke-linejoin="round"/><polygon points="276.6,269.9 282.0,266.5 282.0,255.0 276.6,258.4" fill="#dedede" stroke="#dedede" stroke-width="0.4"/><path d="M282.0 266.5L282.0 255.0M276.6 258.4L276.6 269.9M279.3 268.2L279.3 256.7" stroke="#000" stroke-width="1.45" fill="none" stroke-linecap="round" stroke-linejoin="round"/><polygon points="276.6,269.9 272.3,267.6 272.3,256.1 276.6,258.4" fill="#8c8c8c" stroke="#8c8c8c" stroke-width="0.4"/><path d="M272.3 267.6L272.3 256.1M276.6 258.4L276.6 269.9M274.5 268.8L274.4 257.3" stroke="#000" stroke-width="1.45" fill="none" stroke-linecap="round" stroke-linejoin="round"/><polygon points="115.7,98.3 120.5,97.0 110.5,93.2 105.7,94.5" fill="#f4f4f4" stroke="#f4f4f4" stroke-width="0.4"/><path d="M120.5 97.0L110.5 93.2M105.7 94.5L115.7 98.3" stroke="#000" stroke-width="1.8" fill="none" stroke-linecap="round" stroke-linejoin="round"/><polygon points="262.3,269.3 267.8,265.8 258.4,260.8 252.8,264.2" fill="#c4c4c4" stroke="#c4c4c4" stroke-width="0.4"/><path d="M267.8 265.8L258.4 260.8M252.8 264.2L262.3 269.3" stroke="#000" stroke-width="1.7" fill="none" stroke-linecap="round" stroke-linejoin="round"/><polygon points="116.4,105.4 106.5,101.5 105.7,94.5 115.7,98.3" fill="#bebebe" stroke="#bebebe" stroke-width="0.4"/><path d="M116.4 105.4L106.5 101.5M105.7 94.5L115.7 98.3" stroke="#000" stroke-width="1.8" fill="none" stroke-linecap="round" stroke-linejoin="round"/><polygon points="262.3,273.9 252.9,268.7 252.8,264.2 262.3,269.3" fill="#8c8c8c" stroke="#8c8c8c" stroke-width="0.4"/><path d="M262.3 273.9L252.9 268.7M252.8 264.2L262.3 269.3" stroke="#000" stroke-width="1.7" fill="none" stroke-linecap="round" stroke-linejoin="round"/><polygon points="276.6,258.4 282.0,255.0 282.1,243.4 276.6,246.6" fill="#dedede" stroke="#dedede" stroke-width="0.4"/><path d="M282.0 255.0L282.1 243.4M276.6 246.6L276.6 258.4M279.3 256.7L279.3 245.0" stroke="#000" stroke-width="1.45" fill="none" stroke-linecap="round" stroke-linejoin="round"/><polygon points="325.1,94.5 336.4,90.2 332.1,89.0 320.8,93.3" fill="#2a2a2a" stroke="#2a2a2a" stroke-width="0.4"/><path d="M325.1 94.5L336.4 90.2M332.1 89.0L320.8 93.3" stroke="#000" stroke-width="1.8" fill="none" stroke-linecap="round" stroke-linejoin="round"/><polygon points="276.6,258.4 272.3,256.1 272.3,244.5 276.6,246.6" fill="#8c8c8c" stroke="#8c8c8c" stroke-width="0.4"/><path d="M272.3 256.1L272.3 244.5M276.6 246.6L276.6 258.4M274.4 257.3L274.4 245.5" stroke="#000" stroke-width="1.45" fill="none" stroke-linecap="round" stroke-linejoin="round"/><polygon points="324.9,101.5 336.1,97.1 336.4,90.2 325.1,94.5" fill="#fafafa" stroke="#fafafa" stroke-width="0.4"/><path d="M324.9 101.5L336.1 97.1M336.4 90.2L325.1 94.5" stroke="#000" stroke-width="1.8" fill="none" stroke-linecap="round" stroke-linejoin="round"/><polygon points="266.6,276.3 272.1,272.7 272.1,261.2 266.5,264.6" fill="#dedede" stroke="#dedede" stroke-width="0.4"/><path d="M272.1 272.7L272.1 261.2M266.5 264.6L266.6 276.3M269.4 274.5L269.3 262.9" stroke="#000" stroke-width="1.45" fill="none" stroke-linecap="round" stroke-linejoin="round"/><polygon points="266.6,276.3 262.3,273.9 262.2,262.3 266.5,264.6" fill="#8c8c8c" stroke="#8c8c8c" stroke-width="0.4"/><path d="M262.3 273.9L262.2 262.3M266.5 264.6L266.6 276.3M264.5 275.1L264.3 263.5" stroke="#000" stroke-width="1.45" fill="none" stroke-linecap="round" stroke-linejoin="round"/><polygon points="126.0,102.3 130.8,100.9 120.5,97.0 115.7,98.3" fill="#f4f4f4" stroke="#f4f4f4" stroke-width="0.4"/><path d="M130.8 100.9L120.5 97.0M115.7 98.3L126.0 102.3" stroke="#000" stroke-width="1.8" fill="none" stroke-linecap="round" stroke-linejoin="round"/><polygon points="126.7,109.5 116.4,105.4 115.7,98.3 126.0,102.3" fill="#bebebe" stroke="#bebebe" stroke-width="0.4"/><path d="M126.7 109.5L116.4 105.4M115.7 98.3L126.0 102.3" stroke="#000" stroke-width="1.8" fill="none" stroke-linecap="round" stroke-linejoin="round"/><polygon points="276.6,246.6 282.1,243.4 282.1,231.5 276.6,234.7" fill="#dedede" stroke="#dedede" stroke-width="0.4"/><path d="M282.1 243.4L282.1 231.5M276.6 234.7L276.6 246.6M279.3 245.0L279.4 233.1" stroke="#000" stroke-width="1.45" fill="none" stroke-linecap="round" stroke-linejoin="round"/><polygon points="276.6,246.6 272.3,244.5 272.2,232.6 276.6,234.7" fill="#8c8c8c" stroke="#8c8c8c" stroke-width="0.4"/><path d="M272.3 244.5L272.2 232.6M276.6 234.7L276.6 246.6M274.4 245.5L274.4 233.6" stroke="#000" stroke-width="1.45" fill="none" stroke-linecap="round" stroke-linejoin="round"/><polygon points="266.5,264.6 272.1,261.2 272.1,249.4 266.4,252.8" fill="#dedede" stroke="#dedede" stroke-width="0.4"/><path d="M272.1 261.2L272.1 249.4M266.4 252.8L266.5 264.6M269.3 262.9L269.2 251.1" stroke="#000" stroke-width="1.45" fill="none" stroke-linecap="round" stroke-linejoin="round"/><polygon points="266.5,264.6 262.2,262.3 262.0,250.5 266.4,252.8" fill="#8c8c8c" stroke="#8c8c8c" stroke-width="0.4"/><path d="M262.2 262.3L262.0 250.5M266.4 252.8L266.5 264.6M264.3 263.5L264.2 251.6" stroke="#000" stroke-width="1.45" fill="none" stroke-linecap="round" stroke-linejoin="round"/><polygon points="313.3,99.0 325.1,94.5 320.8,93.3 309.0,97.7" fill="#2a2a2a" stroke="#2a2a2a" stroke-width="0.4"/><path d="M313.3 99.0L325.1 94.5M320.8 93.3L309.0 97.7" stroke="#000" stroke-width="1.8" fill="none" stroke-linecap="round" stroke-linejoin="round"/><polygon points="276.6,234.7 282.1,231.5 282.2,219.4 276.6,222.5" fill="#dedede" stroke="#dedede" stroke-width="0.4"/><path d="M282.1 231.5L282.2 219.4M276.6 222.5L276.6 234.7M279.4 233.1L279.4 221.0" stroke="#000" stroke-width="1.45" fill="none" stroke-linecap="round" stroke-linejoin="round"/><polygon points="313.2,106.1 324.9,101.5 325.1,94.5 313.3,99.0" fill="#fafafa" stroke="#fafafa" stroke-width="0.4"/><path d="M313.2 106.1L324.9 101.5M325.1 94.5L313.3 99.0" stroke="#000" stroke-width="1.8" fill="none" stroke-linecap="round" stroke-linejoin="round"/><polygon points="276.6,234.7 272.2,232.6 272.2,220.4 276.6,222.5" fill="#8c8c8c" stroke="#8c8c8c" stroke-width="0.4"/><path d="M272.2 232.6L272.2 220.4M276.6 222.5L276.6 234.7M274.4 233.6L274.4 221.5" stroke="#000" stroke-width="1.45" fill="none" stroke-linecap="round" stroke-linejoin="round"/><polygon points="266.4,252.8 272.1,249.4 272.0,237.4 266.3,240.7" fill="#dedede" stroke="#dedede" stroke-width="0.4"/><path d="M272.1 249.4L272.0 237.4M266.3 240.7L266.4 252.8M269.2 251.1L269.2 239.0" stroke="#000" stroke-width="1.45" fill="none" stroke-linecap="round" stroke-linejoin="round"/><polygon points="266.4,252.8 262.0,250.5 261.9,238.5 266.3,240.7" fill="#8c8c8c" stroke="#8c8c8c" stroke-width="0.4"/><path d="M262.0 250.5L261.9 238.5M266.3 240.7L266.4 252.8M264.2 251.6L264.1 239.6" stroke="#000" stroke-width="1.45" fill="none" stroke-linecap="round" stroke-linejoin="round"/><polygon points="136.7,106.4 141.5,105.0 130.8,100.9 126.0,102.3" fill="#f4f4f4" stroke="#f4f4f4" stroke-width="0.4"/><path d="M141.5 105.0L130.8 100.9M126.0 102.3L136.7 106.4" stroke="#000" stroke-width="1.8" fill="none" stroke-linecap="round" stroke-linejoin="round"/><polygon points="137.4,113.8 126.7,109.5 126.0,102.3 136.7,106.4" fill="#bebebe" stroke="#bebebe" stroke-width="0.4"/><path d="M137.4 113.8L126.7 109.5M126.0 102.3L136.7 106.4" stroke="#000" stroke-width="1.8" fill="none" stroke-linecap="round" stroke-linejoin="round"/><polygon points="276.6,222.5 282.2,219.4 282.2,207.1 276.6,210.1" fill="#dedede" stroke="#dedede" stroke-width="0.4"/><path d="M282.2 219.4L282.2 207.1M276.6 210.1L276.6 222.5M279.4 221.0L279.4 208.6" stroke="#000" stroke-width="1.45" fill="none" stroke-linecap="round" stroke-linejoin="round"/><polygon points="276.6,222.5 272.2,220.4 272.1,208.1 276.6,210.1" fill="#8c8c8c" stroke="#8c8c8c" stroke-width="0.4"/><path d="M272.2 220.4L272.1 208.1M276.6 210.1L276.6 222.5M274.4 221.5L274.3 209.1" stroke="#000" stroke-width="1.45" fill="none" stroke-linecap="round" stroke-linejoin="round"/><polygon points="266.3,240.7 272.0,237.4 271.9,225.1 266.2,228.4" fill="#dedede" stroke="#dedede" stroke-width="0.4"/><path d="M272.0 237.4L271.9 225.1M266.2 228.4L266.3 240.7M269.2 239.0L269.1 226.7" stroke="#000" stroke-width="1.45" fill="none" stroke-linecap="round" stroke-linejoin="round"/><polygon points="266.3,240.7 261.9,238.5 261.8,226.2 266.2,228.4" fill="#8c8c8c" stroke="#8c8c8c" stroke-width="0.4"/><path d="M261.9 238.5L261.8 226.2M266.2 228.4L266.3 240.7M264.1 239.6L264.0 227.3" stroke="#000" stroke-width="1.45" fill="none" stroke-linecap="round" stroke-linejoin="round"/><polygon points="301.1,103.7 313.3,99.0 309.0,97.7 296.7,102.3" fill="#2a2a2a" stroke="#2a2a2a" stroke-width="0.4"/><path d="M301.1 103.7L313.3 99.0M309.0 97.7L296.7 102.3" stroke="#000" stroke-width="1.8" fill="none" stroke-linecap="round" stroke-linejoin="round"/><polygon points="300.9,110.9 313.2,106.1 313.3,99.0 301.1,103.7" fill="#fafafa" stroke="#fafafa" stroke-width="0.4"/><path d="M300.9 110.9L313.2 106.1M313.3 99.0L301.1 103.7" stroke="#000" stroke-width="1.8" fill="none" stroke-linecap="round" stroke-linejoin="round"/><polygon points="276.6,210.1 282.2,207.1 282.2,194.6 276.6,197.5" fill="#dedede" stroke="#dedede" stroke-width="0.4"/><path d="M282.2 207.1L282.2 194.6M276.6 197.5L276.6 210.1M279.4 208.6L279.4 196.0" stroke="#000" stroke-width="1.45" fill="none" stroke-linecap="round" stroke-linejoin="round"/><polygon points="276.6,210.1 272.1,208.1 272.1,195.5 276.6,197.5" fill="#8c8c8c" stroke="#8c8c8c" stroke-width="0.4"/><path d="M272.1 208.1L272.1 195.5M276.6 197.5L276.6 210.1M274.3 209.1L274.3 196.5" stroke="#000" stroke-width="1.45" fill="none" stroke-linecap="round" stroke-linejoin="round"/><polygon points="266.2,228.4 271.9,225.1 271.9,212.7 266.1,215.8" fill="#dedede" stroke="#dedede" stroke-width="0.4"/><path d="M271.9 225.1L271.9 212.7M266.1 215.8L266.2 228.4M269.1 226.7L269.0 214.2" stroke="#000" stroke-width="1.45" fill="none" stroke-linecap="round" stroke-linejoin="round"/><polygon points="266.2,228.4 261.8,226.2 261.6,213.7 266.1,215.8" fill="#8c8c8c" stroke="#8c8c8c" stroke-width="0.4"/><path d="M261.8 226.2L261.6 213.7M266.1 215.8L266.2 228.4M264.0 227.3L263.8 214.7" stroke="#000" stroke-width="1.45" fill="none" stroke-linecap="round" stroke-linejoin="round"/><polygon points="147.8,110.7 152.7,109.2 141.5,105.0 136.7,106.4" fill="#f4f4f4" stroke="#f4f4f4" stroke-width="0.4"/><path d="M152.7 109.2L141.5 105.0M136.7 106.4L147.8 110.7" stroke="#000" stroke-width="1.8" fill="none" stroke-linecap="round" stroke-linejoin="round"/><polygon points="148.5,118.2 137.4,113.8 136.7,106.4 147.8,110.7" fill="#bebebe" stroke="#bebebe" stroke-width="0.4"/><path d="M148.5 118.2L137.4 113.8M136.7 106.4L147.8 110.7" stroke="#000" stroke-width="1.8" fill="none" stroke-linecap="round" stroke-linejoin="round"/><polygon points="276.6,197.5 282.2,194.6 282.3,181.8 276.6,184.6" fill="#dedede" stroke="#dedede" stroke-width="0.4"/><path d="M282.2 194.6L282.3 181.8M276.6 184.6L276.6 197.5M279.4 196.0L279.4 183.2" stroke="#000" stroke-width="1.45" fill="none" stroke-linecap="round" stroke-linejoin="round"/><polygon points="276.6,197.5 272.1,195.5 272.0,182.7 276.6,184.6" fill="#8c8c8c" stroke="#8c8c8c" stroke-width="0.4"/><path d="M272.1 195.5L272.0 182.7M276.6 184.6L276.6 197.5M274.3 196.5L274.3 183.7" stroke="#000" stroke-width="1.45" fill="none" stroke-linecap="round" stroke-linejoin="round"/><polygon points="266.1,215.8 271.9,212.7 271.8,200.0 266.0,203.0" fill="#dedede" stroke="#dedede" stroke-width="0.4"/><path d="M271.9 212.7L271.8 200.0M266.0 203.0L266.1 215.8M269.0 214.2L268.9 201.5" stroke="#000" stroke-width="1.45" fill="none" stroke-linecap="round" stroke-linejoin="round"/><polygon points="266.1,215.8 261.6,213.7 261.5,201.0 266.0,203.0" fill="#8c8c8c" stroke="#8c8c8c" stroke-width="0.4"/><path d="M261.6 213.7L261.5 201.0M266.0 203.0L266.1 215.8M263.8 214.7L263.7 202.0" stroke="#000" stroke-width="1.45" fill="none" stroke-linecap="round" stroke-linejoin="round"/><polygon points="288.3,108.5 301.1,103.7 296.7,102.3 283.9,107.2" fill="#2a2a2a" stroke="#2a2a2a" stroke-width="0.4"/><path d="M288.3 108.5L301.1 103.7M296.7 102.3L283.9 107.2" stroke="#000" stroke-width="1.8" fill="none" stroke-linecap="round" stroke-linejoin="round"/><polygon points="276.6,184.6 282.3,181.8 282.3,168.7 276.5,171.5" fill="#dedede" stroke="#dedede" stroke-width="0.4"/><path d="M282.3 181.8L282.3 168.7M276.5 171.5L276.6 184.6M279.4 183.2L279.5 170.1" stroke="#000" stroke-width="1.45" fill="none" stroke-linecap="round" stroke-linejoin="round"/><polygon points="288.2,115.9 300.9,110.9 301.1,103.7 288.3,108.5" fill="#fafafa" stroke="#fafafa" stroke-width="0.4"/><path d="M288.2 115.9L300.9 110.9M301.1 103.7L288.3 108.5" stroke="#000" stroke-width="1.8" fill="none" stroke-linecap="round" stroke-linejoin="round"/><polygon points="276.6,184.6 272.0,182.7 272.0,169.7 276.5,171.5" fill="#8c8c8c" stroke="#8c8c8c" stroke-width="0.4"/><path d="M272.0 182.7L272.0 169.7M276.5 171.5L276.6 184.6M274.3 183.7L274.2 170.6" stroke="#000" stroke-width="1.45" fill="none" stroke-linecap="round" stroke-linejoin="round"/><polygon points="266.0,203.0 271.8,200.0 271.8,187.0 265.9,190.0" fill="#dedede" stroke="#dedede" stroke-width="0.4"/><path d="M271.8 200.0L271.8 187.0M265.9 190.0L266.0 203.0M268.9 201.5L268.8 188.5" stroke="#000" stroke-width="1.45" fill="none" stroke-linecap="round" stroke-linejoin="round"/><polygon points="266.0,203.0 261.5,201.0 261.3,188.0 265.9,190.0" fill="#8c8c8c" stroke="#8c8c8c" stroke-width="0.4"/><path d="M261.5 201.0L261.3 188.0M265.9 190.0L266.0 203.0M263.7 202.0L263.6 189.0" stroke="#000" stroke-width="1.45" fill="none" stroke-linecap="round" stroke-linejoin="round"/><polygon points="276.5,171.5 282.3,168.7 282.4,155.5 276.5,158.1" fill="#dedede" stroke="#dedede" stroke-width="0.4"/><path d="M282.3 168.7L282.4 155.5M276.5 158.1L276.5 171.5M279.5 170.1L279.5 156.8" stroke="#000" stroke-width="1.45" fill="none" stroke-linecap="round" stroke-linejoin="round"/><polygon points="159.4,115.2 164.2,113.6 152.7,109.2 147.8,110.7" fill="#f4f4f4" stroke="#f4f4f4" stroke-width="0.4"/><path d="M164.2 113.6L152.7 109.2M147.8 110.7L159.4 115.2" stroke="#000" stroke-width="1.8" fill="none" stroke-linecap="round" stroke-linejoin="round"/><polygon points="160.0,122.7 148.5,118.2 147.8,110.7 159.4,115.2" fill="#bebebe" stroke="#bebebe" stroke-width="0.4"/><path d="M160.0 122.7L148.5 118.2M147.8 110.7L159.4 115.2" stroke="#000" stroke-width="1.8" fill="none" stroke-linecap="round" stroke-linejoin="round"/><polygon points="276.5,171.5 272.0,169.7 271.9,156.4 276.5,158.1" fill="#8c8c8c" stroke="#8c8c8c" stroke-width="0.4"/><path d="M272.0 169.7L271.9 156.4M276.5 158.1L276.5 171.5M274.2 170.6L274.2 157.2" stroke="#000" stroke-width="1.45" fill="none" stroke-linecap="round" stroke-linejoin="round"/><polygon points="265.9,190.0 271.8,187.0 271.7,173.8 265.7,176.7" fill="#dedede" stroke="#dedede" stroke-width="0.4"/><path d="M271.8 187.0L271.7 173.8M265.7 176.7L265.9 190.0M268.8 188.5L268.8 175.2" stroke="#000" stroke-width="1.45" fill="none" stroke-linecap="round" stroke-linejoin="round"/><polygon points="265.9,190.0 261.3,188.0 261.1,174.8 265.7,176.7" fill="#8c8c8c" stroke="#8c8c8c" stroke-width="0.4"/><path d="M261.3 188.0L261.1 174.8M265.7 176.7L265.9 190.0M263.6 189.0L263.4 175.7" stroke="#000" stroke-width="1.45" fill="none" stroke-linecap="round" stroke-linejoin="round"/><polygon points="276.5,158.1 282.4,155.5 282.4,141.9 276.5,144.5" fill="#dedede" stroke="#dedede" stroke-width="0.4"/><path d="M282.4 155.5L282.4 141.9M276.5 144.5L276.5 158.1M279.5 156.8L279.5 143.2" stroke="#000" stroke-width="1.45" fill="none" stroke-linecap="round" stroke-linejoin="round"/><polygon points="276.5,158.1 271.9,156.4 271.8,142.8 276.5,144.5" fill="#8c8c8c" stroke="#8c8c8c" stroke-width="0.4"/><path d="M271.9 156.4L271.8 142.8M276.5 144.5L276.5 158.1M274.2 157.2L274.2 143.6" stroke="#000" stroke-width="1.45" fill="none" stroke-linecap="round" stroke-linejoin="round"/><polygon points="274.9,113.6 288.3,108.5 283.9,107.2 270.5,112.2" fill="#2a2a2a" stroke="#2a2a2a" stroke-width="0.4"/><path d="M274.9 113.6L288.3 108.5M283.9 107.2L270.5 112.2" stroke="#000" stroke-width="1.8" fill="none" stroke-linecap="round" stroke-linejoin="round"/><polygon points="274.9,121.2 288.2,115.9 288.3,108.5 274.9,113.6" fill="#fafafa" stroke="#fafafa" stroke-width="0.4"/><path d="M274.9 121.2L288.2 115.9M288.3 108.5L274.9 113.6" stroke="#000" stroke-width="1.8" fill="none" stroke-linecap="round" stroke-linejoin="round"/><polygon points="265.7,176.7 271.7,173.8 271.7,160.3 265.6,163.1" fill="#dedede" stroke="#dedede" stroke-width="0.4"/><path d="M271.7 173.8L271.7 160.3M265.6 163.1L265.7 176.7M268.8 175.2L268.7 161.7" stroke="#000" stroke-width="1.45" fill="none" stroke-linecap="round" stroke-linejoin="round"/><polygon points="265.7,176.7 261.1,174.8 261.0,161.3 265.6,163.1" fill="#8c8c8c" stroke="#8c8c8c" stroke-width="0.4"/><path d="M261.1 174.8L261.0 161.3M265.6 163.1L265.7 176.7M263.4 175.7L263.3 162.2" stroke="#000" stroke-width="1.45" fill="none" stroke-linecap="round" stroke-linejoin="round"/><polygon points="276.5,144.5 282.4,141.9 282.5,128.1 276.5,130.6" fill="#dedede" stroke="#dedede" stroke-width="0.4"/><path d="M282.4 141.9L282.5 128.1M276.5 130.6L276.5 144.5M279.5 143.2L279.5 129.4" stroke="#000" stroke-width="1.45" fill="none" stroke-linecap="round" stroke-linejoin="round"/><polygon points="276.5,144.5 271.8,142.8 271.8,129.0 276.5,130.6" fill="#8c8c8c" stroke="#8c8c8c" stroke-width="0.4"/><path d="M271.8 142.8L271.8 129.0M276.5 130.6L276.5 144.5M274.2 143.6L274.1 129.8" stroke="#000" stroke-width="1.45" fill="none" stroke-linecap="round" stroke-linejoin="round"/><polygon points="171.4,119.8 176.3,118.2 164.2,113.6 159.4,115.2" fill="#f4f4f4" stroke="#f4f4f4" stroke-width="0.4"/><path d="M176.3 118.2L164.2 113.6M159.4 115.2L171.4 119.8" stroke="#000" stroke-width="1.8" fill="none" stroke-linecap="round" stroke-linejoin="round"/><polygon points="171.9,127.5 160.0,122.7 159.4,115.2 171.4,119.8" fill="#bebebe" stroke="#bebebe" stroke-width="0.4"/><path d="M171.9 127.5L160.0 122.7M159.4 115.2L171.4 119.8" stroke="#000" stroke-width="1.8" fill="none" stroke-linecap="round" stroke-linejoin="round"/><polygon points="265.6,163.1 271.7,160.3 271.6,146.6 265.5,149.3" fill="#dedede" stroke="#dedede" stroke-width="0.4"/><path d="M271.7 160.3L271.6 146.6M265.5 149.3L265.6 163.1M268.7 161.7L268.6 147.9" stroke="#000" stroke-width="1.45" fill="none" stroke-linecap="round" stroke-linejoin="round"/><polygon points="276.5,130.6 282.5,128.1 282.5,114.1 276.5,116.4" fill="#dedede" stroke="#dedede" stroke-width="0.4"/><path d="M282.5 128.1L282.5 114.1M276.5 116.4L276.5 130.6M279.5 129.4L279.5 115.2" stroke="#000" stroke-width="1.45" fill="none" stroke-linecap="round" stroke-linejoin="round"/><polygon points="265.6,163.1 261.0,161.3 260.8,147.5 265.5,149.3" fill="#8c8c8c" stroke="#8c8c8c" stroke-width="0.4"/><path d="M261.0 161.3L260.8 147.5M265.5 149.3L265.6 163.1M263.3 162.2L263.2 148.4" stroke="#000" stroke-width="1.45" fill="none" stroke-linecap="round" stroke-linejoin="round"/><polygon points="276.5,116.4 282.5,114.1 277.7,112.5 271.7,114.8" fill="#c4c4c4" stroke="#c4c4c4" stroke-width="0.4"/><path d="M276.5 116.4L282.5 114.1L277.7 112.5L271.7 114.8Z" stroke="#000" stroke-width="1.45" fill="none" stroke-linecap="round" stroke-linejoin="round"/><polygon points="276.5,130.6 271.8,129.0 271.7,114.8 276.5,116.4" fill="#8c8c8c" stroke="#8c8c8c" stroke-width="0.4"/><path d="M271.8 129.0L271.7 114.8M276.5 116.4L276.5 130.6M274.1 129.8L274.1 115.6" stroke="#000" stroke-width="1.45" fill="none" stroke-linecap="round" stroke-linejoin="round"/><polygon points="260.9,119.0 274.9,113.6 270.5,112.2 256.5,117.5" fill="#2a2a2a" stroke="#2a2a2a" stroke-width="0.4"/><path d="M260.9 119.0L274.9 113.6M270.5 112.2L256.5 117.5" stroke="#000" stroke-width="1.8" fill="none" stroke-linecap="round" stroke-linejoin="round"/><polygon points="261.0,126.6 274.9,121.2 274.9,113.6 260.9,119.0" fill="#fafafa" stroke="#fafafa" stroke-width="0.4"/><path d="M261.0 126.6L274.9 121.2M274.9 113.6L260.9 119.0" stroke="#000" stroke-width="1.8" fill="none" stroke-linecap="round" stroke-linejoin="round"/><polygon points="265.5,149.3 271.6,146.6 271.6,132.6 265.4,135.1" fill="#dedede" stroke="#dedede" stroke-width="0.4"/><path d="M271.6 146.6L271.6 132.6M265.4 135.1L265.5 149.3M268.6 147.9L268.5 133.9" stroke="#000" stroke-width="1.45" fill="none" stroke-linecap="round" stroke-linejoin="round"/><polygon points="265.5,149.3 260.8,147.5 260.6,133.5 265.4,135.1" fill="#8c8c8c" stroke="#8c8c8c" stroke-width="0.4"/><path d="M260.8 147.5L260.6 133.5M265.4 135.1L265.5 149.3M263.2 148.4L263.0 134.3" stroke="#000" stroke-width="1.45" fill="none" stroke-linecap="round" stroke-linejoin="round"/><polygon points="183.9,124.6 188.8,122.9 176.3,118.2 171.4,119.8" fill="#f4f4f4" stroke="#f4f4f4" stroke-width="0.4"/><path d="M188.8 122.9L176.3 118.2M171.4 119.8L183.9 124.6" stroke="#000" stroke-width="1.8" fill="none" stroke-linecap="round" stroke-linejoin="round"/><polygon points="265.4,135.1 271.6,132.6 271.5,118.3 265.3,120.7" fill="#dedede" stroke="#dedede" stroke-width="0.4"/><path d="M271.6 132.6L271.5 118.3M265.3 120.7L265.4 135.1M268.5 133.9L268.4 119.5" stroke="#000" stroke-width="1.45" fill="none" stroke-linecap="round" stroke-linejoin="round"/><polygon points="184.4,132.4 171.9,127.5 171.4,119.8 183.9,124.6" fill="#bebebe" stroke="#bebebe" stroke-width="0.4"/><path d="M184.4 132.4L171.9 127.5M171.4 119.8L183.9 124.6" stroke="#000" stroke-width="1.8" fill="none" stroke-linecap="round" stroke-linejoin="round"/><polygon points="265.3,120.7 271.5,118.3 266.7,116.8 260.5,119.1" fill="#c4c4c4" stroke="#c4c4c4" stroke-width="0.4"/><path d="M265.3 120.7L271.5 118.3L266.7 116.8L260.5 119.1Z" stroke="#000" stroke-width="1.45" fill="none" stroke-linecap="round" stroke-linejoin="round"/><polygon points="265.4,135.1 260.6,133.5 260.5,119.1 265.3,120.7" fill="#8c8c8c" stroke="#8c8c8c" stroke-width="0.4"/><path d="M260.6 133.5L260.5 119.1M265.3 120.7L265.4 135.1M263.0 134.3L262.9 119.9" stroke="#000" stroke-width="1.45" fill="none" stroke-linecap="round" stroke-linejoin="round"/><polygon points="246.3,124.6 260.9,119.0 256.5,117.5 241.8,123.0" fill="#2a2a2a" stroke="#2a2a2a" stroke-width="0.4"/><path d="M246.3 124.6L260.9 119.0M256.5 117.5L241.8 123.0" stroke="#000" stroke-width="1.8" fill="none" stroke-linecap="round" stroke-linejoin="round"/><polygon points="246.4,132.4 261.0,126.6 260.9,119.0 246.3,124.6" fill="#fafafa" stroke="#fafafa" stroke-width="0.4"/><path d="M246.4 132.4L261.0 126.6M260.9 119.0L246.3 124.6" stroke="#000" stroke-width="1.8" fill="none" stroke-linecap="round" stroke-linejoin="round"/><polygon points="196.9,129.6 201.8,127.8 188.8,122.9 183.9,124.6" fill="#f4f4f4" stroke="#f4f4f4" stroke-width="0.4"/><path d="M201.8 127.8L188.8 122.9M183.9 124.6L196.9 129.6" stroke="#000" stroke-width="1.8" fill="none" stroke-linecap="round" stroke-linejoin="round"/><polygon points="197.3,137.6 184.4,132.4 183.9,124.6 196.9,129.6" fill="#bebebe" stroke="#bebebe" stroke-width="0.4"/><path d="M197.3 137.6L184.4 132.4M183.9 124.6L196.9 129.6" stroke="#000" stroke-width="1.8" fill="none" stroke-linecap="round" stroke-linejoin="round"/><polygon points="230.9,130.4 246.3,124.6 241.8,123.0 226.5,128.8" fill="#2a2a2a" stroke="#2a2a2a" stroke-width="0.4"/><path d="M230.9 130.4L246.3 124.6M241.8 123.0L226.5 128.8" stroke="#000" stroke-width="1.8" fill="none" stroke-linecap="round" stroke-linejoin="round"/><polygon points="231.2,138.4 246.4,132.4 246.3,124.6 230.9,130.4" fill="#fafafa" stroke="#fafafa" stroke-width="0.4"/><path d="M231.2 138.4L246.4 132.4M246.3 124.6L230.9 130.4" stroke="#000" stroke-width="1.8" fill="none" stroke-linecap="round" stroke-linejoin="round"/><polygon points="210.4,134.8 215.3,133.0 201.8,127.8 196.9,129.6" fill="#f4f4f4" stroke="#f4f4f4" stroke-width="0.4"/><path d="M215.3 133.0L201.8 127.8M196.9 129.6L210.4 134.8" stroke="#000" stroke-width="1.8" fill="none" stroke-linecap="round" stroke-linejoin="round"/><polygon points="210.8,142.9 197.3,137.6 196.9,129.6 210.4,134.8" fill="#bebebe" stroke="#bebebe" stroke-width="0.4"/><path d="M210.8 142.9L197.3 137.6M196.9 129.6L210.4 134.8" stroke="#000" stroke-width="1.8" fill="none" stroke-linecap="round" stroke-linejoin="round"/><polygon points="214.8,136.5 230.9,130.4 226.5,128.8 210.4,134.8" fill="#2a2a2a" stroke="#2a2a2a" stroke-width="0.4"/><path d="M214.8 136.5L230.9 130.4M226.5 128.8L210.4 134.8" stroke="#000" stroke-width="1.8" fill="none" stroke-linecap="round" stroke-linejoin="round"/><polygon points="215.2,144.7 231.2,138.4 230.9,130.4 214.8,136.5" fill="#fafafa" stroke="#fafafa" stroke-width="0.4"/><path d="M215.2 144.7L231.2 138.4M230.9 130.4L214.8 136.5" stroke="#000" stroke-width="1.8" fill="none" stroke-linecap="round" stroke-linejoin="round"/><polygon points="215.2,144.7 210.8,142.9 210.4,134.8 214.8,136.5" fill="#d0d0d0" stroke="#d0d0d0" stroke-width="0.4"/><path d="M215.2 144.7L210.8 142.9L210.4 134.8L214.8 136.5Z" stroke="#000" stroke-width="1.8" fill="none" stroke-linecap="round" stroke-linejoin="round"/><path d="M213.9 114.5L388.0 53.9" stroke="#000" stroke-width="0.9" fill="none"/><path d="M214.8 134.5L213.8 112.4" stroke="#000" stroke-width="0.9" fill="none"/><path d="M386.8 69.4L388.1 52.3" stroke="#000" stroke-width="0.9" fill="none"/><text transform="matrix(0.5154 -0.1775 -0.0195 0.7861 313.87 77.52)" font-family="Liberation Sans" font-size="20.0" text-anchor="middle" fill="#000">70.00</text><path d="M363.2 66.9L232.3 36.9" stroke="#000" stroke-width="0.9" fill="none"/><path d="M232.7 49.4L232.3 35.4" stroke="#000" stroke-width="0.9" fill="none"/><path d="M362.4 81.5L363.3 65.2" stroke="#000" stroke-width="0.9" fill="none"/><text transform="matrix(0.5200 0.1180 -0.0065 0.6771 291.97 48.63)" font-family="Liberation Sans" font-size="20.0" text-anchor="middle" fill="#000">53.00</text><path d="M356.2 111.8L384.6 99.4" stroke="#000" stroke-width="0.9" fill="none"/><path d="M386.1 78.9L384.5 101.0" stroke="#000" stroke-width="0.9" fill="none"/><text transform="matrix(0.4029 -0.1746 -0.0433 0.6693 370.81 103.92)" font-family="Liberation Sans" font-size="20.0" text-anchor="middle" fill="#000">15.00</text><path d="M245.2 127.4L248.8 286.0" stroke="#000" stroke-width="0.9" fill="none"/><path d="M247.3 286.9L264.1 276.3" stroke="#000" stroke-width="0.9" fill="none"/><path d="M243.5 128.0L262.5 120.7" stroke="#000" stroke-width="0.9" fill="none"/><text transform="matrix(-0.0180 -0.7497 0.6108 -0.3159 245.53 212.20)" font-family="Liberation Sans" font-size="20.0" text-anchor="middle" fill="#000">45.00</text><path d="M280.9 201.3L344.0 167.9" stroke="#000" stroke-width="0.9" fill="none"/><text transform="matrix(0.4808 -0.2532 -0.0184 0.6815 314.35 181.99)" font-family="Liberation Sans" font-size="20.0" text-anchor="middle" fill="#000">28.00</text><path d="M379.4 87.5L369.7 226.8" stroke="#000" stroke-width="0.9" fill="none"/><path d="M381.2 87.9L363.7 83.6" stroke="#000" stroke-width="0.9" fill="none"/><path d="M371.3 227.5L355.6 220.9" stroke="#000" stroke-width="0.9" fill="none"/><text transform="matrix(0.0467 -0.6585 0.6043 0.2054 375.70 161.12)" font-family="Liberation Sans" font-size="20.0" text-anchor="middle" fill="#000">45.00</text><path d="M15.3 250.3L36.4 257.5V230.4M36.4 257.5L54.9 249.9" stroke="#5e5e5e" stroke-width="1.1" fill="none"/><text x="38.5" y="230.5" font-family="Liberation Sans" font-size="13" fill="#5e5e5e">z</text><text x="17.5" y="249.5" font-family="Liberation Sans" font-size="13" fill="#5e5e5e">y</text><text x="57.5" y="250.5" font-family="Liberation Sans" font-size="13" fill="#5e5e5e">x</text><path d="M0 0H91V14L87 18H0Z" fill="#c9cdd6" opacity="0.96"/><text x="7.5" y="13" font-family="Liberation Sans" font-weight="bold" font-size="11.5" fill="#45475a">Perspective</text><path d="M80.5 2V16.5" stroke="#444" stroke-width="1"/><path d="M82.5 7.5h7l-3.5 4z" fill="#444"/></svg>
<div class="a" style="left:1215px;top:204px;width:225px;height:1px;background:#c9d0e4"></div>
<div class="a" style="left:1215px;top:206px;width:225px;height:1px;background:#c9d0e4"></div>
<div class="a" style="left:1214px;top:229px;width:226px;height:582px;background:#f5f6fa;border:1px solid #bcc6e0;border-right:none"></div>
<svg style="left:1205px;top:200px" width="235" height="32"><path d="M180.5 29.5V14Q180.5 9.5 185.0 9.5H201.5Q204.5 9.5 207.5 12.5L225.5 29.5Z" fill="#dcdde2" stroke="#c3cce2"/><path d="M146.5 29.5V14Q146.5 9.5 151.0 9.5H167.5Q170.5 9.5 173.5 12.5L191.5 29.5Z" fill="#dcdde2" stroke="#c3cce2"/><path d="M112.5 29.5V14Q112.5 9.5 117.0 9.5H133.5Q136.5 9.5 139.5 12.5L157.5 29.5Z" fill="#dcdde2" stroke="#c3cce2"/><path d="M78.5 29.5V14Q78.5 9.5 83.0 9.5H99.5Q102.5 9.5 105.5 12.5L123.5 29.5Z" fill="#dcdde2" stroke="#c3cce2"/><path d="M44.5 29.5V14Q44.5 9.5 49.0 9.5H65.5Q68.5 9.5 71.5 12.5L89.5 29.5Z" fill="#dcdde2" stroke="#c3cce2"/><path d="M9.500 30V13.500L13.500 9.500H30.500L50.500 29.500" fill="#eceef3" stroke="#c3cce2"/><path d="M10 29.700H50" stroke="#f0f1f6" stroke-width="1.500"/></svg>
<div class="a" style="left:1219px;top:234px;width:26px;height:26px;background:#c4d5ea;border:1px solid #2a6fb5"></div>
<div class="a" style="left:1249px;top:234px;width:26px;height:26px;background:#dcdcdc;border:1px solid #c8c8c8"></div>
<div class="a" style="left:1218px;top:265px;width:215px;height:482px;background:#f7f8fb;border:1px solid #e6e8ef"></div>
<div class="a" style="left:1221.06px;top:270.07px;font-size:13.5px;line-height:17px;height:17px;letter-spacing:0.278px;">Viewport</div>
<div class="a" style="left:1218px;top:290px;width:215px;height:1px;background:#e6e8ef"></div>
<div class="a" style="left:1219px;top:291px;width:18px;height:20px;background:#f3f4f8"></div>
<div class="a" style="left:1237px;top:291px;width:88px;height:20px;background:#fff"></div>
<div class="a" style="left:1325px;top:291px;width:1px;height:20px;background:#e6e8ef"></div>
<div class="a" style="left:1326px;top:291px;width:106px;height:20px;background:#fff"></div>
<div class="a" style="left:1240.16px;top:294.69px;font-size:12px;line-height:15px;height:15px;letter-spacing:-0.145px;">Title</div>
<div class="a" style="left:1329.16px;top:294.69px;font-size:12px;line-height:15px;height:15px;letter-spacing:-0.002px;">Right</div>
<div class="a" style="left:1218px;top:311px;width:215px;height:1px;background:#e6e8ef"></div>
<div class="a" style="left:1219px;top:312px;width:18px;height:20px;background:#f3f4f8"></div>
<div class="a" style="left:1237px;top:312px;width:88px;height:20px;background:#fff"></div>
<div class="a" style="left:1325px;top:312px;width:1px;height:20px;background:#e6e8ef"></div>
<div class="a" style="left:1326px;top:312px;width:106px;height:20px;background:#fff"></div>
<div class="a" style="left:1240.16px;top:315.69px;font-size:12px;line-height:15px;height:15px;letter-spacing:-0.035px;">Width</div>
<div class="a" style="left:1329.16px;top:315.69px;font-size:12px;line-height:15px;height:15px;letter-spacing:-0.673px;">555</div>
<div class="a" style="left:1218px;top:332px;width:215px;height:1px;background:#e6e8ef"></div>
<div class="a" style="left:1219px;top:333px;width:18px;height:20px;background:#f3f4f8"></div>
<div class="a" style="left:1237px;top:333px;width:88px;height:20px;background:#fff"></div>
<div class="a" style="left:1325px;top:333px;width:1px;height:20px;background:#e6e8ef"></div>
<div class="a" style="left:1326px;top:333px;width:106px;height:20px;background:#fff"></div>
<div class="a" style="left:1240.16px;top:336.69px;font-size:12px;line-height:15px;height:15px;letter-spacing:0.136px;">Height</div>
<div class="a" style="left:1329.16px;top:336.69px;font-size:12px;line-height:15px;height:15px;letter-spacing:-0.673px;">292</div>
<div class="a" style="left:1218px;top:353px;width:215px;height:1px;background:#e6e8ef"></div>
<div class="a" style="left:1219px;top:354px;width:18px;height:20px;background:#f3f4f8"></div>
<div class="a" style="left:1237px;top:354px;width:88px;height:20px;background:#fff"></div>
<div class="a" style="left:1325px;top:354px;width:1px;height:20px;background:#e6e8ef"></div>
<div class="a" style="left:1326px;top:354px;width:106px;height:20px;background:#fff"></div>
<div class="a" style="left:1240.16px;top:357.69px;font-size:12px;line-height:15px;height:15px;letter-spacing:0.014px;">Projection</div>
<div class="a" style="left:1329.16px;top:357.69px;font-size:12px;line-height:15px;height:15px;letter-spacing:-0.315px;">Parallel</div>
<div class="a" style="left:1412px;top:354px;width:20px;height:20px;background:#dcdcdc;border:1px solid #adadad"></div>
<svg style="left:1412px;top:354px" width="20" height="20"><path d="M6 8.500l4 4 4-4" stroke="#444" stroke-width="1.1" fill="none"/></svg>
<div class="a" style="left:1218px;top:374px;width:215px;height:1px;background:#e6e8ef"></div>
<div class="a" style="left:1221.06px;top:380.07px;font-size:13.5px;line-height:17px;height:17px;letter-spacing:-0.335px;">Camera</div>
<div class="a" style="left:1218px;top:400px;width:215px;height:1px;background:#e6e8ef"></div>
<div class="a" style="left:1219px;top:401px;width:18px;height:20px;background:#f3f4f8"></div>
<div class="a" style="left:1237px;top:401px;width:88px;height:20px;background:#fff"></div>
<div class="a" style="left:1325px;top:401px;width:1px;height:20px;background:#e6e8ef"></div>
<div class="a" style="left:1326px;top:401px;width:106px;height:20px;background:#e9ebf0"></div>
<div class="a" style="left:1240.16px;top:404.69px;font-size:12px;line-height:15px;height:15px;color:#6d6d6d;letter-spacing:-0.277px;">Lens Length</div>
<div class="a" style="left:1329.16px;top:404.69px;font-size:12px;line-height:15px;height:15px;color:#6d6d6d;letter-spacing:-0.713px;">50.0</div>
<div class="a" style="left:1218px;top:421px;width:215px;height:1px;background:#e6e8ef"></div>
<div class="a" style="left:1219px;top:422px;width:18px;height:20px;background:#f3f4f8"></div>
<div class="a" style="left:1237px;top:422px;width:88px;height:20px;background:#fff"></div>
<div class="a" style="left:1325px;top:422px;width:1px;height:20px;background:#e6e8ef"></div>
<div class="a" style="left:1326px;top:422px;width:106px;height:20px;background:#fff"></div>
<div class="a" style="left:1240.16px;top:425.69px;font-size:12px;line-height:15px;height:15px;letter-spacing:-0.024px;">Rotation</div>
<div class="a" style="left:1329.16px;top:425.69px;font-size:12px;line-height:15px;height:15px;letter-spacing:-0.893px;">0.0</div>
<div class="a" style="left:1218px;top:442px;width:215px;height:1px;background:#e6e8ef"></div>
<div class="a" style="left:1219px;top:443px;width:18px;height:20px;background:#f3f4f8"></div>
<div class="a" style="left:1237px;top:443px;width:88px;height:20px;background:#fff"></div>
<div class="a" style="left:1325px;top:443px;width:1px;height:20px;background:#e6e8ef"></div>
<div class="a" style="left:1326px;top:443px;width:106px;height:20px;background:#fff"></div>
<div class="a" style="left:1240.16px;top:446.69px;font-size:12px;line-height:15px;height:15px;letter-spacing:-0.170px;">X Location</div>
<div class="a" style="left:1329.16px;top:446.69px;font-size:12px;line-height:15px;height:15px;letter-spacing:-0.617px;">82.245</div>
<div class="a" style="left:1218px;top:463px;width:215px;height:1px;background:#e6e8ef"></div>
<div class="a" style="left:1219px;top:464px;width:18px;height:20px;background:#f3f4f8"></div>
<div class="a" style="left:1237px;top:464px;width:88px;height:20px;background:#fff"></div>
<div class="a" style="left:1325px;top:464px;width:1px;height:20px;background:#e6e8ef"></div>
<div class="a" style="left:1326px;top:464px;width:106px;height:20px;background:#fff"></div>
<div class="a" style="left:1240.16px;top:467.69px;font-size:12px;line-height:15px;height:15px;letter-spacing:-0.149px;">Y Location</div>
<div class="a" style="left:1329.16px;top:467.69px;font-size:12px;line-height:15px;height:15px;letter-spacing:-0.401px;">-11.464</div>
<div class="a" style="left:1218px;top:484px;width:215px;height:1px;background:#e6e8ef"></div>
<div class="a" style="left:1219px;top:485px;width:18px;height:20px;background:#f3f4f8"></div>
<div class="a" style="left:1237px;top:485px;width:88px;height:20px;background:#fff"></div>
<div class="a" style="left:1325px;top:485px;width:1px;height:20px;background:#e6e8ef"></div>
<div class="a" style="left:1326px;top:485px;width:106px;height:20px;background:#fff"></div>
<div class="a" style="left:1240.16px;top:488.69px;font-size:12px;line-height:15px;height:15px;letter-spacing:-0.103px;">Z Location</div>
<div class="a" style="left:1329.16px;top:488.69px;font-size:12px;line-height:15px;height:15px;letter-spacing:-0.528px;">-19.933</div>
<div class="a" style="left:1218px;top:505px;width:215px;height:1px;background:#e6e8ef"></div>
<div class="a" style="left:1219px;top:506px;width:18px;height:20px;background:#f3f4f8"></div>
<div class="a" style="left:1237px;top:506px;width:88px;height:20px;background:#fff"></div>
<div class="a" style="left:1325px;top:506px;width:1px;height:20px;background:#e6e8ef"></div>
<div class="a" style="left:1326px;top:506px;width:106px;height:20px;background:#e9ebf0"></div>
<div class="a" style="left:1240.16px;top:509.69px;font-size:12px;line-height:15px;height:15px;letter-spacing:-0.225px;">Distance to Ta...</div>
<div class="a" style="left:1329.16px;top:509.69px;font-size:12px;line-height:15px;height:15px;letter-spacing:-0.617px;">82.245</div>
<div class="a" style="left:1218px;top:526px;width:215px;height:1px;background:#e6e8ef"></div>
<div class="a" style="left:1219px;top:527px;width:18px;height:20px;background:#f3f4f8"></div>
<div class="a" style="left:1237px;top:527px;width:88px;height:20px;background:#fff"></div>
<div class="a" style="left:1325px;top:527px;width:1px;height:20px;background:#e6e8ef"></div>
<div class="a" style="left:1326px;top:527px;width:106px;height:20px;background:#fff"></div>
<div class="a" style="left:1240.16px;top:530.69px;font-size:12px;line-height:15px;height:15px;letter-spacing:-0.046px;">Location</div>
<div class="a" style="left:1327px;top:527px;width:105px;height:19px;background:#e1e1e1;border:1px solid #adadad"></div>
<div class="a" style="left:1361.16px;top:530.39px;font-size:12px;line-height:15px;height:15px;letter-spacing:-0.377px;">Place...</div>
<div class="a" style="left:1218px;top:547px;width:215px;height:1px;background:#e6e8ef"></div>
<div class="a" style="left:1221.06px;top:553.07px;font-size:13.5px;line-height:17px;height:17px;letter-spacing:-0.086px;">Target</div>
<div class="a" style="left:1218px;top:573px;width:215px;height:1px;background:#e6e8ef"></div>
<div class="a" style="left:1219px;top:574px;width:18px;height:20px;background:#f3f4f8"></div>
<div class="a" style="left:1237px;top:574px;width:88px;height:20px;background:#fff"></div>
<div class="a" style="left:1325px;top:574px;width:1px;height:20px;background:#e6e8ef"></div>
<div class="a" style="left:1326px;top:574px;width:106px;height:20px;background:#fff"></div>
<div class="a" style="left:1240.16px;top:577.69px;font-size:12px;line-height:15px;height:15px;letter-spacing:-0.309px;">X Target</div>
<div class="a" style="left:1329.16px;top:577.69px;font-size:12px;line-height:15px;height:15px;letter-spacing:-0.893px;">0.0</div>
<div class="a" style="left:1218px;top:594px;width:215px;height:1px;background:#e6e8ef"></div>
<div class="a" style="left:1219px;top:595px;width:18px;height:20px;background:#f3f4f8"></div>
<div class="a" style="left:1237px;top:595px;width:88px;height:20px;background:#fff"></div>
<div class="a" style="left:1325px;top:595px;width:1px;height:20px;background:#e6e8ef"></div>
<div class="a" style="left:1326px;top:595px;width:106px;height:20px;background:#fff"></div>
<div class="a" style="left:1240.16px;top:598.69px;font-size:12px;line-height:15px;height:15px;letter-spacing:-0.281px;">Y Target</div>
<div class="a" style="left:1329.16px;top:598.69px;font-size:12px;line-height:15px;height:15px;letter-spacing:-0.401px;">-11.464</div>
<div class="a" style="left:1218px;top:615px;width:215px;height:1px;background:#e6e8ef"></div>
<div class="a" style="left:1219px;top:616px;width:18px;height:20px;background:#f3f4f8"></div>
<div class="a" style="left:1237px;top:616px;width:88px;height:20px;background:#fff"></div>
<div class="a" style="left:1325px;top:616px;width:1px;height:20px;background:#e6e8ef"></div>
<div class="a" style="left:1326px;top:616px;width:106px;height:20px;background:#fff"></div>
<div class="a" style="left:1240.16px;top:619.69px;font-size:12px;line-height:15px;height:15px;letter-spacing:-0.224px;">Z Target</div>
<div class="a" style="left:1329.16px;top:619.69px;font-size:12px;line-height:15px;height:15px;letter-spacing:-0.528px;">-19.933</div>
<div class="a" style="left:1218px;top:636px;width:215px;height:1px;background:#e6e8ef"></div>
<div class="a" style="left:1219px;top:637px;width:18px;height:20px;background:#f3f4f8"></div>
<div class="a" style="left:1237px;top:637px;width:88px;height:20px;background:#fff"></div>
<div class="a" style="left:1325px;top:637px;width:1px;height:20px;background:#e6e8ef"></div>
<div class="a" style="left:1326px;top:637px;width:106px;height:20px;background:#fff"></div>
<div class="a" style="left:1240.16px;top:640.69px;font-size:12px;line-height:15px;height:15px;letter-spacing:-0.046px;">Location</div>
<div class="a" style="left:1327px;top:637px;width:105px;height:19px;background:#e1e1e1;border:1px solid #adadad"></div>
<div class="a" style="left:1361.16px;top:640.39px;font-size:12px;line-height:15px;height:15px;letter-spacing:-0.377px;">Place...</div>
<div class="a" style="left:1218px;top:657px;width:215px;height:1px;background:#e6e8ef"></div>
<div class="a" style="left:1221.06px;top:663.07px;font-size:13.5px;line-height:17px;height:17px;letter-spacing:-0.030px;">Wallpaper</div>
<div class="a" style="left:1218px;top:683px;width:215px;height:1px;background:#e6e8ef"></div>
<div class="a" style="left:1219px;top:684px;width:18px;height:20px;background:#f3f4f8"></div>
<div class="a" style="left:1237px;top:684px;width:88px;height:20px;background:#fff"></div>
<div class="a" style="left:1325px;top:684px;width:1px;height:20px;background:#e6e8ef"></div>
<div class="a" style="left:1326px;top:684px;width:106px;height:20px;background:#fff"></div>
<div class="a" style="left:1240.16px;top:687.69px;font-size:12px;line-height:15px;height:15px;letter-spacing:-0.169px;">Filename</div>
<div class="a" style="left:1329.16px;top:687.69px;font-size:12px;line-height:15px;height:15px;letter-spacing:-0.114px;">(none)</div>
<div class="a" style="left:1413px;top:684px;width:19px;height:19px;background:#e1e1e1;border:1px solid #adadad"></div>
<div class="a" style="left:1417.16px;top:686.09px;font-size:12px;line-height:15px;height:15px;letter-spacing:-0.334px;">...</div>
<div class="a" style="left:1218px;top:704px;width:215px;height:1px;background:#e6e8ef"></div>
<div class="a" style="left:1219px;top:705px;width:18px;height:20px;background:#f3f4f8"></div>
<div class="a" style="left:1237px;top:705px;width:88px;height:20px;background:#fff"></div>
<div class="a" style="left:1325px;top:705px;width:1px;height:20px;background:#e6e8ef"></div>
<div class="a" style="left:1326px;top:705px;width:106px;height:20px;background:#fff"></div>
<div class="a" style="left:1240.16px;top:708.69px;font-size:12px;line-height:15px;height:15px;letter-spacing:-0.254px;">Show</div>
<svg style="left:1327px;top:708px" width="14" height="14"><rect x="0.5" y="0.5" width="12" height="12" fill="#fff" stroke="#333"/><path d="M3 6.5l2.600 2.600L10 4" stroke="#222" stroke-width="1.2" fill="none"/></svg>
<div class="a" style="left:1218px;top:725px;width:215px;height:1px;background:#e6e8ef"></div>
<div class="a" style="left:1219px;top:726px;width:18px;height:20px;background:#f3f4f8"></div>
<div class="a" style="left:1237px;top:726px;width:88px;height:20px;background:#fff"></div>
<div class="a" style="left:1325px;top:726px;width:1px;height:20px;background:#e6e8ef"></div>
<div class="a" style="left:1326px;top:726px;width:106px;height:20px;background:#fff"></div>
<div class="a" style="left:1240.16px;top:729.69px;font-size:12px;line-height:15px;height:15px;letter-spacing:-0.376px;">Gray</div>
<svg style="left:1327px;top:729px" width="14" height="14"><rect x="0.5" y="0.5" width="12" height="12" fill="#fff" stroke="#333"/><path d="M3 6.5l2.600 2.600L10 4" stroke="#222" stroke-width="1.2" fill="none"/></svg>
<div class="a" style="left:1218px;top:746px;width:215px;height:1px;background:#e6e8ef"></div>
<div class="a" style="left:1142.63px;top:775.99px;font-size:19.5px;line-height:24px;height:24px;color:rgba(100,100,100,0.36);letter-spacing:0.101px;">Activate Windows</div>
<div class="a" style="left:1142.98px;top:801.23px;font-size:14.5px;line-height:18px;height:18px;color:rgba(100,100,100,0.36);letter-spacing:0.175px;">Go to Settings to activate Windows.</div>
<svg style="left:80px;top:793px" width="260" height="22"><path d="M204 2.500L209.5 17.5Q210.5 19.5 213 19.5H225Q228 19.5 228 16.5V2.500Z" fill="#f1f2f7" stroke="#c3cce2"/><path d="M117 2.500L122.5 17.5Q123.5 19.5 126 19.5H155Q158 19.5 158 16.5V2.500Z" fill="#dcdde2" stroke="#c3cce2"/><path d="M82 2.500L87.5 17.5Q88.5 19.5 91 19.5H113Q116 19.5 116 16.5V2.500Z" fill="#dcdde2" stroke="#c3cce2"/><path d="M8 2.500L13.5 17.5Q14.5 19.5 17 19.5H78Q81 19.5 81 16.5V2.500Z" fill="#dcdde2" stroke="#c3cce2"/><path d="M159 2.500L164.5 17.5Q165.5 19.5 168 19.5H200Q203 19.5 203 16.5V2.500Z" fill="#f1f2f7" stroke="#c3cce2"/><path d="M212.500 8.500h3v-3h2v3h3v2h-3v3h-2v-3h-3z" fill="none" stroke="#777" stroke-width="0.9"/></svg>
<div class="a" style="left:96.66px;top:797.39px;font-size:12px;line-height:15px;height:15px;letter-spacing:-0.290px;">Perspective</div>
<div class="a" style="left:170.66px;top:797.39px;font-size:12px;line-height:15px;height:15px;letter-spacing:0.051px;">Top</div>
<div class="a" style="left:205.66px;top:797.39px;font-size:12px;line-height:15px;height:15px;letter-spacing:-0.101px;">Front</div>
<div class="a" style="left:248.66px;top:797.39px;font-size:12px;line-height:15px;height:15px;letter-spacing:-0.102px;">Right</div>
<div class="a" style="left:3px;top:822px;width:1px;height:16px;background:#c9d0e4"></div>
<div class="a" style="left:5px;top:822px;width:1px;height:16px;background:#c9d0e4"></div>
<svg style="left:9px;top:823px" width="14" height="14"><rect x="0.500" y="0.500" width="12" height="12" fill="#fff" stroke="#333"/><path d="M3 6.500l2.600 2.600L10 4" stroke="#222" stroke-width="1.2" fill="none"/></svg>
<div class="a" style="left:24.66px;top:823.09px;font-size:12px;line-height:15px;height:15px;letter-spacing:-0.617px;">End</div>
<svg style="left:52px;top:823px" width="14" height="14"><rect x="0.500" y="0.500" width="12" height="12" fill="#fff" stroke="#333"/><path d="M3 6.500l2.600 2.600L10 4" stroke="#222" stroke-width="1.2" fill="none"/></svg>
<div class="a" style="left:67.46px;top:823.09px;font-size:12px;line-height:15px;height:15px;letter-spacing:-0.377px;">Near</div>
<svg style="left:100px;top:823px" width="14" height="14"><rect x="0.500" y="0.500" width="12" height="12" fill="#fff" stroke="#333"/><path d="M3 6.500l2.600 2.600L10 4" stroke="#222" stroke-width="1.2" fill="none"/></svg>
<div class="a" style="left:115.46px;top:823.09px;font-size:12px;line-height:15px;height:15px;letter-spacing:0.030px;">Point</div>
<svg style="left:151px;top:823px" width="14" height="14"><rect x="0.500" y="0.500" width="12" height="12" fill="#fff" stroke="#333"/><path d="M3 6.500l2.600 2.600L10 4" stroke="#222" stroke-width="1.2" fill="none"/></svg>
<div class="a" style="left:166.46px;top:823.09px;font-size:12px;line-height:15px;height:15px;letter-spacing:0.222px;">Mid</div>
<svg style="left:195px;top:823px" width="14" height="14"><rect x="0.500" y="0.500" width="12" height="12" fill="#fff" stroke="#333"/><path d="M3 6.500l2.600 2.600L10 4" stroke="#222" stroke-width="1.2" fill="none"/></svg>
<div class="a" style="left:210.46px;top:823.09px;font-size:12px;line-height:15px;height:15px;letter-spacing:-0.504px;">Cen</div>
<svg style="left:239px;top:823px" width="14" height="14"><rect x="0.500" y="0.500" width="12" height="12" fill="#fff" stroke="#333"/><path d="M3 6.500l2.600 2.600L10 4" stroke="#222" stroke-width="1.2" fill="none"/></svg>
<div class="a" style="left:254.46px;top:823.09px;font-size:12px;line-height:15px;height:15px;letter-spacing:0.053px;">Int</div>
<svg style="left:276px;top:823px" width="14" height="14"><rect x="0.500" y="0.500" width="12" height="12" fill="#fff" stroke="#333"/><path d="M3 6.500l2.600 2.600L10 4" stroke="#222" stroke-width="1.2" fill="none"/></svg>
<div class="a" style="left:291.46px;top:823.09px;font-size:12px;line-height:15px;height:15px;letter-spacing:-0.337px;">Perp</div>
<svg style="left:323px;top:823px" width="14" height="14"><rect x="0.500" y="0.500" width="12" height="12" fill="#fff" stroke="#333"/><path d="M3 6.500l2.600 2.600L10 4" stroke="#222" stroke-width="1.2" fill="none"/></svg>
<div class="a" style="left:338.66px;top:823.09px;font-size:12px;line-height:15px;height:15px;letter-spacing:-0.615px;">Tan</div>
<svg style="left:365.5px;top:823px" width="14" height="14"><rect x="0.500" y="0.500" width="12" height="12" fill="#fff" stroke="#333"/><path d="M3 6.500l2.600 2.600L10 4" stroke="#222" stroke-width="1.2" fill="none"/></svg>
<div class="a" style="left:380.66px;top:823.09px;font-size:12px;line-height:15px;height:15px;letter-spacing:-0.213px;">Quad</div>
<svg style="left:417.5px;top:823px" width="14" height="14"><rect x="0.500" y="0.500" width="12" height="12" fill="#fff" stroke="#333"/><path d="M3 6.500l2.600 2.600L10 4" stroke="#222" stroke-width="1.2" fill="none"/></svg>
<div class="a" style="left:432.66px;top:823.09px;font-size:12px;line-height:15px;height:15px;letter-spacing:-0.046px;">Knot</div>
<svg style="left:465.5px;top:823px" width="14" height="14"><rect x="0.500" y="0.500" width="12" height="12" fill="#fff" stroke="#333"/><path d="M3 6.500l2.600 2.600L10 4" stroke="#222" stroke-width="1.2" fill="none"/></svg>
<div class="a" style="left:480.66px;top:823.09px;font-size:12px;line-height:15px;height:15px;letter-spacing:-0.503px;">Vertex</div>
<svg style="left:523px;top:825px" width="12" height="12"><rect x="0.500" y="0.500" width="10" height="10" fill="#e0e0e3" stroke="#c2c2c6"/></svg>
<div class="a" style="left:536.66px;top:823.09px;font-size:12px;line-height:15px;height:15px;letter-spacing:-0.049px;">Project</div>
<svg style="left:590px;top:825px" width="12" height="12"><rect x="0.500" y="0.500" width="10" height="10" fill="#e0e0e3" stroke="#c2c2c6"/></svg>
<div class="a" style="left:604.66px;top:823.09px;font-size:12px;line-height:15px;height:15px;letter-spacing:-0.288px;">Disable</div>
<div class="a" style="left:0;top:840px;width:1440px;height:21px;background:#eff1f7;border-top:1px solid #c5cde0"></div>
<div class="a" style="left:49px;top:841px;width:1px;height:19px;background:#c5cde0"></div>
<div class="a" style="left:137px;top:841px;width:1px;height:19px;background:#c5cde0"></div>
<div class="a" style="left:225px;top:841px;width:1px;height:19px;background:#c5cde0"></div>
<div class="a" style="left:313px;top:841px;width:1px;height:19px;background:#c5cde0"></div>
<div class="a" style="left:401px;top:841px;width:1px;height:19px;background:#c5cde0"></div>
<div class="a" style="left:569px;top:841px;width:1px;height:19px;background:#c5cde0"></div>
<div class="a" style="left:634px;top:841px;width:1px;height:19px;background:#c5cde0"></div>
<div class="a" style="left:635px;top:841px;width:44px;height:19px;background:#e3effb"></div>
<div class="a" style="left:679px;top:841px;width:1px;height:19px;background:#c5cde0"></div>
<div class="a" style="left:727px;top:841px;width:1px;height:19px;background:#c5cde0"></div>
<div class="a" style="left:728px;top:841px;width:46px;height:19px;background:#e3effb"></div>
<div class="a" style="left:774px;top:841px;width:1px;height:19px;background:#c5cde0"></div>
<div class="a" style="left:775px;top:841px;width:73px;height:19px;background:#e3effb"></div>
<div class="a" style="left:848px;top:841px;width:1px;height:19px;background:#c5cde0"></div>
<div class="a" style="left:849px;top:841px;width:57px;height:19px;background:#e3effb"></div>
<div class="a" style="left:906px;top:841px;width:1px;height:19px;background:#c5cde0"></div>
<div class="a" style="left:998px;top:841px;width:1px;height:19px;background:#c5cde0"></div>
<div class="a" style="left:1038px;top:841px;width:1px;height:19px;background:#c5cde0"></div>
<div class="a" style="left:5.16px;top:844.09px;font-size:12px;line-height:15px;height:15px;letter-spacing:-0.393px;">CPlane</div>
<div class="a" style="left:68.66px;top:844.09px;font-size:12px;line-height:15px;height:15px;letter-spacing:-0.281px;">x -40.934</div>
<div class="a" style="left:157.16px;top:844.09px;font-size:12px;line-height:15px;height:15px;letter-spacing:-0.281px;">y -52.160</div>
<div class="a" style="left:250.66px;top:844.09px;font-size:12px;line-height:15px;height:15px;letter-spacing:-0.551px;">z 0.000</div>
<div class="a" style="left:339.16px;top:844.09px;font-size:12px;line-height:15px;height:15px;letter-spacing:-0.029px;">Meters</div>
<div class="a" style="left:404px;top:844px;width:14px;height:14px;background:#000"></div>
<div class="a" style="left:420.66px;top:844.09px;font-size:12px;line-height:15px;height:15px;letter-spacing:-0.074px;">Default</div>
<div class="a" style="left:576.66px;top:844.09px;font-size:12px;line-height:15px;height:15px;letter-spacing:-0.392px;">Grid Snap</div>
<div class="a" style="left:640.66px;top:844.09px;font-size:12px;line-height:15px;height:15px;font-weight:bold;letter-spacing:-0.032px;">Ortho</div>
<div class="a" style="left:686.66px;top:844.09px;font-size:12px;line-height:15px;height:15px;letter-spacing:-0.364px;">Planar</div>
<div class="a" style="left:733.16px;top:844.09px;font-size:12px;line-height:15px;height:15px;font-weight:bold;letter-spacing:-0.668px;">Osnap</div>
<div class="a" style="left:778.16px;top:844.09px;font-size:12px;line-height:15px;height:15px;font-weight:bold;letter-spacing:-0.087px;">SmartTrack</div>
<div class="a" style="left:853.16px;top:844.09px;font-size:12px;line-height:15px;height:15px;font-weight:bold;letter-spacing:-0.286px;">Gumball</div>
<div class="a" style="left:913.16px;top:844.09px;font-size:12px;line-height:15px;height:15px;letter-spacing:-0.096px;">Record History</div>
<div class="a" style="left:1005.16px;top:844.09px;font-size:12px;line-height:15px;height:15px;letter-spacing:-0.194px;">Filter</div>
<div class="a" style="left:1039.66px;top:844.09px;font-size:12px;line-height:15px;height:15px;letter-spacing:-0.223px;">Absolute tolerance: 0.001</div>
<div class="a" style="left:0;top:860px;width:1440px;height:40px;background:linear-gradient(90deg,#1f3540 0%,#1e3340 30%,#1c2d42 60%,#1b2946 100%)"></div>
<div class="a" style="left:0;top:860px;width:48px;height:40px;background:#1d3640"></div>
<svg style="left:15px;top:872px" width="18" height="18"><path d="M0 2.600L7.300 1.600V8.500H0ZM8.200 1.500L17.500 0.200V8.500H8.200ZM0 9.400H7.300V16.300L0 15.300ZM8.200 9.400H17.500V17.700L8.200 16.400Z" fill="#fff"/></svg>
<div class="a" style="left:48px;top:860px;width:344px;height:40px;background:#f2f2f2;border-top:1px solid #d8d8d8"></div>
<svg style="left:58px;top:870px" width="22" height="22"><circle cx="12.500" cy="8.500" r="5.300" fill="none" stroke="#222" stroke-width="1.4"/><path d="M8.700 12.300L2.500 18.500" stroke="#222" stroke-width="1.6"/></svg>
<div class="a" style="left:87.45px;top:871.05px;font-size:15px;line-height:19px;height:19px;color:#444;letter-spacing:-0.293px;">Type here to search</div>
<svg style="left:0;top:0" width="320" height="145"><g fill="none" stroke="#3c3c3c" stroke-width="1.4" stroke-linecap="round" stroke-linejoin="round"><circle cx="21" cy="113.600" r="9.400"/><circle cx="21" cy="113.600" r="8" stroke-width="0.6" stroke="#888"/><path d="M14.700 108.200C15.500 111 17 116.500 18.200 118C19 118.800 19.800 117.500 20.500 116.200C22 113.500 24 108.500 26.800 107.300C28.500 106.800 29.500 108 30 109.500" stroke-width="1.900"/><path d="M18.600 106.300h3.800" stroke-width="1"/><path d="M53.500 106.200h5" stroke-width="1.200"/><path d="M51.300 108.300H60.900C62.500 110.500 64 114.500 62.800 117.500C62 120 61 121.500 60.500 122.200H51.300C49 121 47.500 118.500 46.800 116C46 113.500 45.500 111 44.500 109.600L47 109.400C47.800 110.800 48.500 112.500 49.300 113.300C50 112 50.800 109.500 51.300 108.300Z"/><path d="M61.500 109.500C64.500 108.800 66.200 110.500 65.700 113C65.200 115.500 63.500 116.800 62.600 117.500" /><path d="M76.500 107V104.500H92.500V117H90.500" stroke="#555"/><rect x="73.800" y="109.300" width="15.700" height="13" stroke-width="1.500"/><path d="M78.500 114.500h6.500c0 4-6.500 4-6.500 0zM85 114.800c2-.5 2 2 .3 2M78.500 115.200l-1.500-1M80.800 113.200h2" stroke="#777" fill="#777" stroke-width="0.8"/><rect x="101.200" y="106.800" width="19.300" height="15.700" stroke-width="1.500"/><path d="M101.200 109.300h19.300" stroke-width="1"/><rect x="104.300" y="112.600" width="13.200" height="7" stroke-width="1.300" stroke="#555"/><path d="M115 108h1M117.800 108h1" stroke-width="1"/></g><g fill="none" stroke="#c8702f" stroke-width="1.500" stroke-linejoin="round"><path d="M135.300 107.500H154.700L151.300 116H138.700Z"/><path d="M145 112V121" stroke="#d4865a"/><path d="M142.700 120h4.600l-2.300 2.800z" fill="#c8702f" stroke-width="0.8"/></g><g fill="none" stroke="#3c3c3c" stroke-width="1.400" stroke-linecap="round" stroke-linejoin="round"><path d="M166.800 111.500L174.500 108.300L182.300 111.500V119.500L174.500 123L166.800 119.500ZM166.800 111.500L174.500 115L182.300 111.500M174.500 115V123" stroke="#4a4a4a"/><path d="M166.300 103.600l2.200 2.200-2.200 2.200-2.200-2.200z" fill="#3c3c3c" stroke-width="0.6"/><path d="M195.500 109.500H206.500L210.500 119.500H191.500Z" stroke-width="1.500"/><path d="M201 106.800V109.300M201 119.800V123.300M191 113.800h2.500M208.500 113.800H211" stroke="#555"/><path d="M201 114.500C199.500 112 196.500 112.500 196.500 114.500S199.500 117 201 114.500C202.500 112 205.500 112.500 205.500 114.500S202.500 117 201 114.500Z" stroke-width="1" stroke="#666"/><path d="M220.300 119.500C222 124 236 124 238.300 119.500" stroke="#555"/><path d="M226 120C226 114 225 108 223 104.500M229 120C229 114 231 110 235 107M224.500 119C224.500 115 223.500 112 222 110M232 119.500C232 116 233.500 113.500 236.500 112M227.500 118C227.500 114 227 111 226 108.500" stroke-width="1.200"/><path d="M247.500 106.200L257 104.300L266.500 114V120.500L264 122.500L247.500 106.200" stroke-width="1.600"/><path d="M252.500 108.500C254 107 256 108 262 114.500C263 116 262 117 260.500 116C254 110 252 109.500 252.500 108.500Z" stroke-width="1"/><path d="M249 110.500A7.500 7.500 0 1 0 262 121" stroke="#555" stroke-width="1.200"/><circle cx="284.800" cy="114" r="9.600" stroke="#555" stroke-width="1.200"/><path d="M283 104.500A7 7 0 0 1 294.500 116" stroke="#777" stroke-width="1"/><circle cx="284.800" cy="114" r="1.800" stroke-width="1.300"/><path d="M284.800 107.500V110.500M284.800 117.500V120.500M278.500 114H281.500M288 114H291M288.500 109.500L290.500 111.500" stroke="#666" stroke-width="1.300"/><path d="M277 124.500H291" stroke="#888" stroke-width="1"/></g><path d="M67.3 126h-5.500l5.500-5.500z" fill="#707070"/><path d="M158 126h-5.500l5.500-5.500z" fill="#707070"/><path d="M186 126h-5.500l5.500-5.500z" fill="#707070"/><path d="M298 126h-5.500l5.500-5.500z" fill="#707070"/></svg>
<svg style="left:0;top:0" width="940" height="196"><defs>
<linearGradient id="pg" x1="0" y1="0" x2="1" y2="1"><stop offset="0" stop-color="#fff"/><stop offset="1" stop-color="#d8d8d8"/></linearGradient>
<linearGradient id="fold" x1="0" y1="0" x2="0" y2="1"><stop offset="0" stop-color="#ffe680"/><stop offset="1" stop-color="#f5b400"/></linearGradient>
<radialGradient id="sph" cx="0.4" cy="0.3" r="0.8"><stop offset="0" stop-color="#fff"/><stop offset="0.45" stop-color="#c8c8c8"/><stop offset="1" stop-color="#3a3a3a"/></radialGradient>
<radialGradient id="bsph" cx="0.35" cy="0.3" r="0.8"><stop offset="0" stop-color="#4a7af0"/><stop offset="0.5" stop-color="#0a34c0"/><stop offset="1" stop-color="#001060"/></radialGradient>
<linearGradient id="hlp" x1="0" y1="0" x2="0" y2="1"><stop offset="0" stop-color="#5b7be0"/><stop offset="1" stop-color="#1a2e9a"/></linearGradient>
<radialGradient id="bulb" cx="0.4" cy="0.3" r="0.8"><stop offset="0" stop-color="#c8c8c8"/><stop offset="1" stop-color="#6a6a6a"/></radialGradient>
<linearGradient id="lock" x1="0" y1="0" x2="1" y2="0"><stop offset="0" stop-color="#e8e8e8"/><stop offset="1" stop-color="#9a9a9a"/></linearGradient>
<linearGradient id="car" x1="0" y1="0" x2="0" y2="1"><stop offset="0" stop-color="#ff3030"/><stop offset="1" stop-color="#b00000"/></linearGradient>
</defs><path d="M13.700 168.900H24L27.300 172.200V187.100H13.700Z" fill="url(#pg)" stroke="#000" stroke-width="1.5" stroke-linejoin="round"/><path d="M24 168.900V172.200H27.300" fill="#fff" stroke="#000" stroke-width="1"/><path d="M39.700 185V172.500Q39.700 171.700 40.500 171.700H45.500L47 173.500H54.500Q55.300 173.500 55.300 174.300V176.500" fill="#ffe070" stroke="#000" stroke-width="1.5" stroke-linejoin="round"/><path d="M39.700 185L43.500 176.700H59.200L55.300 185Z" fill="url(#fold)" stroke="#000" stroke-width="1.5" stroke-linejoin="round"/><path d="M68 169H86V187H70L68 185Z" fill="#c8b85a" stroke="#000" stroke-width="1.5" stroke-linejoin="round"/><rect x="71.500" y="169.600" width="11" height="7.200" fill="#dcdcdc" stroke="#555" stroke-width="0.6"/><rect x="72.500" y="181" width="9.500" height="6" fill="#a0a4a8" stroke="#333" stroke-width="0.6"/><rect x="73.500" y="182" width="2.500" height="4" fill="#8a7a30"/><path d="M84.500 170v2" stroke="#7a6a20" stroke-width="1"/><path d="M90 190.5h-5.500l5.500-5.500z" fill="#707070"/><path d="M98.300 176.500L100.800 168.900H112.500L110 176.500Z" fill="#f4f4f4" stroke="#000" stroke-width="1.200"/><rect x="104.500" y="171" width="3.500" height="3.500" fill="#aaa"/><path d="M95 179.500L97.500 176.500H111L114.300 174.500V183.500L111.500 187.500H95Z" fill="#e6e6e6" stroke="#000" stroke-width="1.5" stroke-linejoin="round"/><path d="M111 176.500L114.300 174.500V183.500L111.500 187.500Z" fill="#555"/><path d="M95 181.500H111.500M95 184.500H111.500" stroke="#000" stroke-width="1.200"/><path d="M125.700 168.900H139.300V183.500L135.500 187.100H125.700Z" fill="url(#pg)" stroke="#000" stroke-width="1.5" stroke-linejoin="round"/><path d="M139.300 183.500H135.500V187.100" fill="#fff" stroke="#000" stroke-width="1"/><path d="M131 171.500L136 167H141.500V170.500L135.500 173.500Z" fill="#ddd" stroke="#777" stroke-width="0.8"/><path d="M132 171l3 2M133.500 169.700l3 2M135 168.500l3 2" stroke="#555" stroke-width="0.7"/><rect x="142.300" y="166.300" width="2.500" height="5.400" fill="#000"/><path d="M137 166.600h5.500M137 171h5.500" stroke="#000" stroke-width="0.9"/><path d="M156.300 169.800L165 183.500M165.700 169.800L157 183.500" stroke="#111" stroke-width="1.400" stroke-linecap="round"/><ellipse cx="156.300" cy="184.600" rx="1.600" ry="2.600" transform="rotate(32 156.300 184.600)" fill="none" stroke="#556" stroke-width="0.9"/><ellipse cx="165.700" cy="184.600" rx="1.600" ry="2.600" transform="rotate(-32 165.700 184.600)" fill="none" stroke="#556" stroke-width="0.9"/><circle cx="161" cy="178.500" r="1" fill="#224"/><path d="M182.700 168.900H189.500L192.300 171.700V182.500H182.700Z" fill="url(#pg)" stroke="#000" stroke-width="1.5" stroke-linejoin="round"/><path d="M186.800 173.600H193.500L196.300 176.400V187.100H186.800Z" fill="url(#pg)" stroke="#000" stroke-width="1.5" stroke-linejoin="round"/><path d="M193.500 173.600V176.400H196.300" fill="none" stroke="#000" stroke-width="0.9"/><rect x="210.700" y="169.600" width="12.400" height="16.600" rx="2" fill="#fdec8c" stroke="#000" stroke-width="1.5" stroke-linejoin="round"/><path d="M214 169.300Q214 171.500 217 171.500T220 169.300" fill="#fff" stroke="#000" stroke-width="1.200"/><path d="M242 177.500C246 174 251 174.500 254 178" fill="none" stroke="#111" stroke-width="2.600"/><path d="M248 175.300C250.500 175.500 252.500 176.500 254 178" fill="none" stroke="#666" stroke-width="2.200"/><path d="M235.300 182.700L238 175.500L243.500 180.800Z" fill="#000"/><path d="M258 190.5h-5.500l5.500-5.500z" fill="#707070"/><path d="M269.500 188L263 178.500C261.500 176.500 263.500 175 265 176.500L268 179.500V170C268 168 270.300 168 270.300 170V168.500C270.300 166.500 272.800 166.500 272.800 168.500V169.500C272.800 167.700 275.300 167.700 275.300 169.500V171.500C275.300 170 277.800 170 277.800 171.500V181C277.800 184 276.500 186 276.500 188" fill="url(#pg)" stroke="#111" stroke-width="1.100" stroke-linejoin="round"/><path d="M270.300 170V176.500M272.800 169.500V176.500M275.300 171.500V176.500" stroke="#111" stroke-width="1"/><ellipse cx="301" cy="177.800" rx="10.500" ry="3.600" fill="none" stroke="#777" stroke-width="0.8"/><ellipse cx="301" cy="177.800" rx="3.300" ry="10.500" fill="none" stroke="#777" stroke-width="0.8"/><path d="M297 180.800H309M304 177V183" stroke="#111" stroke-width="0.9" fill="none"/><path d="M304 173.500l1.600 3.200h-3.200zM296.300 180.800l3.200-1.600v3.200z" fill="#000"/><circle cx="331.300" cy="175.400" r="6" fill="#f4f4f4" stroke="#111" stroke-width="1.100"/><path d="M326.800 180L321 185.800" stroke="#111" stroke-width="1.800"/><path d="M329 174.300h4.600M331.300 172v4.600M329.200 178.300h4.200" stroke="#111" stroke-width="0.9"/><rect x="352" y="168.500" width="14.500" height="13" fill="none" stroke="#111" stroke-width="1" stroke-dasharray="2 1.600"/><circle cx="355.400" cy="178.400" r="5.800" fill="#ebebee" stroke="#111" stroke-width="1.100"/><path d="M351 183L346.800 187.200" stroke="#111" stroke-width="1.800"/><path d="M352 180.800h7" stroke="#666" stroke-width="0.8" stroke-dasharray="1.500 1.500"/><path d="M375 168.200h4.400l-4.400 4.400zM395 168.200v4.400l-4.400-4.400zM375 187.800v-4.400l4.400 4.400zM395 187.800h-4.400l4.400-4.400z" fill="#000"/><circle cx="386.500" cy="175.800" r="6" fill="#f4f4f4" stroke="#111" stroke-width="1.100"/><path d="M382 180.500L378 184.500" stroke="#111" stroke-width="1.800"/><circle cx="415" cy="176.700" r="7.500" fill="#f4f4f4" stroke="#111" stroke-width="0.900"/><circle cx="415" cy="176.700" r="6" fill="none" stroke="#555" stroke-width="0.700"/><circle cx="416.600" cy="175" r="2.900" fill="#f5e620" stroke="#c8b400" stroke-width="0.500"/><circle cx="413.500" cy="178.800" r="2.400" fill="#f5e620" stroke="#c8b400" stroke-width="0.500"/><path d="M409.500 182.300L404.800 187" stroke="#111" stroke-width="1.800"/><path d="M438 174.500C442 170.500 447 170.800 450 174" fill="none" stroke="#111" stroke-width="2.500"/><path d="M444.500 171.800C447 172 449 172.800 450 174" fill="none" stroke="#666" stroke-width="2.200"/><path d="M431.300 177.500L434 170.500L439.500 175.700Z" fill="#000"/><circle cx="442" cy="180.900" r="4.400" fill="#f4f4f4" stroke="#111" stroke-width="1.100"/><path d="M438.700 184.200L434.800 188" stroke="#111" stroke-width="1.600"/><path d="M454 190.5h-5.500l5.500-5.500z" fill="#707070"/><rect x="458.700" y="168.700" width="20" height="17.600" fill="#c6c6c6" stroke="#000" stroke-width="1.500"/><path d="M468.700 168.700V186.300M458.700 177.500H478.700" stroke="#000" stroke-width="1.400"/><path d="M469.800 169.300h3" stroke="#1a2aa0" stroke-width="1"/><path d="M482 190.5h-5.500l5.500-5.500z" fill="#707070"/><path d="M486 182.400H508" stroke="#888" stroke-width="0.700"/><path d="M487.500 180.500C486.500 178 488 176.800 490.500 176.500L494.500 176L496 173.200H502.500L504.500 176.200C506.500 176.500 507 178 506.500 180.500Z" fill="url(#car)" stroke="#c00000" stroke-width="0.500"/><path d="M497 174.200H502L503.300 176.200H496.200Z" fill="#fff"/><circle cx="491" cy="180.400" r="1.700" fill="#222"/><circle cx="491" cy="180.400" r="0.700" fill="#aaa"/><circle cx="502" cy="180.400" r="1.700" fill="#222"/><circle cx="502" cy="180.400" r="0.700" fill="#aaa"/><circle cx="505.800" cy="178.800" r="0.800" fill="#000"/><path d="M510 190.5h-5.500l5.500-5.500z" fill="#707070"/><path d="M514.500 182.500L522.500 173L535.500 177.500L530.500 188.500ZM517 179.500L532.500 184.500M519.700 176.300L534 181M518.500 184L526.500 174.300M523 185.700L531 175.800M527 187.200L533.500 176.800" fill="none" stroke="#b4b4b8" stroke-width="0.700"/><path d="M525 180L528.500 175" stroke="#2a9a2a" stroke-width="1.100"/><path d="M526.500 180.300L533 182.500" stroke="#c03030" stroke-width="1.100"/><rect x="523.500" y="178.700" width="2.800" height="2.800" fill="#fff" stroke="#000" stroke-width="1"/><path d="M538 190.5h-5.500l5.500-5.500z" fill="#707070"/><circle cx="552.800" cy="178" r="8.800" fill="none" stroke="#777" stroke-width="0.900"/><path d="M554 178.200H563.500" stroke="#111" stroke-width="1"/><circle cx="552.800" cy="178.200" r="1.400" fill="#fff" stroke="#111" stroke-width="0.800"/><path d="M566 190.5h-5.500l5.500-5.500z" fill="#707070"/><circle cx="577.300" cy="174.400" r="3" fill="#ffe800" stroke="#b8682a" stroke-width="0.700"/><rect x="582.600" y="173.500" width="6" height="6" fill="#ffe800" stroke="#b8682a" stroke-width="0.800"/><path d="M579.400 180.600L582.600 185.500H576.300Z" fill="none" stroke="#b8682a" stroke-width="0.800"/><path d="M588.300 167.300H591.600V170.800M570.400 185V188.300H573.800" fill="none" stroke="#000" stroke-width="1"/><path d="M594 190.5h-5.500l5.500-5.500z" fill="#707070"/><path d="M609 168.700C602 168.700 600.500 175.500 604.500 179.500C606 181 606 183 606 185.500C606 188.300 612 188.300 612 185.500C612 183 612 181 613.500 179.500C617.500 175.500 616 168.700 609 168.700Z" fill="url(#bulb)" stroke="#222" stroke-width="0.900"/><path d="M606.500 184.500h5M606.800 186.300h4.400" stroke="#ddd" stroke-width="0.800"/><path d="M622 190.5h-5.500l5.500-5.500z" fill="#707070"/><path d="M634 175.500V172.800C634 168.800 640 168.800 640 172.800V175.500" fill="none" stroke="#000" stroke-width="1.700"/><rect x="631.800" y="175.800" width="10.500" height="9.600" rx="1" fill="url(#lock)" stroke="#000" stroke-width="1.400"/><path d="M634 178.500h6M634 180.600h6M634 182.700h6" stroke="#888" stroke-width="0.800"/><path d="M650 190.5h-5.500l5.500-5.500z" fill="#707070"/><path d="M656.700 170.300L673.500 174V183L664.500 187.500L656.700 178.500Z" fill="#1a2a9a" stroke="#000" stroke-width="1.100" stroke-linejoin="round"/><path d="M657.200 176.500L664.500 184.300L673 180.300V177.500L664.500 181.500L657.200 174Z" fill="#eee"/><path d="M657.200 170.800L673 174.300V178L664.500 181.800L657.200 174.500Z" fill="#e82010"/><path d="M657.200 170.800L673 174.300L666 177L657.500 172.500Z" fill="#ff5a10"/><path d="M678 190.5h-5.500l5.500-5.500z" fill="#707070"/><path d="M692.5 177.3L691.26 168.99A8.4 8.4 0 0 1 693.74 168.99Z" fill="#ff0000"/><path d="M692.5 177.3L693.45 168.95A8.4 8.4 0 0 1 695.85 169.60Z" fill="#ff3f00"/><path d="M692.5 177.3L695.58 169.48A8.4 8.4 0 0 1 697.73 170.73Z" fill="#ff7f00"/><path d="M692.5 177.3L697.50 170.55A8.4 8.4 0 0 1 699.25 172.30Z" fill="#ffbf00"/><path d="M692.5 177.3L699.07 172.07A8.4 8.4 0 0 1 700.32 174.22Z" fill="#ffff00"/><path d="M692.5 177.3L700.20 173.95A8.4 8.4 0 0 1 700.85 176.35Z" fill="#bfff00"/><path d="M692.5 177.3L700.81 176.06A8.4 8.4 0 0 1 700.81 178.54Z" fill="#7fff00"/><path d="M692.5 177.3L700.85 178.25A8.4 8.4 0 0 1 700.20 180.65Z" fill="#3fff00"/><path d="M692.5 177.3L700.32 180.38A8.4 8.4 0 0 1 699.07 182.53Z" fill="#00ff00"/><path d="M692.5 177.3L699.25 182.30A8.4 8.4 0 0 1 697.50 184.05Z" fill="#00ff3f"/><path d="M692.5 177.3L697.73 183.87A8.4 8.4 0 0 1 695.58 185.12Z" fill="#00ff7f"/><path d="M692.5 177.3L695.85 185.00A8.4 8.4 0 0 1 693.45 185.65Z" fill="#00ffbf"/><path d="M692.5 177.3L693.74 185.61A8.4 8.4 0 0 1 691.26 185.61Z" fill="#00ffff"/><path d="M692.5 177.3L691.55 185.65A8.4 8.4 0 0 1 689.15 185.00Z" fill="#00bfff"/><path d="M692.5 177.3L689.42 185.12A8.4 8.4 0 0 1 687.27 183.87Z" fill="#007fff"/><path d="M692.5 177.3L687.50 184.05A8.4 8.4 0 0 1 685.75 182.30Z" fill="#003fff"/><path d="M692.5 177.3L685.93 182.53A8.4 8.4 0 0 1 684.68 180.38Z" fill="#0000ff"/><path d="M692.5 177.3L684.80 180.65A8.4 8.4 0 0 1 684.15 178.25Z" fill="#3f00ff"/><path d="M692.5 177.3L684.19 178.54A8.4 8.4 0 0 1 684.19 176.06Z" fill="#7f00ff"/><path d="M692.5 177.3L684.15 176.35A8.4 8.4 0 0 1 684.80 173.95Z" fill="#bf00ff"/><path d="M692.5 177.3L684.68 174.22A8.4 8.4 0 0 1 685.93 172.07Z" fill="#ff00ff"/><path d="M692.5 177.3L685.75 172.30A8.4 8.4 0 0 1 687.50 170.55Z" fill="#ff00bf"/><path d="M692.5 177.3L687.27 170.73A8.4 8.4 0 0 1 689.42 169.48Z" fill="#ff007f"/><path d="M692.5 177.3L689.15 169.60A8.4 8.4 0 0 1 691.55 168.95Z" fill="#ff003f"/><circle cx="692.5" cy="177.3" r="8.700" fill="none" stroke="#111" stroke-width="1"/><circle cx="692.5" cy="177.3" r="4.900" fill="#fff"/><path d="M706 190.5h-5.500l5.500-5.500z" fill="#707070"/><circle cx="721" cy="177.8" r="8.600" fill="url(#sph)" stroke="#111" stroke-width="0.900"/><path d="M712.4 178.8Q721 181.3 729.6 178.8" fill="none" stroke="#111" stroke-width="1"/><path d="M720 169.3Q717.5 177.8 720 186.3" fill="none" stroke="#111" stroke-width="1"/><path d="M713 179.8Q721 182.3 729 179.8A8.600 8.600 0 0 1 713 179.8Z" fill="#000" opacity="0.250"/><rect x="738.0" y="166.7" width="1.600" height="1.600" fill="#cfd0d6"/><rect x="738.0" y="169.6" width="1.600" height="1.600" fill="#cfd0d6"/><rect x="738.0" y="172.5" width="1.600" height="1.600" fill="#cfd0d6"/><rect x="738.0" y="175.4" width="1.600" height="1.600" fill="#cfd0d6"/><rect x="738.0" y="178.3" width="1.600" height="1.600" fill="#cfd0d6"/><rect x="738.0" y="181.2" width="1.600" height="1.600" fill="#cfd0d6"/><rect x="738.0" y="184.1" width="1.600" height="1.600" fill="#cfd0d6"/><rect x="738.0" y="187.0" width="1.600" height="1.600" fill="#cfd0d6"/><rect x="741.0" y="166.7" width="1.600" height="1.600" fill="#cfd0d6"/><rect x="741.0" y="169.6" width="1.600" height="1.600" fill="#cfd0d6"/><rect x="741.0" y="172.5" width="1.600" height="1.600" fill="#cfd0d6"/><rect x="741.0" y="175.4" width="1.600" height="1.600" fill="#cfd0d6"/><rect x="741.0" y="178.3" width="1.600" height="1.600" fill="#cfd0d6"/><rect x="741.0" y="181.2" width="1.600" height="1.600" fill="#cfd0d6"/><rect x="741.0" y="184.1" width="1.600" height="1.600" fill="#cfd0d6"/><rect x="741.0" y="187.0" width="1.600" height="1.600" fill="#cfd0d6"/><rect x="743.9" y="166.7" width="1.600" height="1.600" fill="#cfd0d6"/><rect x="743.9" y="169.6" width="1.600" height="1.600" fill="#cfd0d6"/><rect x="743.9" y="172.5" width="1.600" height="1.600" fill="#cfd0d6"/><rect x="743.9" y="175.4" width="1.600" height="1.600" fill="#cfd0d6"/><rect x="743.9" y="178.3" width="1.600" height="1.600" fill="#cfd0d6"/><rect x="743.9" y="181.2" width="1.600" height="1.600" fill="#cfd0d6"/><rect x="743.9" y="184.1" width="1.600" height="1.600" fill="#cfd0d6"/><rect x="743.9" y="187.0" width="1.600" height="1.600" fill="#cfd0d6"/><rect x="746.9" y="166.7" width="1.600" height="1.600" fill="#cfd0d6"/><rect x="746.9" y="169.6" width="1.600" height="1.600" fill="#cfd0d6"/><rect x="746.9" y="172.5" width="1.600" height="1.600" fill="#cfd0d6"/><rect x="746.9" y="175.4" width="1.600" height="1.600" fill="#cfd0d6"/><rect x="746.9" y="178.3" width="1.600" height="1.600" fill="#cfd0d6"/><rect x="746.9" y="181.2" width="1.600" height="1.600" fill="#cfd0d6"/><rect x="746.9" y="184.1" width="1.600" height="1.600" fill="#cfd0d6"/><rect x="746.9" y="187.0" width="1.600" height="1.600" fill="#cfd0d6"/><rect x="749.8" y="166.7" width="1.600" height="1.600" fill="#cfd0d6"/><rect x="749.8" y="169.6" width="1.600" height="1.600" fill="#cfd0d6"/><rect x="749.8" y="172.5" width="1.600" height="1.600" fill="#cfd0d6"/><rect x="749.8" y="175.4" width="1.600" height="1.600" fill="#cfd0d6"/><rect x="749.8" y="178.3" width="1.600" height="1.600" fill="#cfd0d6"/><rect x="749.8" y="181.2" width="1.600" height="1.600" fill="#cfd0d6"/><rect x="749.8" y="184.1" width="1.600" height="1.600" fill="#cfd0d6"/><rect x="749.8" y="187.0" width="1.600" height="1.600" fill="#cfd0d6"/><rect x="752.8" y="166.7" width="1.600" height="1.600" fill="#cfd0d6"/><rect x="752.8" y="169.6" width="1.600" height="1.600" fill="#cfd0d6"/><rect x="752.8" y="172.5" width="1.600" height="1.600" fill="#cfd0d6"/><rect x="752.8" y="175.4" width="1.600" height="1.600" fill="#cfd0d6"/><rect x="752.8" y="178.3" width="1.600" height="1.600" fill="#cfd0d6"/><rect x="752.8" y="181.2" width="1.600" height="1.600" fill="#cfd0d6"/><rect x="752.8" y="184.1" width="1.600" height="1.600" fill="#cfd0d6"/><rect x="752.8" y="187.0" width="1.600" height="1.600" fill="#cfd0d6"/><rect x="755.7" y="166.7" width="1.600" height="1.600" fill="#cfd0d6"/><rect x="755.7" y="169.6" width="1.600" height="1.600" fill="#cfd0d6"/><rect x="755.7" y="172.5" width="1.600" height="1.600" fill="#cfd0d6"/><rect x="755.7" y="175.4" width="1.600" height="1.600" fill="#cfd0d6"/><rect x="755.7" y="178.3" width="1.600" height="1.600" fill="#cfd0d6"/><rect x="755.7" y="181.2" width="1.600" height="1.600" fill="#cfd0d6"/><rect x="755.7" y="184.1" width="1.600" height="1.600" fill="#cfd0d6"/><rect x="755.7" y="187.0" width="1.600" height="1.600" fill="#cfd0d6"/><rect x="758.6" y="166.7" width="1.600" height="1.600" fill="#cfd0d6"/><rect x="758.6" y="169.6" width="1.600" height="1.600" fill="#cfd0d6"/><rect x="758.6" y="172.5" width="1.600" height="1.600" fill="#cfd0d6"/><rect x="758.6" y="175.4" width="1.600" height="1.600" fill="#cfd0d6"/><rect x="758.6" y="178.3" width="1.600" height="1.600" fill="#cfd0d6"/><rect x="758.6" y="181.2" width="1.600" height="1.600" fill="#cfd0d6"/><rect x="758.6" y="184.1" width="1.600" height="1.600" fill="#cfd0d6"/><rect x="758.6" y="187.0" width="1.600" height="1.600" fill="#cfd0d6"/><circle cx="748.9" cy="177.8" r="8.600" fill="url(#sph)" stroke="#111" stroke-width="0.900"/><path d="M740.3 178.8Q748.9 181.3 757.5 178.8" fill="none" stroke="#111" stroke-width="1"/><path d="M747.9 169.3Q745.4 177.8 747.9 186.3" fill="none" stroke="#111" stroke-width="1"/><path d="M740.9 179.8Q748.9 182.3 756.9 179.8A8.600 8.600 0 0 1 740.9 179.8Z" fill="#000" opacity="0.250"/><path d="M762 190.5h-5.500l5.500-5.500z" fill="#707070"/><ellipse cx="779" cy="185.500" rx="9" ry="2.500" fill="#000" opacity="0.100"/><circle cx="777" cy="177.800" r="8.600" fill="url(#bsph)" stroke="#000" stroke-width="0.900"/><ellipse cx="773.200" cy="173.500" rx="2.600" ry="1.700" transform="rotate(-35 773.200 173.500)" fill="#fff" opacity="0.850"/><path d="M779 184.500Q783.500 183 784.500 179" stroke="#9ab8ff" stroke-width="1.300" fill="none" opacity="0.800"/><path d="M790 190.5h-5.500l5.500-5.500z" fill="#707070"/><circle cx="804" cy="178" r="9" fill="#fff" opacity="0.350"/><path d="M803.300 170.300L815.700 167.500L812.500 179.500Z" fill="#ff9a10" stroke="#7a3a00" stroke-width="0.800" stroke-linejoin="round"/><path d="M803.300 170.300L812.500 179.500L810 178.800L803.800 172Z" fill="#fff2d0" stroke="#7a3a00" stroke-width="0.500"/><path d="M818 190.5h-5.500l5.500-5.500z" fill="#707070"/><rect x="830.5999999999999" y="167.29999999999998" width="4.400" height="5" rx="1" transform="rotate(22 832.8 177.6)" fill="#ffe070" stroke="#222" stroke-width="0.900"/><rect x="830.5999999999999" y="167.29999999999998" width="4.400" height="5" rx="1" transform="rotate(67 832.8 177.6)" fill="#ffe070" stroke="#222" stroke-width="0.900"/><rect x="830.5999999999999" y="167.29999999999998" width="4.400" height="5" rx="1" transform="rotate(112 832.8 177.6)" fill="#ffe070" stroke="#222" stroke-width="0.900"/><rect x="830.5999999999999" y="167.29999999999998" width="4.400" height="5" rx="1" transform="rotate(157 832.8 177.6)" fill="#ffe070" stroke="#222" stroke-width="0.900"/><rect x="830.5999999999999" y="167.29999999999998" width="4.400" height="5" rx="1" transform="rotate(202 832.8 177.6)" fill="#ffe070" stroke="#222" stroke-width="0.900"/><rect x="830.5999999999999" y="167.29999999999998" width="4.400" height="5" rx="1" transform="rotate(247 832.8 177.6)" fill="#ffe070" stroke="#222" stroke-width="0.900"/><rect x="830.5999999999999" y="167.29999999999998" width="4.400" height="5" rx="1" transform="rotate(292 832.8 177.6)" fill="#ffe070" stroke="#222" stroke-width="0.900"/><rect x="830.5999999999999" y="167.29999999999998" width="4.400" height="5" rx="1" transform="rotate(337 832.8 177.6)" fill="#ffe070" stroke="#222" stroke-width="0.900"/><circle cx="832.8" cy="177.6" r="7.200" fill="#ffe070" stroke="#222" stroke-width="0.900"/><rect x="831.0999999999999" y="168.0" width="3.400" height="4" transform="rotate(22 832.8 177.6)" fill="#ffe070"/><rect x="831.0999999999999" y="168.0" width="3.400" height="4" transform="rotate(67 832.8 177.6)" fill="#ffe070"/><rect x="831.0999999999999" y="168.0" width="3.400" height="4" transform="rotate(112 832.8 177.6)" fill="#ffe070"/><rect x="831.0999999999999" y="168.0" width="3.400" height="4" transform="rotate(157 832.8 177.6)" fill="#ffe070"/><rect x="831.0999999999999" y="168.0" width="3.400" height="4" transform="rotate(202 832.8 177.6)" fill="#ffe070"/><rect x="831.0999999999999" y="168.0" width="3.400" height="4" transform="rotate(247 832.8 177.6)" fill="#ffe070"/><rect x="831.0999999999999" y="168.0" width="3.400" height="4" transform="rotate(292 832.8 177.6)" fill="#ffe070"/><rect x="831.0999999999999" y="168.0" width="3.400" height="4" transform="rotate(337 832.8 177.6)" fill="#ffe070"/><path d="M826.8 180.6A7 7 0 0 0 838.8 180.6" fill="none" stroke="#e08020" stroke-width="2.200"/><rect x="830.8" y="172.1" width="4" height="8" rx="1.500" fill="#aaa" stroke="#444" stroke-width="0.800"/><ellipse cx="832.8" cy="172.6" rx="2" ry="1" fill="#ddd" stroke="#444" stroke-width="0.500"/><path d="M846 190.5h-5.500l5.500-5.500z" fill="#707070"/><path d="M851 168.300H858.500M851 179.300H860M854.500 169.300V178.300M860.500 180.500V187.500M870.500 180.500V187.500M862 185.500H869" stroke="#000" stroke-width="1.100" fill="none"/><path d="M854.500 168.700l1.400 2.300h-2.800zM854.500 178.900l1.400-2.300h-2.800zM861.200 185.500l2.300-1.400v2.800zM869.800 185.500l-2.300-1.400v2.800z" fill="#000"/><rect x="858.700" y="167.300" width="2" height="2" fill="#fff" stroke="#000" stroke-width="0.900"/><rect x="859.500" y="178.300" width="2" height="2" fill="#fff" stroke="#000" stroke-width="0.900"/><rect x="869.500" y="178.300" width="2" height="2" fill="#fff" stroke="#000" stroke-width="0.900"/><path d="M874 190.5h-5.500l5.500-5.500z" fill="#707070"/><circle cx="889" cy="177.800" r="10.800" fill="#a6d896" stroke="#555" stroke-width="1.600"/><path d="M887.500 167.500L888.500 176L897 170.500M888.500 176L881 180" stroke="#d8f0d0" stroke-width="0.900" fill="none"/><path d="M880.500 178.500L883 176.500L884.500 177.500L886.500 175.500L890 177L889.500 180.500L893 182.500L896 182L895.500 183.500L890 184.500L886 188L881.500 186.500L880 183Z" fill="#404840"/><ellipse cx="918" cy="186.500" rx="8" ry="2" fill="#000" opacity="0.100"/><circle cx="917" cy="177.600" r="10" fill="url(#hlp)"/><text x="917" y="184" font-family="Liberation Serif" font-weight="bold" font-size="18.500" text-anchor="middle" fill="#fff">?</text><path d="M930 190.5h-5.500l5.500-5.500z" fill="#707070"/></svg>
<svg style="left:0;top:0" width="88" height="720"><defs>
<linearGradient id="bl" x1="0" y1="0" x2="1" y2="1"><stop offset="0" stop-color="#9ab0ff"/><stop offset="1" stop-color="#3a55d8"/></linearGradient>
<linearGradient id="bl2" x1="0" y1="0" x2="0" y2="1"><stop offset="0" stop-color="#a8baff"/><stop offset="1" stop-color="#4a66e0"/></linearGradient>
<radialGradient id="bs" cx="0.4" cy="0.35" r="0.75"><stop offset="0" stop-color="#b8c6ff"/><stop offset="1" stop-color="#3a55d8"/></radialGradient>
<linearGradient id="or" x1="0" y1="0" x2="0" y2="1"><stop offset="0" stop-color="#ff8a00"/><stop offset="1" stop-color="#ffd000"/></linearGradient>
<linearGradient id="gy" x1="0" y1="0" x2="1" y2="1"><stop offset="0" stop-color="#e8e8e8"/><stop offset="1" stop-color="#8a8a8a"/></linearGradient>
</defs><path d="M10.500 215.300V227.300L13.300 224.800L15.300 229L17 228.200L15 224.200H18.700Z" fill="#fff" stroke="#000" stroke-width="1" stroke-linejoin="round"/><circle cx="42.5" cy="222.5" r="1.9" fill="#fff" stroke="#000" stroke-width="0.9"/><path d="M56 236h-5.500l5.500-5.500z" fill="#707070"/><path d="M7.500 258.700L12.500 245L22.500 255.500" fill="none" stroke="#444" stroke-width="0.9"/><circle cx="12.5" cy="245" r="1.5" fill="#fff" stroke="#000" stroke-width="0.9"/><circle cx="7.5" cy="258.7" r="1.5" fill="#fff" stroke="#000" stroke-width="0.9"/><circle cx="22.5" cy="255.5" r="1.5" fill="#fff" stroke="#000" stroke-width="0.9"/><path d="M28 263.5h-5.500l5.500-5.500z" fill="#707070"/><path d="M35 245C43 243 50.500 244 50 251.500C49.500 257.500 42 258 35 257.200" fill="none" stroke="#444" stroke-width="0.9"/><rect x="33.4" y="243.4" width="3.2" height="3.2" fill="#fff" stroke="#000" stroke-width="1"/><rect x="47.2" y="240.2" width="3.2" height="3.2" fill="#fff" stroke="#000" stroke-width="1"/><rect x="33.4" y="255.6" width="3.2" height="3.2" fill="#fff" stroke="#000" stroke-width="1"/><rect x="49.2" y="257.2" width="3.2" height="3.2" fill="#fff" stroke="#000" stroke-width="1"/><path d="M56 263.5h-5.500l5.500-5.500z" fill="#707070"/><circle cx="15" cy="278.300" r="9.400" fill="none" stroke="#444" stroke-width="0.9"/><path d="M15.500 278.500L21.500 272.500" stroke="#000" stroke-width="1"/><circle cx="15.5" cy="278.5" r="1.3" fill="#fff" stroke="#000" stroke-width="0.9"/><circle cx="21.5" cy="272.5" r="1.3" fill="#fff" stroke="#000" stroke-width="0.9"/><path d="M28 291.5h-5.500l5.500-5.500z" fill="#707070"/><ellipse cx="43" cy="278.700" rx="10" ry="7" fill="none" stroke="#444" stroke-width="0.9"/><path d="M43 278.700H52" stroke="#444" stroke-width="0.800"/><rect x="41.4" y="270.4" width="3.2" height="3.2" fill="#fff" stroke="#000" stroke-width="1"/><rect x="41.4" y="277.1" width="3.2" height="3.2" fill="#fff" stroke="#000" stroke-width="1"/><rect x="50.4" y="277.1" width="3.2" height="3.2" fill="#fff" stroke="#000" stroke-width="1"/><path d="M56 291.5h-5.500l5.500-5.500z" fill="#707070"/><path d="M8.300 298.300V315.300L23.300 307.500M8.300 298.300C15 298.300 21 301.500 23.300 307.500" fill="none" stroke="#444" stroke-width="0.9"/><circle cx="8.3" cy="298.3" r="1.5" fill="#fff" stroke="#000" stroke-width="0.9"/><circle cx="23.3" cy="307.5" r="1.5" fill="#fff" stroke="#000" stroke-width="0.9"/><circle cx="8.3" cy="315.3" r="1.5" fill="#fff" stroke="#000" stroke-width="0.9"/><path d="M28 319.5h-5.500l5.500-5.500z" fill="#707070"/><rect x="34.300" y="301.300" width="17.400" height="11.200" fill="none" stroke="#444" stroke-width="0.9" stroke-width="1"/><circle cx="51.7" cy="301.3" r="1.2" fill="#fff" stroke="#000" stroke-width="0.9"/><circle cx="34.3" cy="312.5" r="1.2" fill="#fff" stroke="#000" stroke-width="0.9"/><path d="M56 319.5h-5.500l5.500-5.500z" fill="#707070"/><polygon points="23.0,334.2 18.9,341.4 10.6,341.4 6.4,334.2 10.5,327.0 18.9,327.0" fill="none" stroke="#444" stroke-width="0.9"/><path d="M14.700 334.200H22.700" stroke="#000" stroke-width="0.900"/><circle cx="14.7" cy="334.2" r="1.2" fill="#fff" stroke="#000" stroke-width="0.9"/><circle cx="22.7" cy="334.2" r="1.2" fill="#fff" stroke="#000" stroke-width="0.9"/><path d="M28 347.5h-5.500l5.500-5.500z" fill="#707070"/><path d="M44 328H51.500V336" fill="none" stroke="#999" stroke-width="0.700"/><path d="M35 328H42C48 328 51 332 51 343" fill="none" stroke="#000" stroke-width="1.900"/><rect x="33.4" y="326.4" width="3.2" height="3.2" fill="#fff" stroke="#000" stroke-width="1"/><rect x="49.2" y="341.4" width="3.2" height="3.2" fill="#fff" stroke="#000" stroke-width="1"/><path d="M56 347.5h-5.500l5.500-5.500z" fill="#707070"/><path d="M10.800 355L23.300 355L18 370.800L7 365.800Z" fill="url(#bl2)" stroke="#223" stroke-width="0.900"/><path d="M17 355L12.500 368.300M9 360.500L20.500 363" stroke="#223" stroke-width="0.800" fill="none"/><rect x="9.2" y="353.4" width="3.2" height="3.2" fill="#fff" stroke="#000" stroke-width="1"/><rect x="21.7" y="353.4" width="3.2" height="3.2" fill="#fff" stroke="#000" stroke-width="1"/><rect x="5.4" y="364.2" width="3.2" height="3.2" fill="#fff" stroke="#000" stroke-width="1"/><rect x="16.4" y="369.2" width="3.2" height="3.2" fill="#fff" stroke="#000" stroke-width="1"/><path d="M28 375.5h-5.500l5.500-5.500z" fill="#707070"/><path d="M35 358L42 353.500C48 355 51.500 358 52 363V368L45 372.500V366C44.500 362 41 359.500 35 358Z" fill="url(#bl2)" stroke="#000" stroke-width="1" stroke-linejoin="round"/><path d="M35 358L42 353.500L47.500 356L40.500 360.200Z" fill="#fff" stroke="#000" stroke-width="0.800"/><path d="M45 366V372.500L52 368V363Z" fill="#fff" stroke="#000" stroke-width="0.800"/><path d="M56 375.5h-5.500l5.500-5.500z" fill="#707070"/><path d="M6.500 387L14.500 382.500L22.500 386V396L14.500 400.300L6.500 397Z" fill="#5a78f0" stroke="#000" stroke-width="1" stroke-linejoin="round"/><path d="M6.500 387L14.500 382.500L22.500 386L14.500 390Z" fill="#8aa0ff" stroke="#000" stroke-width="0.800"/><path d="M14.500 390V400.300L22.500 396V386Z" fill="#3a55d8" stroke="#000" stroke-width="0.800"/><path d="M28 403.5h-5.500l5.500-5.500z" fill="#707070"/><circle cx="39.200" cy="394.200" r="6.800" fill="url(#bs)" stroke="#000" stroke-width="1"/><path d="M32.500 393Q39 396.500 46 393M38 387.500Q36 394 38.500 401" fill="none" stroke="#223" stroke-width="0.800"/><circle cx="46.700" cy="387" r="6.800" fill="url(#bs)" stroke="#000" stroke-width="1"/><path d="M40 386Q46.500 389.500 53.500 386M45.500 380.300Q43.500 387 46 393.800" fill="none" stroke="#223" stroke-width="0.800"/><path d="M56 403.5h-5.500l5.500-5.500z" fill="#707070"/><ellipse cx="15" cy="410.800" rx="5.800" ry="2.700" fill="none" stroke="#000" stroke-width="1"/><path d="M4.300 416.700Q15 421.500 25.700 416.700V426Q15 432 4.300 426Z" fill="#5a78f0" stroke="#000" stroke-width="1" stroke-linejoin="round"/><ellipse cx="15" cy="424.200" rx="5" ry="2.200" fill="#8aa0ff" stroke="#fff" stroke-width="1.400"/><path d="M28 431.5h-5.500l5.500-5.500z" fill="#707070"/><path d="M41 409L53.500 413.500L46.500 428L32.700 423.500Z" fill="url(#bl2)" stroke="#223" stroke-width="0.900" stroke-linejoin="round"/><path d="M37 416L50 420.500M45 410.500Q44 419 39 426M49 412Q48 420 43 427" stroke="#223" stroke-width="0.800" fill="none"/><path d="M56 431.5h-5.500l5.500-5.500z" fill="#707070"/><path d="M5.500 443.500L8.500 440.500C7.500 438 10.500 436.500 12 438.500L14.500 437L17 440.500C19.500 439.500 20.500 442.500 18.500 443.500L19.500 446L15 448.500C16 451 13 452 11.500 450L9 451Z" fill="#ffa800" stroke="#7a4a00" stroke-width="0.900" stroke-linejoin="round"/><path d="M13 450.500L16.500 447.500C15.500 445 18.500 444 20 446L22.500 444.500L25.500 448.500L23 450C24.500 452 22.500 453.500 21 452.500L21.500 455.500L17.500 457L16 454.500C14.500 456 12.500 454 14 452.500Z" fill="#fff" stroke="#444" stroke-width="0.900" stroke-linejoin="round"/><path d="M31 458.500L36.500 439.500L41 449L49 439.500L46.500 451.500L53 453.500L44.500 455L46 458.500L40.500 456.500L38.500 458.500Z" fill="url(#or)"/><path d="M36.500 439.500L41 449L49 439.500L46.500 451.500L53 453.500L44.500 455" fill="none" stroke="#222" stroke-width="0.800"/><path d="M15.500 465H21.500L17.500 477H13.500Z" fill="#1a2a8a"/><rect x="4.500" y="474" width="10.500" height="4.600" fill="#fff" stroke="#000" stroke-width="1.100"/><path d="M15.500 479.500L19 476L23.500 480.500L20 484Z" fill="#fff" stroke="#555" stroke-width="0.900"/><path d="M44.500 465.800H50.500L46.500 479H42.500Z" fill="#1a2a8a"/><rect x="33.500" y="475" width="18" height="4.600" fill="#fff" stroke="#000" stroke-width="1.100"/><path d="M44.800 465.800H50.500L46.700 478.500H43Z" fill="#1a2a8a"/><path d="M15 496.500A4.500 4.500 0 0 1 19.300 501.500A4.300 4.300 0 0 1 19 509.800H11A4.300 4.300 0 0 1 10.700 501.500A4.500 4.500 0 0 1 15 496.500Z" fill="#000"/><circle cx="15" cy="501" r="3.300" fill="#9a98f0"/><circle cx="11.700" cy="505.800" r="3" fill="#fff"/><circle cx="18.300" cy="505.800" r="3" fill="#1a1a7a"/><path d="M28 516h-5.500l5.500-5.500z" fill="#707070"/><circle cx="43.300" cy="498.700" r="3.300" fill="#9a98f0" stroke="#7a78d0" stroke-width="0.500"/><circle cx="38" cy="507" r="3.400" fill="#fff" stroke="#666" stroke-width="0.700"/><circle cx="48.300" cy="507" r="3.400" fill="#1a1a7a"/><path d="M5.500 526C14 525 20 530 20 541" fill="none" stroke="#000" stroke-width="1.300"/><rect x="8.6" y="524.4" width="2.8" height="2.8" fill="#fff" stroke="#000" stroke-width="1"/><rect x="18.6" y="534.4" width="2.8" height="2.8" fill="#fff" stroke="#000" stroke-width="1"/><path d="M33 526.500C42 526.500 48 532 48 541.500" fill="none" stroke="#000" stroke-width="1.800"/><path d="M32.500 521.500C46 521.500 52 528 52 541" fill="none" stroke="#000" stroke-width="1" stroke-dasharray="1.200 1.500"/><rect x="38.6" y="520.3" width="2.8" height="2.8" fill="#fff" stroke="#000" stroke-width="1"/><rect x="50.6" y="532.6" width="2.8" height="2.8" fill="#fff" stroke="#000" stroke-width="1"/><path d="M56 544h-5.500l5.500-5.500z" fill="#707070"/><path d="M6 551L14 548.300L22.500 552V557L20 556L18 554.500V566L20.500 568L15.500 569.800L10.500 567.500L13 566V553.500L9 554.500L6 556.500Z" fill="url(#bl2)" stroke="#1a2a8a" stroke-width="0.900" stroke-linejoin="round"/><rect x="46.500" y="549.500" width="6" height="6" fill="url(#bl2)" stroke="#000" stroke-width="0.900"/><rect x="34.500" y="561.500" width="6" height="6" fill="#eee" stroke="#000" stroke-width="0.900"/><path d="M40.500 561.500L45.500 556.500" stroke="#000" stroke-width="0.900"/><path d="M46.300 555.700l-3 .7 2.300 2.300z" fill="#000"/><path d="M56 572h-5.500l5.500-5.500z" fill="#707070"/><rect x="6.5" y="577.7" width="6" height="6" fill="url(#bl2)" stroke="#000" stroke-width="0.900"/><rect x="18.5" y="580.7" width="6" height="6" fill="url(#bl2)" stroke="#000" stroke-width="0.900"/><rect x="14.5" y="583.5" width="6" height="6" fill="url(#bl2)" stroke="#000" stroke-width="0.900"/><rect x="6.5" y="589.5" width="6" height="6" fill="#eee" stroke="#000" stroke-width="0.900"/><rect x="18.5" y="591.5" width="6" height="6" fill="url(#bl2)" stroke="#000" stroke-width="0.900"/><rect x="32.500" y="578.800" width="4.600" height="13.400" fill="#fff" stroke="#000" stroke-width="1"/><path d="M38 581.500H45V584" fill="none" stroke="#000" stroke-width="0.900"/><path d="M45 585.500l-1.600-2.600h3.200z" fill="#000"/><path d="M40.500 592.500L50 583.800L53 587.300L43.500 596Z" fill="url(#bl2)" stroke="#1a2a8a" stroke-width="0.900"/><path d="M5.300 610L15 604.300L25 609V620L15 625.300L5.300 621Z" fill="#5a78f0" stroke="#000" stroke-width="1" stroke-linejoin="round"/><path d="M5.300 610L15 604.300L25 609L15 614Z" fill="#9ab0ff" stroke="#000" stroke-width="0.700"/><path d="M15 614V625.300L25 620V609Z" fill="#3a55d8"/><path d="M12 618.500L16.500 616L20.500 617.500V622.500L16.500 624.500L12 623Z" fill="#fff" stroke="#000" stroke-width="0.800"/><path d="M16.500 619.500V624.500L20.500 622.500V617.500Z" fill="#ccc" stroke="#000" stroke-width="0.600"/><path d="M28 628h-5.500l5.500-5.500z" fill="#707070"/><path d="M36 618.500H54L49.500 623.300H32.500Z" fill="#7a90f0" stroke="#1a2a8a" stroke-width="0.900"/><path d="M37.500 620V611M43 620V611M48.800 620V611" stroke="#fff" stroke-width="1.700"/><path d="M37.500 608l2.200 3.500h-4.400zM43 608l2.200 3.500h-4.400zM48.800 608l2.200 3.500h-4.400z" fill="#fff"/><path d="M56 628h-5.500l5.500-5.500z" fill="#707070"/><rect x="5.6" y="634" width="4" height="4" fill="url(#bl2)" stroke="#000" stroke-width="1"/><rect x="5.6" y="641" width="4" height="4" fill="url(#bl2)" stroke="#000" stroke-width="1"/><rect x="5.6" y="648" width="4" height="4" fill="#fff" stroke="#000" stroke-width="1"/><rect x="12.6" y="634" width="4" height="4" fill="url(#bl2)" stroke="#000" stroke-width="1"/><rect x="12.6" y="641" width="4" height="4" fill="url(#bl2)" stroke="#000" stroke-width="1"/><rect x="12.6" y="648" width="4" height="4" fill="url(#bl2)" stroke="#000" stroke-width="1"/><rect x="19.6" y="634" width="4" height="4" fill="url(#bl2)" stroke="#000" stroke-width="1"/><rect x="19.6" y="641" width="4" height="4" fill="url(#bl2)" stroke="#000" stroke-width="1"/><rect x="19.6" y="648" width="4" height="4" fill="url(#bl2)" stroke="#000" stroke-width="1"/><path d="M28 656h-5.500l5.500-5.500z" fill="#707070"/><rect x="38.500" y="633.500" width="9" height="5" fill="#fff" stroke="#000" stroke-width="1"/><rect x="40.300" y="640.300" width="5.400" height="4.400" fill="#fff" stroke="#000" stroke-width="1"/><rect x="39.500" y="646.500" width="7" height="6" fill="#fff" stroke="#000" stroke-width="1"/><path d="M43 632V653.500" stroke="#d01010" stroke-width="1.400"/><path d="M56 656h-5.500l5.500-5.500z" fill="#707070"/><path d="M5.300 664L9.500 661.700L13.500 663.500V676L9.500 678L5.300 676.500Z" fill="#eee" stroke="#000" stroke-width="0.900" stroke-linejoin="round"/><path d="M13 661L16.500 660L19 662V666" fill="#fff" stroke="#000" stroke-width="0.800"/><path d="M16 664.500L20.500 663L23.500 665.500L18.500 680L14 681L11.500 678.500Z" fill="url(#bl2)" stroke="#000" stroke-width="0.900" stroke-linejoin="round"/><path d="M20.500 663L23.500 665.500L18.500 680L15.700 677.500Z" fill="#3a55d8"/><path d="M28 684h-5.500l5.500-5.500z" fill="#707070"/><path d="M33.500 673L36 671.500L39 675.500C42 669.500 46 665 51.500 662C46.500 667 42.500 673 39.500 679Z" fill="#000"/><path d="M56 684h-5.500l5.500-5.500z" fill="#707070"/><path d="M5.300 695L11 691.300L17 693.500V702L11.500 704.500L5.300 702.500Z" fill="url(#gy)" stroke="#222" stroke-width="0.900" stroke-linejoin="round"/><path d="M5.300 695L11 691.300L17 693.500L11.500 697Z" fill="#f0f0f0" stroke="#222" stroke-width="0.600"/><path d="M20 692.500L25 704Q20 708 14.500 704Z" fill="url(#gy)" stroke="#222" stroke-width="0.900" stroke-linejoin="round"/><path d="M28 712h-5.500l5.500-5.500z" fill="#707070"/><path d="M43 696L51.500 704.500L44 709.500L34.500 704.500Z" fill="#f0a830" stroke="#7a4a00" stroke-width="0.800" stroke-linejoin="round"/><path d="M43 696L44 709.500L51.500 704.500Z" fill="#c87a10"/><path d="M43 696L44 709.500L34.500 704.500Z" fill="#ffc860"/><path d="M40.500 692L45.500 687.500H52V691.500L46 693.500Z" fill="#eee" stroke="#777" stroke-width="0.700"/><path d="M41.500 692l2.500 1.200M43 690.700l2.500 1.200M44.500 689.400l2.500 1.200" stroke="#555" stroke-width="0.600"/><rect x="52.300" y="686.800" width="2.400" height="5.600" fill="#000"/><path d="M47.500 687.100h5M47.500 692h5" stroke="#000" stroke-width="0.800"/><path d="M56 712h-5.500l5.500-5.500z" fill="#707070"/></svg>
<svg style="left:0;top:0" width="1440" height="262"><defs><radialGradient id="bsp2" cx="0.35" cy="0.3" r="0.8"><stop offset="0" stop-color="#6a90f8"/><stop offset="0.5" stop-color="#0a34c0"/><stop offset="1" stop-color="#001060"/></radialGradient>
<linearGradient id="fold2" x1="0" y1="0" x2="0" y2="1"><stop offset="0" stop-color="#ffe680"/><stop offset="1" stop-color="#f5b400"/></linearGradient></defs><path d="M1227 220.9L1226.01 214.27A6.7 6.7 0 0 1 1227.99 214.27Z" fill="#ff0000"/><path d="M1227 220.9L1227.76 214.24A6.7 6.7 0 0 1 1229.67 214.76Z" fill="#ff3f00"/><path d="M1227 220.9L1229.46 214.67A6.7 6.7 0 0 1 1231.17 215.66Z" fill="#ff7f00"/><path d="M1227 220.9L1230.99 215.51A6.7 6.7 0 0 1 1232.39 216.91Z" fill="#ffbf00"/><path d="M1227 220.9L1232.24 216.73A6.7 6.7 0 0 1 1233.23 218.44Z" fill="#ffff00"/><path d="M1227 220.9L1233.14 218.23A6.7 6.7 0 0 1 1233.66 220.14Z" fill="#bfff00"/><path d="M1227 220.9L1233.63 219.91A6.7 6.7 0 0 1 1233.63 221.89Z" fill="#7fff00"/><path d="M1227 220.9L1233.66 221.66A6.7 6.7 0 0 1 1233.14 223.57Z" fill="#3fff00"/><path d="M1227 220.9L1233.23 223.36A6.7 6.7 0 0 1 1232.24 225.07Z" fill="#00ff00"/><path d="M1227 220.9L1232.39 224.89A6.7 6.7 0 0 1 1230.99 226.29Z" fill="#00ff3f"/><path d="M1227 220.9L1231.17 226.14A6.7 6.7 0 0 1 1229.46 227.13Z" fill="#00ff7f"/><path d="M1227 220.9L1229.67 227.04A6.7 6.7 0 0 1 1227.76 227.56Z" fill="#00ffbf"/><path d="M1227 220.9L1227.99 227.53A6.7 6.7 0 0 1 1226.01 227.53Z" fill="#00ffff"/><path d="M1227 220.9L1226.24 227.56A6.7 6.7 0 0 1 1224.33 227.04Z" fill="#00bfff"/><path d="M1227 220.9L1224.54 227.13A6.7 6.7 0 0 1 1222.83 226.14Z" fill="#007fff"/><path d="M1227 220.9L1223.01 226.29A6.7 6.7 0 0 1 1221.61 224.89Z" fill="#003fff"/><path d="M1227 220.9L1221.76 225.07A6.7 6.7 0 0 1 1220.77 223.36Z" fill="#0000ff"/><path d="M1227 220.9L1220.86 223.57A6.7 6.7 0 0 1 1220.34 221.66Z" fill="#3f00ff"/><path d="M1227 220.9L1220.37 221.89A6.7 6.7 0 0 1 1220.37 219.91Z" fill="#7f00ff"/><path d="M1227 220.9L1220.34 220.14A6.7 6.7 0 0 1 1220.86 218.23Z" fill="#bf00ff"/><path d="M1227 220.9L1220.77 218.44A6.7 6.7 0 0 1 1221.76 216.73Z" fill="#ff00ff"/><path d="M1227 220.9L1221.61 216.91A6.7 6.7 0 0 1 1223.01 215.51Z" fill="#ff00bf"/><path d="M1227 220.9L1222.83 215.66A6.7 6.7 0 0 1 1224.54 214.67Z" fill="#ff007f"/><path d="M1227 220.9L1224.33 214.76A6.7 6.7 0 0 1 1226.24 214.24Z" fill="#ff003f"/><circle cx="1227" cy="220.9" r="7" fill="none" stroke="#111" stroke-width="0.900"/><circle cx="1227" cy="220.9" r="3.800" fill="#fff"/><path d="M1252.700 213.800L1266.700 217V224.500L1259 228.300L1252.700 220.500Z" fill="#1a2a9a" stroke="#000" stroke-width="1" stroke-linejoin="round"/><path d="M1253.200 219L1259 225.500L1266.200 222V219.800L1259 223.200L1253.200 217Z" fill="#eee"/><path d="M1253.200 214.300L1266.200 217.300V220.300L1259 223.500L1253.200 217.300Z" fill="#e82010"/><path d="M1253.200 214.300L1266.200 217.300L1260.500 219.600L1253.500 215.800Z" fill="#ff5a10"/><ellipse cx="1294" cy="227.500" rx="7" ry="1.800" fill="#000" opacity="0.150"/><circle cx="1293" cy="221.700" r="6.700" fill="url(#bsp2)" stroke="#000" stroke-width="0.800"/><ellipse cx="1290.200" cy="218.500" rx="2" ry="1.300" transform="rotate(-35 1290.200 218.500)" fill="#fff" opacity="0.800"/><path d="M1294 216.500Q1296 213.500 1300 214" stroke="#fff" stroke-width="2" fill="none"/><path d="M1294 216.500Q1296 213.500 1300 214" stroke="#888" stroke-width="0.500" fill="none"/><path d="M1299 212l3 2-3 2.200z" fill="#000"/><path d="M1323 224.500L1329.500 218L1333 221.500L1326.500 228Z" fill="#f2f2f2" stroke="#777" stroke-width="0.800"/><path d="M1329.500 218L1332.500 215L1335.300 217.800L1333 221.500Z" fill="#e85a20" stroke="#8a3000" stroke-width="0.700"/><path d="M1322.500 225l3.500 3.500" stroke="#555" stroke-width="1.200"/><path d="M1355.300 225.500V217.300Q1355.300 216.700 1356 216.700H1359.500L1360.500 218H1365.800Q1366.400 218 1366.400 218.700V220" fill="#ffe070" stroke="#000" stroke-width="1"/><path d="M1355.300 225.500L1358 219.900H1369L1366.400 225.500Z" fill="url(#fold2)" stroke="#000" stroke-width="1" stroke-linejoin="round"/><rect x="1389.500" y="214.800" width="13.400" height="12.400" fill="#3a55c8" stroke="#223" stroke-width="0.900"/><rect x="1389.500" y="214.800" width="13.400" height="2.400" fill="#1a2a8a"/><circle cx="1396.200" cy="222.200" r="4.200" fill="#5a78f0"/><text x="1396.200" y="225.600" font-family="Liberation Serif" font-weight="bold" font-size="9" text-anchor="middle" fill="#fff">?</text><rect x="1429.3" y="213.70000000000002" width="3.400" height="4" rx="0.700" transform="rotate(0 1431 220.9)" fill="#c6c7cc"/><rect x="1429.3" y="213.70000000000002" width="3.400" height="4" rx="0.700" transform="rotate(45 1431 220.9)" fill="#c6c7cc"/><rect x="1429.3" y="213.70000000000002" width="3.400" height="4" rx="0.700" transform="rotate(90 1431 220.9)" fill="#c6c7cc"/><rect x="1429.3" y="213.70000000000002" width="3.400" height="4" rx="0.700" transform="rotate(135 1431 220.9)" fill="#c6c7cc"/><rect x="1429.3" y="213.70000000000002" width="3.400" height="4" rx="0.700" transform="rotate(180 1431 220.9)" fill="#c6c7cc"/><rect x="1429.3" y="213.70000000000002" width="3.400" height="4" rx="0.700" transform="rotate(225 1431 220.9)" fill="#c6c7cc"/><rect x="1429.3" y="213.70000000000002" width="3.400" height="4" rx="0.700" transform="rotate(270 1431 220.9)" fill="#c6c7cc"/><rect x="1429.3" y="213.70000000000002" width="3.400" height="4" rx="0.700" transform="rotate(315 1431 220.9)" fill="#c6c7cc"/><circle cx="1431" cy="220.9" r="5" fill="#c6c7cc"/><circle cx="1431" cy="220.9" r="2.100" fill="#e9ebf1"/><path d="M1222.500 244.500Q1222.500 242.500 1224.500 242.500H1227.500L1229 239.800H1236L1237.500 242.500H1240Q1242 242.500 1242 244.500V252Q1242 254 1240 254H1224.500Q1222.500 254 1222.500 252Z" fill="#333" stroke="#111" stroke-width="0.800"/><circle cx="1234" cy="248.300" r="4.700" fill="#222" stroke="#999" stroke-width="0.900"/><circle cx="1234" cy="248.300" r="2.600" fill="#2a4a3a" stroke="#6a8a9a" stroke-width="0.700"/><circle cx="1233" cy="247.300" r="0.800" fill="#cde"/><rect x="1224" y="245" width="3" height="1.600" fill="#777"/><rect x="1250.500" y="235.500" width="23" height="23" fill="#8a8a8a" stroke="#555" stroke-width="0.800"/><rect x="1252" y="237.200" width="20" height="19.600" fill="#bcbcbc"/><rect x="1252.800" y="239" width="18.400" height="16" fill="#5ab0e0"/><rect x="1254.800" y="241.200" width="14.800" height="11.600" fill="#fff" stroke="#e02020" stroke-width="1.300"/></svg>
<svg style="left:0;top:0" width="1440" height="900"><defs><linearGradient id="edge" x1="0" y1="0" x2="1" y2="1"><stop offset="0" stop-color="#35c1f1"/><stop offset="0.5" stop-color="#1b7fd4"/><stop offset="1" stop-color="#0c59a4"/></linearGradient>
<linearGradient id="edgeg" x1="0" y1="1" x2="1" y2="0"><stop offset="0" stop-color="#1b9de2"/><stop offset="1" stop-color="#6de07a"/></linearGradient>
<linearGradient id="mail" x1="0" y1="0" x2="0" y2="1"><stop offset="0" stop-color="#1a8ae0"/><stop offset="1" stop-color="#28b4f0"/></linearGradient>
<linearGradient id="photo" x1="0" y1="0" x2="0" y2="1"><stop offset="0" stop-color="#1e9cf0"/><stop offset="1" stop-color="#1458b8"/></linearGradient></defs><rect x="834" y="860" width="46" height="40" fill="#4a5a66"/><rect x="880" y="860" width="3" height="40" fill="#3a4a56"/><rect x="544" y="898" width="32" height="2" fill="#76b9ed"/><rect x="577" y="898" width="7" height="2" fill="#5a9ad0"/><rect x="834" y="898" width="49" height="2" fill="#76b9ed"/><rect x="887" y="898" width="40" height="2" fill="#76b9ed"/><rect x="936" y="898" width="32" height="2" fill="#76b9ed"/><rect x="969" y="898" width="7" height="2" fill="#5a9ad0"/><circle cx="416" cy="880" r="6.800" fill="none" stroke="#fff" stroke-width="1.900"/><g fill="none" stroke="#fff" stroke-width="1.300"><rect x="457.500" y="875.500" width="9" height="9"/><path d="M456.500 872.500H467.500M456.500 887.500H467.500M470.500 873V876M470.500 884V887"/></g><rect x="469.300" y="877.300" width="2.400" height="5.400" fill="#fff"/><circle cx="515" cy="880" r="12" fill="url(#edge)"/><path d="M503.500 882C503 873 510 867.500 517 868.500C523.500 869.500 527.500 875 527 880.500C526 884.500 521 885.500 518 883.500C521 881 520 877 516 876.500C510 876 506 880 508.500 886C505.500 884.500 504 883.500 503.500 882Z" fill="url(#edgeg)"/><path d="M508.500 886C506 880 510 876 516 876.500C513 877.500 511.500 881 513.500 884.500C516 888.500 522 889 525.500 885.500C522 891.500 513 893 508.500 886Z" fill="#0c4a94"/><path d="M553 870.500Q553 869.500 554 869.500H560L561.500 871.500H573Q574 871.500 574 872.500V876H553Z" fill="#f0b020"/><rect x="552.500" y="872.800" width="22" height="16.200" rx="0.800" fill="#ffd864"/><path d="M552.500 880H574.500V889H552.500Z" fill="#f5c030"/><rect x="557.500" y="881.500" width="12" height="7.500" fill="#3a8ae0"/><rect x="560" y="884.500" width="7" height="4.500" fill="#ffd864"/><path d="M607.500 874V872.500Q607.500 869.500 612 869.500T616.500 872.500V874" fill="none" stroke="#1a8ae0" stroke-width="1.400"/><path d="M601.500 874H622.500V888.500Q622.500 891.500 619.500 891.500H604.500Q601.500 891.500 601.500 888.500Z" fill="#f2f2f2"/><rect x="608" y="878" width="3.600" height="3.600" fill="#f25022"/><rect x="612.400" y="878" width="3.600" height="3.600" fill="#7fba00"/><rect x="608" y="882.400" width="3.600" height="3.600" fill="#00a4ef"/><rect x="612.400" y="882.400" width="3.600" height="3.600" fill="#ffb900"/><path d="M650 876.500L662 868.500L674 876.500V891H650Z" fill="#1466c0"/><path d="M650 877H674V891H650Z" fill="url(#mail)"/><path d="M651 877.500L662 886L673 877.500Z" fill="#fff"/><path d="M650 877L662 886.500L674 877" fill="none" stroke="#1a7ad0" stroke-width="0.800"/><rect x="699" y="868" width="24" height="24" fill="#f0dcd8"/><path d="M702.500 888.500L709.500 871H713.500L720 888.500H716L714.500 884.500H707.500L706 888.500ZM708.700 881.500H713.300L711.300 875.500Z" fill="#c02020"/><path d="M702.500 888.500L709.500 871H711L705 888.500Z" fill="#8a1010"/><path d="M752 870H763L767 874V890H752Z" fill="#f4f4f4"/><path d="M763 870V874H767Z" fill="#c8c8c8"/><text x="798.500" y="881.500" font-family="Liberation Serif" font-style="italic" font-weight="bold" font-size="14.500" fill="#00e020" textLength="20" lengthAdjust="spacingAndGlyphs">IPT</text><text x="804.500" y="889.800" font-family="Liberation Serif" font-weight="bold" font-size="9.500" fill="#20a0ff">5</text><rect x="846" y="868" width="24" height="23" fill="#0a0a0a"/><path d="M848 870.500C850 869 852 870 853.500 872L856.500 875.500L862 878L866 884.500L868 890H862L860 886L855 884.500L852 881L849.500 880L848.500 877L851 876L849 873Z" fill="#f0f0f0"/><path d="M852.500 877l2 1.500M856 881l3 1M858 877.500l2 2.500" stroke="#333" stroke-width="0.700"/><text x="862.500" y="877.500" font-family="Liberation Serif" font-size="9.500" fill="#fff">6</text><circle cx="906.500" cy="880" r="11.500" fill="#e8453c"/><path d="M906.500 880L896.500 874.300A11.500 11.500 0 0 0 906 891.500Z" fill="#2da94f"/><path d="M906.500 880L906 891.500A11.500 11.500 0 0 0 916.500 874.300Z" fill="#fcc934"/><path d="M896.500 874.300A11.500 11.500 0 0 1 916.500 874.300H906.500Z" fill="#e8453c"/><path d="M906.500 880L901.500 883L896.500 874.300A11.500 11.500 0 0 0 906 891.500L911 883Z" fill="#2da94f"/><circle cx="906.500" cy="880" r="5.300" fill="#fff"/><circle cx="906.500" cy="880" r="4.200" fill="#4285f4"/><rect x="945" y="869" width="22" height="22" rx="1" fill="url(#photo)"/><circle cx="960" cy="874" r="1.800" fill="#fff"/><path d="M945 887L953 877L960.500 886L963 883.500L967 887.500V890Q967 891 966 891H946Q945 891 945 890Z" fill="#0c3c8a"/><path d="M955 891L962 882.500L967 887.500V890Q967 891 966 891Z" fill="#2a5cc0" opacity="0.900"/><circle cx="1132.500" cy="877" r="6" fill="#ffb81c"/><circle cx="1132.500" cy="877" r="4.500" fill="#ffd24a"/><path d="M1125.500 889.500A4 4 0 0 1 1125.500 881.500A5 5 0 0 1 1134.500 880A4.800 4.800 0 0 1 1138.500 889.500Z" fill="#eef4fa"/><path d="M1125.500 889.500A4 4 0 0 1 1123 887H1141A4.800 4.800 0 0 1 1138.500 889.500Z" fill="#c8dcf0"/><path d="M1197.500 883L1203 877.500L1208.500 883" fill="none" stroke="#fff" stroke-width="1.300"/><g fill="none" stroke="#fff" stroke-width="1.100"><rect x="1223" y="876" width="7" height="7" rx="1.500"/><path d="M1230 878.500L1232.500 877V882L1230 880.500M1224 873.500Q1227.500 871.500 1231 873.500M1224 885.500Q1227.500 887.500 1231 885.500"/></g><g fill="none" stroke-width="1.300"><path d="M1246.500 886.500A11 11 0 0 1 1257.500 875.500" stroke="#8a98a8"/><path d="M1249.700 886.500A7.800 7.800 0 0 1 1257.500 878.700" stroke="#fff"/><path d="M1252.900 886.500A4.600 4.600 0 0 1 1257.500 881.900" stroke="#fff"/></g><circle cx="1256.500" cy="885.800" r="1.200" fill="#fff"/><g fill="none" stroke="#fff" stroke-width="1.100"><path d="M1267.500 877.500H1270L1273.500 874.500V885.500L1270 882.500H1267.500Z"/><path d="M1276 877.500Q1277.500 880 1276 882.500M1278.300 875.500Q1281 880 1278.300 884.500M1280.600 873.500Q1284.500 880 1280.600 886.500"/></g><path d="M1399.500 872.500H1414.500V884.500H1409.500L1407 887.500L1404.500 884.500H1399.500Z" fill="none" stroke="#fff" stroke-width="1.300" stroke-linejoin="round"/><rect x="1435" y="862" width="1" height="38" fill="#5a6878"/></svg>
<div class="a" style="left:1151.48px;top:871.93px;font-size:14.5px;line-height:18px;height:18px;color:#fff;letter-spacing:-0.695px;">38°F</div>
<div class="a" style="left:1292.16px;top:873.39px;font-size:12px;line-height:15px;height:15px;color:#fff;letter-spacing:-0.835px;">ENG</div>
<div class="a" style="left:1333.66px;top:864.09px;font-size:12px;line-height:15px;height:15px;color:#fff;letter-spacing:-0.455px;">1:15 PM</div>
<div class="a" style="left:1326.66px;top:881.69px;font-size:12px;line-height:15px;height:15px;color:#fff;letter-spacing:-0.405px;">12/14/2021</div>
<svg style="left:0;top:0" width="22" height="22"><path d="M5 3H18V12L11.500 18.500H2.200V11.500L4 10Z" fill="#111"/><path d="M11 18.700H18V12Z" fill="#111"/><path d="M4.500 3.300L6.500 3L9.500 9L14 11.500L17.500 12.300L11.500 18.300L8.500 16.500L5 13L2.500 11L3.500 8.500Z" fill="#fff"/><path d="M5.500 11.500l3.500 2.500M6.500 10l3 2M9.500 14.500l2 1.500" stroke="#222" stroke-width="0.800"/><path d="M9 9.300L12 3.500H10L8.700 6.500Z" fill="#111"/><text x="13" y="9.800" font-family="Liberation Sans" font-weight="bold" font-size="7.500" fill="#fff">6</text></svg>
</body></html>
